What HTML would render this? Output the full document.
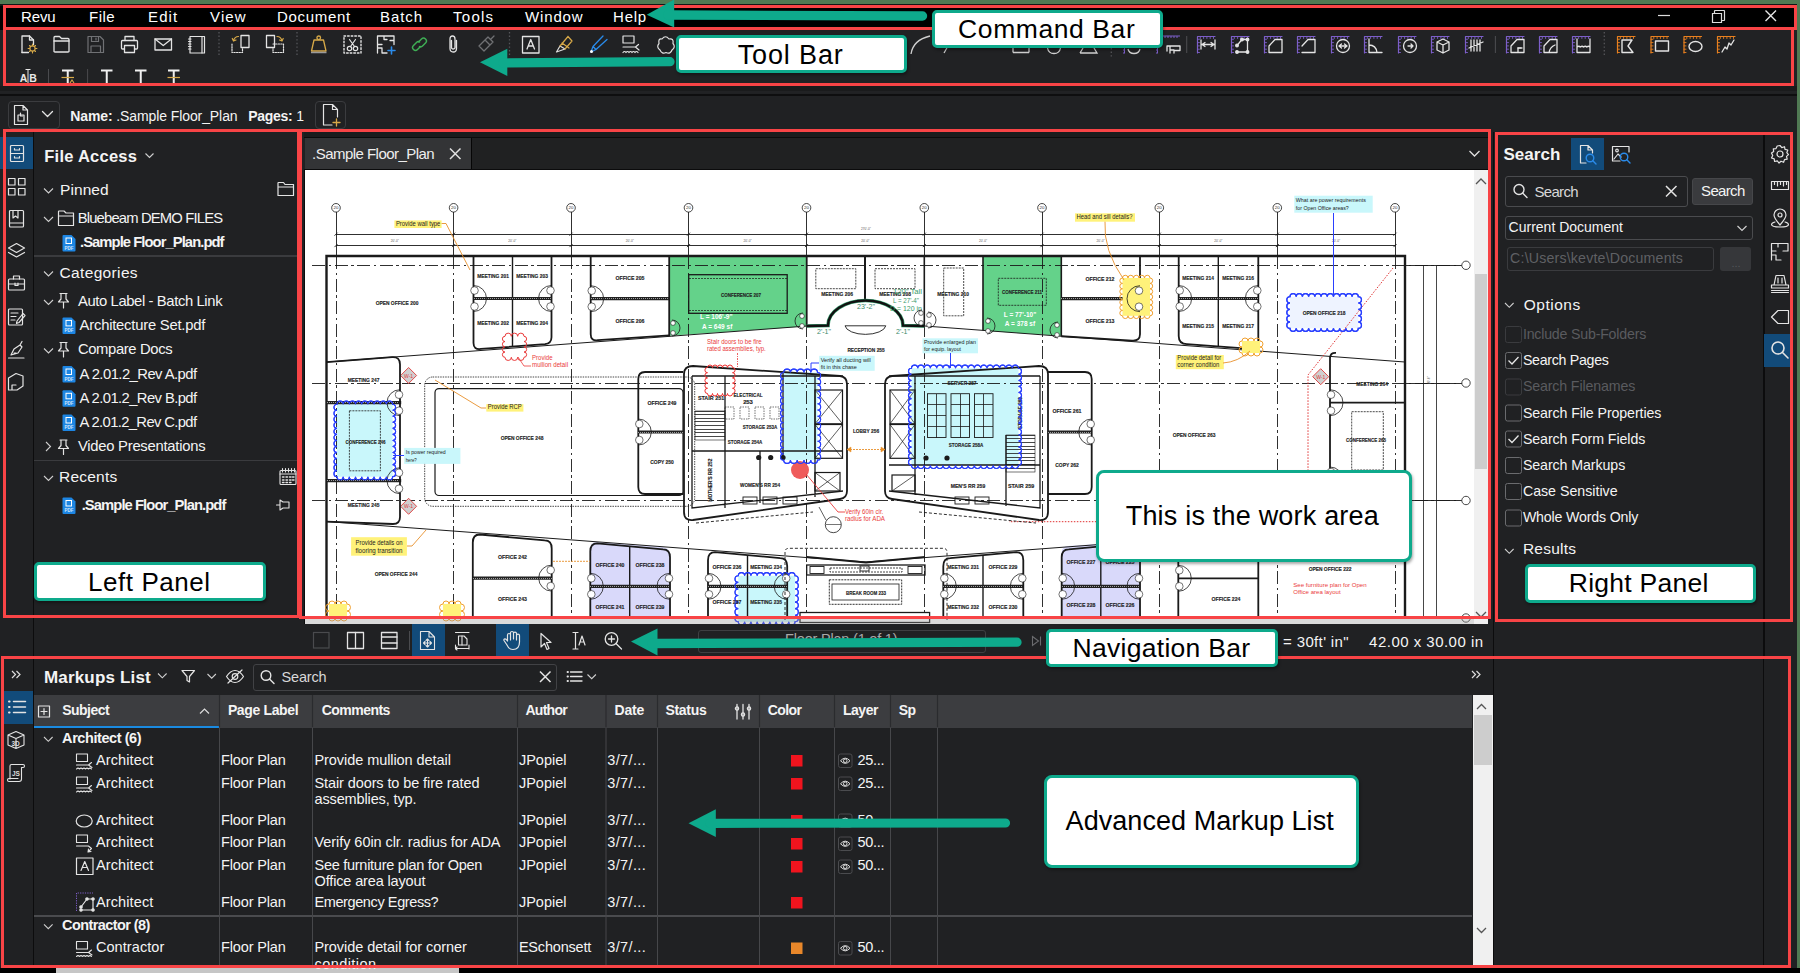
<!DOCTYPE html>
<html><head><meta charset="utf-8">
<style>
*{margin:0;padding:0;box-sizing:border-box}
html,body{width:1800px;height:973px;overflow:hidden;background:#202123;font-family:"Liberation Sans",sans-serif;color:#fff}
.a{position:absolute}
.t{position:absolute;white-space:pre;line-height:1;z-index:4}
.rr{position:absolute;border:3px solid #f84446;z-index:50}
.lab{position:absolute;background:#fff;border:3.7px solid #0eaa8c;z-index:60;box-shadow:1px 2px 3px rgba(0,0,0,.35)}
svg{position:absolute;overflow:visible}
</style></head>
<body>
<div class="a" style="left:0;top:0;width:1800px;height:4px;background:#507a53"></div>
<div class="a" style="left:1797px;top:0;width:3px;height:968px;background:#507a53"></div>
<div class="a" style="left:0;top:4px;width:1797px;height:2px;background:#151515"></div>
<div class="a" style="left:0;top:6px;width:1797px;height:24px;background:#000"></div>
<div class="a" style="left:0;top:30px;width:1797px;height:63px;background:#212224"></div>
<div class="a" style="left:0;top:86px;width:1797px;height:5px;background:#1a1b1c"></div>
<div class="a" style="left:0;top:93.5px;width:1797px;height:2.5px;background:#0e0e0f"></div>
<div class="a" style="left:0;top:96px;width:1797px;height:36px;background:#202123"></div>
<div class="a" style="left:8px;top:101px;width:52px;height:28px;border:1px solid #3b3c3f;border-radius:4px"></div>
<div class="a" style="left:315px;top:101px;width:31px;height:28px;border:1px solid #3b3c3f;border-radius:4px"></div>
<!-- left panel -->
<div class="a" style="left:0;top:132px;width:34px;height:524px;background:#202123;border-right:1px solid #0c0c0d"></div>
<div class="a" style="left:0;top:137px;width:33px;height:32px;background:#124b7a"></div>
<div class="a" style="left:34px;top:132px;width:266px;height:524px;background:#202123"></div>
<div class="a" style="left:34px;top:255px;width:263px;height:1.5px;background:#3a3b3e"></div>
<div class="a" style="left:34px;top:459.5px;width:263px;height:1.5px;background:#3a3b3e"></div>
<!-- work area -->
<div class="a" style="left:303.5px;top:132px;width:1px;height:524px;background:#0c0c0d"></div>
<div class="a" style="left:304px;top:132px;width:1186px;height:38px;background:#202122"></div>
<div class="a" style="left:304px;top:132px;width:1186px;height:5px;background:#1b1c1d"></div>
<div class="a" style="left:304px;top:137px;width:1186px;height:1.2px;background:#0b0b0c"></div>
<div class="a" style="left:304px;top:169px;width:1186px;height:1px;background:#0b0b0c"></div>
<div class="a" style="left:305px;top:138px;width:166px;height:31px;background:#333436"></div>
<div class="a" style="left:471px;top:138px;width:1px;height:31px;background:#060606"></div>
<div class="a" style="left:305px;top:170px;width:1170px;height:454px;background:#fff;overflow:hidden"><svg style="left:0;top:0" width="1170" height="454" viewBox="305 170 1170 454" font-family="Liberation Sans"><path d="M669.2,256 L806.7,256 L806.7,326.3 L669.2,335.8 Z" stroke="#1a1a1a" stroke-width="0" fill="#64d28a"/>
<path d="M983,256 L1061.3,256 L1061.3,335.8 L983,330.8 Z" stroke="#1a1a1a" stroke-width="0" fill="#64d28a"/>
<path d="M590.3,548 Q590.3,541.7 597,542 L663,547 Q670,548 670,555 L670,618 L590.3,618 Z" stroke="#1a1a1a" stroke-width="0" fill="#d9d9fa"/>
<path d="M1061.7,553 Q1061.7,546 1068,546 L1133,541.5 Q1140,541.5 1140,548 L1140,618 L1061.7,618 Z" stroke="#1a1a1a" stroke-width="0" fill="#d9d9fa"/>
<rect x="337" y="404.2" width="55.6" height="72.5" fill="#c9f7fb"/>
<path d="M337,404.2 a3.088888888888889,3.088888888888889 0 0 1 6.177777777777778,0 a3.088888888888889,3.088888888888889 0 0 1 6.177777777777778,0 a3.088888888888889,3.088888888888889 0 0 1 6.177777777777778,0 a3.088888888888889,3.088888888888889 0 0 1 6.177777777777778,0 a3.088888888888889,3.088888888888889 0 0 1 6.177777777777778,0 a3.088888888888889,3.088888888888889 0 0 1 6.177777777777778,0 a3.088888888888889,3.088888888888889 0 0 1 6.177777777777778,0 a3.088888888888889,3.088888888888889 0 0 1 6.177777777777778,0 a3.088888888888889,3.088888888888889 0 0 1 6.177777777777778,0 a3.0208333333333335,3.0208333333333335 0 0 1 0,6.041666666666667 a3.0208333333333335,3.0208333333333335 0 0 1 0,6.041666666666667 a3.0208333333333335,3.0208333333333335 0 0 1 0,6.041666666666667 a3.0208333333333335,3.0208333333333335 0 0 1 0,6.041666666666667 a3.0208333333333335,3.0208333333333335 0 0 1 0,6.041666666666667 a3.0208333333333335,3.0208333333333335 0 0 1 0,6.041666666666667 a3.0208333333333335,3.0208333333333335 0 0 1 0,6.041666666666667 a3.0208333333333335,3.0208333333333335 0 0 1 0,6.041666666666667 a3.0208333333333335,3.0208333333333335 0 0 1 0,6.041666666666667 a3.0208333333333335,3.0208333333333335 0 0 1 0,6.041666666666667 a3.0208333333333335,3.0208333333333335 0 0 1 0,6.041666666666667 a3.0208333333333335,3.0208333333333335 0 0 1 0,6.041666666666667 a3.088888888888889,3.088888888888889 0 0 1 -6.177777777777778,0 a3.088888888888889,3.088888888888889 0 0 1 -6.177777777777778,0 a3.088888888888889,3.088888888888889 0 0 1 -6.177777777777778,0 a3.088888888888889,3.088888888888889 0 0 1 -6.177777777777778,0 a3.088888888888889,3.088888888888889 0 0 1 -6.177777777777778,0 a3.088888888888889,3.088888888888889 0 0 1 -6.177777777777778,0 a3.088888888888889,3.088888888888889 0 0 1 -6.177777777777778,0 a3.088888888888889,3.088888888888889 0 0 1 -6.177777777777778,0 a3.088888888888889,3.088888888888889 0 0 1 -6.177777777777778,0 a3.0208333333333335,3.0208333333333335 0 0 1 0,-6.041666666666667 a3.0208333333333335,3.0208333333333335 0 0 1 0,-6.041666666666667 a3.0208333333333335,3.0208333333333335 0 0 1 0,-6.041666666666667 a3.0208333333333335,3.0208333333333335 0 0 1 0,-6.041666666666667 a3.0208333333333335,3.0208333333333335 0 0 1 0,-6.041666666666667 a3.0208333333333335,3.0208333333333335 0 0 1 0,-6.041666666666667 a3.0208333333333335,3.0208333333333335 0 0 1 0,-6.041666666666667 a3.0208333333333335,3.0208333333333335 0 0 1 0,-6.041666666666667 a3.0208333333333335,3.0208333333333335 0 0 1 0,-6.041666666666667 a3.0208333333333335,3.0208333333333335 0 0 1 0,-6.041666666666667 a3.0208333333333335,3.0208333333333335 0 0 1 0,-6.041666666666667 a3.0208333333333335,3.0208333333333335 0 0 1 0,-6.041666666666667Z" stroke="#2a40ff" stroke-width="1.1" fill="none"/>
<rect x="738.3" y="575.8" width="56.7" height="46" fill="#c9f7fb"/>
<path d="M738.3,575.8 a3.1500000000000004,3.1500000000000004 0 0 1 6.300000000000001,0 a3.1500000000000004,3.1500000000000004 0 0 1 6.300000000000001,0 a3.1500000000000004,3.1500000000000004 0 0 1 6.300000000000001,0 a3.1500000000000004,3.1500000000000004 0 0 1 6.300000000000001,0 a3.1500000000000004,3.1500000000000004 0 0 1 6.300000000000001,0 a3.1500000000000004,3.1500000000000004 0 0 1 6.300000000000001,0 a3.1500000000000004,3.1500000000000004 0 0 1 6.300000000000001,0 a3.1500000000000004,3.1500000000000004 0 0 1 6.300000000000001,0 a3.1500000000000004,3.1500000000000004 0 0 1 6.300000000000001,0 a3.2857142857142856,3.2857142857142856 0 0 1 0,6.571428571428571 a3.2857142857142856,3.2857142857142856 0 0 1 0,6.571428571428571 a3.2857142857142856,3.2857142857142856 0 0 1 0,6.571428571428571 a3.2857142857142856,3.2857142857142856 0 0 1 0,6.571428571428571 a3.2857142857142856,3.2857142857142856 0 0 1 0,6.571428571428571 a3.2857142857142856,3.2857142857142856 0 0 1 0,6.571428571428571 a3.2857142857142856,3.2857142857142856 0 0 1 0,6.571428571428571 a3.1500000000000004,3.1500000000000004 0 0 1 -6.300000000000001,0 a3.1500000000000004,3.1500000000000004 0 0 1 -6.300000000000001,0 a3.1500000000000004,3.1500000000000004 0 0 1 -6.300000000000001,0 a3.1500000000000004,3.1500000000000004 0 0 1 -6.300000000000001,0 a3.1500000000000004,3.1500000000000004 0 0 1 -6.300000000000001,0 a3.1500000000000004,3.1500000000000004 0 0 1 -6.300000000000001,0 a3.1500000000000004,3.1500000000000004 0 0 1 -6.300000000000001,0 a3.1500000000000004,3.1500000000000004 0 0 1 -6.300000000000001,0 a3.1500000000000004,3.1500000000000004 0 0 1 -6.300000000000001,0 a3.2857142857142856,3.2857142857142856 0 0 1 0,-6.571428571428571 a3.2857142857142856,3.2857142857142856 0 0 1 0,-6.571428571428571 a3.2857142857142856,3.2857142857142856 0 0 1 0,-6.571428571428571 a3.2857142857142856,3.2857142857142856 0 0 1 0,-6.571428571428571 a3.2857142857142856,3.2857142857142856 0 0 1 0,-6.571428571428571 a3.2857142857142856,3.2857142857142856 0 0 1 0,-6.571428571428571 a3.2857142857142856,3.2857142857142856 0 0 1 0,-6.571428571428571Z" stroke="#2a40ff" stroke-width="1.1" fill="none"/>
<rect x="783.7" y="372.5" width="33.8" height="87.5" fill="#c9f7fb"/>
<path d="M783.7,372.5 a3.38,3.38 0 0 1 6.76,0 a3.38,3.38 0 0 1 6.76,0 a3.38,3.38 0 0 1 6.76,0 a3.38,3.38 0 0 1 6.76,0 a3.38,3.38 0 0 1 6.76,0 a3.125,3.125 0 0 1 0,6.25 a3.125,3.125 0 0 1 0,6.25 a3.125,3.125 0 0 1 0,6.25 a3.125,3.125 0 0 1 0,6.25 a3.125,3.125 0 0 1 0,6.25 a3.125,3.125 0 0 1 0,6.25 a3.125,3.125 0 0 1 0,6.25 a3.125,3.125 0 0 1 0,6.25 a3.125,3.125 0 0 1 0,6.25 a3.125,3.125 0 0 1 0,6.25 a3.125,3.125 0 0 1 0,6.25 a3.125,3.125 0 0 1 0,6.25 a3.125,3.125 0 0 1 0,6.25 a3.125,3.125 0 0 1 0,6.25 a3.38,3.38 0 0 1 -6.76,0 a3.38,3.38 0 0 1 -6.76,0 a3.38,3.38 0 0 1 -6.76,0 a3.38,3.38 0 0 1 -6.76,0 a3.38,3.38 0 0 1 -6.76,0 a3.125,3.125 0 0 1 0,-6.25 a3.125,3.125 0 0 1 0,-6.25 a3.125,3.125 0 0 1 0,-6.25 a3.125,3.125 0 0 1 0,-6.25 a3.125,3.125 0 0 1 0,-6.25 a3.125,3.125 0 0 1 0,-6.25 a3.125,3.125 0 0 1 0,-6.25 a3.125,3.125 0 0 1 0,-6.25 a3.125,3.125 0 0 1 0,-6.25 a3.125,3.125 0 0 1 0,-6.25 a3.125,3.125 0 0 1 0,-6.25 a3.125,3.125 0 0 1 0,-6.25 a3.125,3.125 0 0 1 0,-6.25 a3.125,3.125 0 0 1 0,-6.25Z" stroke="#2a40ff" stroke-width="1.1" fill="none"/>
<rect x="911.5" y="368.3" width="107" height="97" fill="#c9f7fb"/>
<path d="M911.5,368.3 a3.1470588235294117,3.1470588235294117 0 0 1 6.294117647058823,0 a3.1470588235294117,3.1470588235294117 0 0 1 6.294117647058823,0 a3.1470588235294117,3.1470588235294117 0 0 1 6.294117647058823,0 a3.1470588235294117,3.1470588235294117 0 0 1 6.294117647058823,0 a3.1470588235294117,3.1470588235294117 0 0 1 6.294117647058823,0 a3.1470588235294117,3.1470588235294117 0 0 1 6.294117647058823,0 a3.1470588235294117,3.1470588235294117 0 0 1 6.294117647058823,0 a3.1470588235294117,3.1470588235294117 0 0 1 6.294117647058823,0 a3.1470588235294117,3.1470588235294117 0 0 1 6.294117647058823,0 a3.1470588235294117,3.1470588235294117 0 0 1 6.294117647058823,0 a3.1470588235294117,3.1470588235294117 0 0 1 6.294117647058823,0 a3.1470588235294117,3.1470588235294117 0 0 1 6.294117647058823,0 a3.1470588235294117,3.1470588235294117 0 0 1 6.294117647058823,0 a3.1470588235294117,3.1470588235294117 0 0 1 6.294117647058823,0 a3.1470588235294117,3.1470588235294117 0 0 1 6.294117647058823,0 a3.1470588235294117,3.1470588235294117 0 0 1 6.294117647058823,0 a3.1470588235294117,3.1470588235294117 0 0 1 6.294117647058823,0 a3.03125,3.03125 0 0 1 0,6.0625 a3.03125,3.03125 0 0 1 0,6.0625 a3.03125,3.03125 0 0 1 0,6.0625 a3.03125,3.03125 0 0 1 0,6.0625 a3.03125,3.03125 0 0 1 0,6.0625 a3.03125,3.03125 0 0 1 0,6.0625 a3.03125,3.03125 0 0 1 0,6.0625 a3.03125,3.03125 0 0 1 0,6.0625 a3.03125,3.03125 0 0 1 0,6.0625 a3.03125,3.03125 0 0 1 0,6.0625 a3.03125,3.03125 0 0 1 0,6.0625 a3.03125,3.03125 0 0 1 0,6.0625 a3.03125,3.03125 0 0 1 0,6.0625 a3.03125,3.03125 0 0 1 0,6.0625 a3.03125,3.03125 0 0 1 0,6.0625 a3.03125,3.03125 0 0 1 0,6.0625 a3.1470588235294117,3.1470588235294117 0 0 1 -6.294117647058823,0 a3.1470588235294117,3.1470588235294117 0 0 1 -6.294117647058823,0 a3.1470588235294117,3.1470588235294117 0 0 1 -6.294117647058823,0 a3.1470588235294117,3.1470588235294117 0 0 1 -6.294117647058823,0 a3.1470588235294117,3.1470588235294117 0 0 1 -6.294117647058823,0 a3.1470588235294117,3.1470588235294117 0 0 1 -6.294117647058823,0 a3.1470588235294117,3.1470588235294117 0 0 1 -6.294117647058823,0 a3.1470588235294117,3.1470588235294117 0 0 1 -6.294117647058823,0 a3.1470588235294117,3.1470588235294117 0 0 1 -6.294117647058823,0 a3.1470588235294117,3.1470588235294117 0 0 1 -6.294117647058823,0 a3.1470588235294117,3.1470588235294117 0 0 1 -6.294117647058823,0 a3.1470588235294117,3.1470588235294117 0 0 1 -6.294117647058823,0 a3.1470588235294117,3.1470588235294117 0 0 1 -6.294117647058823,0 a3.1470588235294117,3.1470588235294117 0 0 1 -6.294117647058823,0 a3.1470588235294117,3.1470588235294117 0 0 1 -6.294117647058823,0 a3.1470588235294117,3.1470588235294117 0 0 1 -6.294117647058823,0 a3.1470588235294117,3.1470588235294117 0 0 1 -6.294117647058823,0 a3.03125,3.03125 0 0 1 0,-6.0625 a3.03125,3.03125 0 0 1 0,-6.0625 a3.03125,3.03125 0 0 1 0,-6.0625 a3.03125,3.03125 0 0 1 0,-6.0625 a3.03125,3.03125 0 0 1 0,-6.0625 a3.03125,3.03125 0 0 1 0,-6.0625 a3.03125,3.03125 0 0 1 0,-6.0625 a3.03125,3.03125 0 0 1 0,-6.0625 a3.03125,3.03125 0 0 1 0,-6.0625 a3.03125,3.03125 0 0 1 0,-6.0625 a3.03125,3.03125 0 0 1 0,-6.0625 a3.03125,3.03125 0 0 1 0,-6.0625 a3.03125,3.03125 0 0 1 0,-6.0625 a3.03125,3.03125 0 0 1 0,-6.0625 a3.03125,3.03125 0 0 1 0,-6.0625 a3.03125,3.03125 0 0 1 0,-6.0625Z" stroke="#2a40ff" stroke-width="1.1" fill="none"/>
<rect x="1290" y="296.7" width="68.3" height="31.6" fill="#eef3ff"/>
<path d="M1290,296.7 a3.1045454545454545,3.1045454545454545 0 0 1 6.209090909090909,0 a3.1045454545454545,3.1045454545454545 0 0 1 6.209090909090909,0 a3.1045454545454545,3.1045454545454545 0 0 1 6.209090909090909,0 a3.1045454545454545,3.1045454545454545 0 0 1 6.209090909090909,0 a3.1045454545454545,3.1045454545454545 0 0 1 6.209090909090909,0 a3.1045454545454545,3.1045454545454545 0 0 1 6.209090909090909,0 a3.1045454545454545,3.1045454545454545 0 0 1 6.209090909090909,0 a3.1045454545454545,3.1045454545454545 0 0 1 6.209090909090909,0 a3.1045454545454545,3.1045454545454545 0 0 1 6.209090909090909,0 a3.1045454545454545,3.1045454545454545 0 0 1 6.209090909090909,0 a3.1045454545454545,3.1045454545454545 0 0 1 6.209090909090909,0 a3.16,3.16 0 0 1 0,6.32 a3.16,3.16 0 0 1 0,6.32 a3.16,3.16 0 0 1 0,6.32 a3.16,3.16 0 0 1 0,6.32 a3.16,3.16 0 0 1 0,6.32 a3.1045454545454545,3.1045454545454545 0 0 1 -6.209090909090909,0 a3.1045454545454545,3.1045454545454545 0 0 1 -6.209090909090909,0 a3.1045454545454545,3.1045454545454545 0 0 1 -6.209090909090909,0 a3.1045454545454545,3.1045454545454545 0 0 1 -6.209090909090909,0 a3.1045454545454545,3.1045454545454545 0 0 1 -6.209090909090909,0 a3.1045454545454545,3.1045454545454545 0 0 1 -6.209090909090909,0 a3.1045454545454545,3.1045454545454545 0 0 1 -6.209090909090909,0 a3.1045454545454545,3.1045454545454545 0 0 1 -6.209090909090909,0 a3.1045454545454545,3.1045454545454545 0 0 1 -6.209090909090909,0 a3.1045454545454545,3.1045454545454545 0 0 1 -6.209090909090909,0 a3.1045454545454545,3.1045454545454545 0 0 1 -6.209090909090909,0 a3.16,3.16 0 0 1 0,-6.32 a3.16,3.16 0 0 1 0,-6.32 a3.16,3.16 0 0 1 0,-6.32 a3.16,3.16 0 0 1 0,-6.32 a3.16,3.16 0 0 1 0,-6.32Z" stroke="#2a40ff" stroke-width="1.1" fill="none"/>
<circle cx="336" cy="207.8" r="4.3" stroke="#1a1a1a" stroke-width="0.8" fill="#fff"/>
<text x="336" y="209.4" font-size="4" fill="#333" text-anchor="middle" font-weight="normal" textLength="5" lengthAdjust="spacingAndGlyphs">20</text>
<line x1="336" y1="212" x2="336" y2="256" stroke="#1a1a1a" stroke-width="0.9" shape-rendering="crispEdges"/>
<line x1="336" y1="256" x2="336" y2="618" stroke="#1a1a1a" stroke-width="0.9" stroke-dasharray="13 3.5 2.5 3.5" shape-rendering="crispEdges"/>
<circle cx="453.6" cy="207.8" r="4.3" stroke="#1a1a1a" stroke-width="0.8" fill="#fff"/>
<text x="453.6" y="209.4" font-size="4" fill="#333" text-anchor="middle" font-weight="normal" textLength="5" lengthAdjust="spacingAndGlyphs">20</text>
<line x1="453.6" y1="212" x2="453.6" y2="256" stroke="#1a1a1a" stroke-width="0.9" shape-rendering="crispEdges"/>
<line x1="453.6" y1="256" x2="453.6" y2="618" stroke="#1a1a1a" stroke-width="0.9" stroke-dasharray="13 3.5 2.5 3.5" shape-rendering="crispEdges"/>
<circle cx="571" cy="207.8" r="4.3" stroke="#1a1a1a" stroke-width="0.8" fill="#fff"/>
<text x="571" y="209.4" font-size="4" fill="#333" text-anchor="middle" font-weight="normal" textLength="5" lengthAdjust="spacingAndGlyphs">20</text>
<line x1="571" y1="212" x2="571" y2="256" stroke="#1a1a1a" stroke-width="0.9" shape-rendering="crispEdges"/>
<line x1="571" y1="256" x2="571" y2="618" stroke="#1a1a1a" stroke-width="0.9" stroke-dasharray="13 3.5 2.5 3.5" shape-rendering="crispEdges"/>
<circle cx="688.5" cy="207.8" r="4.3" stroke="#1a1a1a" stroke-width="0.8" fill="#fff"/>
<text x="688.5" y="209.4" font-size="4" fill="#333" text-anchor="middle" font-weight="normal" textLength="5" lengthAdjust="spacingAndGlyphs">20</text>
<line x1="688.5" y1="212" x2="688.5" y2="256" stroke="#1a1a1a" stroke-width="0.9" shape-rendering="crispEdges"/>
<line x1="688.5" y1="256" x2="688.5" y2="618" stroke="#1a1a1a" stroke-width="0.9" stroke-dasharray="13 3.5 2.5 3.5" shape-rendering="crispEdges"/>
<circle cx="806.5" cy="207.8" r="4.3" stroke="#1a1a1a" stroke-width="0.8" fill="#fff"/>
<text x="806.5" y="209.4" font-size="4" fill="#333" text-anchor="middle" font-weight="normal" textLength="5" lengthAdjust="spacingAndGlyphs">20</text>
<line x1="806.5" y1="212" x2="806.5" y2="256" stroke="#1a1a1a" stroke-width="0.9" shape-rendering="crispEdges"/>
<line x1="806.5" y1="256" x2="806.5" y2="618" stroke="#1a1a1a" stroke-width="0.9" stroke-dasharray="13 3.5 2.5 3.5" shape-rendering="crispEdges"/>
<circle cx="924.3" cy="207.8" r="4.3" stroke="#1a1a1a" stroke-width="0.8" fill="#fff"/>
<text x="924.3" y="209.4" font-size="4" fill="#333" text-anchor="middle" font-weight="normal" textLength="5" lengthAdjust="spacingAndGlyphs">20</text>
<line x1="924.3" y1="212" x2="924.3" y2="256" stroke="#1a1a1a" stroke-width="0.9" shape-rendering="crispEdges"/>
<line x1="924.3" y1="256" x2="924.3" y2="618" stroke="#1a1a1a" stroke-width="0.9" stroke-dasharray="13 3.5 2.5 3.5" shape-rendering="crispEdges"/>
<circle cx="1042" cy="207.8" r="4.3" stroke="#1a1a1a" stroke-width="0.8" fill="#fff"/>
<text x="1042" y="209.4" font-size="4" fill="#333" text-anchor="middle" font-weight="normal" textLength="5" lengthAdjust="spacingAndGlyphs">20</text>
<line x1="1042" y1="212" x2="1042" y2="256" stroke="#1a1a1a" stroke-width="0.9" shape-rendering="crispEdges"/>
<line x1="1042" y1="256" x2="1042" y2="618" stroke="#1a1a1a" stroke-width="0.9" stroke-dasharray="13 3.5 2.5 3.5" shape-rendering="crispEdges"/>
<circle cx="1159.3" cy="207.8" r="4.3" stroke="#1a1a1a" stroke-width="0.8" fill="#fff"/>
<text x="1159.3" y="209.4" font-size="4" fill="#333" text-anchor="middle" font-weight="normal" textLength="5" lengthAdjust="spacingAndGlyphs">20</text>
<line x1="1159.3" y1="212" x2="1159.3" y2="256" stroke="#1a1a1a" stroke-width="0.9" shape-rendering="crispEdges"/>
<line x1="1159.3" y1="256" x2="1159.3" y2="618" stroke="#1a1a1a" stroke-width="0.9" stroke-dasharray="13 3.5 2.5 3.5" shape-rendering="crispEdges"/>
<circle cx="1277.3" cy="207.8" r="4.3" stroke="#1a1a1a" stroke-width="0.8" fill="#fff"/>
<text x="1277.3" y="209.4" font-size="4" fill="#333" text-anchor="middle" font-weight="normal" textLength="5" lengthAdjust="spacingAndGlyphs">20</text>
<line x1="1277.3" y1="212" x2="1277.3" y2="256" stroke="#1a1a1a" stroke-width="0.9" shape-rendering="crispEdges"/>
<line x1="1277.3" y1="256" x2="1277.3" y2="618" stroke="#1a1a1a" stroke-width="0.9" stroke-dasharray="13 3.5 2.5 3.5" shape-rendering="crispEdges"/>
<circle cx="1395" cy="207.8" r="4.3" stroke="#1a1a1a" stroke-width="0.8" fill="#fff"/>
<text x="1395" y="209.4" font-size="4" fill="#333" text-anchor="middle" font-weight="normal" textLength="5" lengthAdjust="spacingAndGlyphs">20</text>
<line x1="1395" y1="212" x2="1395" y2="256" stroke="#1a1a1a" stroke-width="0.9" shape-rendering="crispEdges"/>
<line x1="1395" y1="256" x2="1395" y2="618" stroke="#1a1a1a" stroke-width="0.9" stroke-dasharray="13 3.5 2.5 3.5" shape-rendering="crispEdges"/>
<line x1="312" y1="265.3" x2="1458" y2="265.3" stroke="#1a1a1a" stroke-width="0.9" stroke-dasharray="13 3.5 2.5 3.5" shape-rendering="crispEdges"/>
<line x1="1405" y1="265.3" x2="1462" y2="265.3" stroke="#1a1a1a" stroke-width="0.9" shape-rendering="crispEdges"/>
<circle cx="1466" cy="265.3" r="4.2" stroke="#1a1a1a" stroke-width="0.8" fill="#fff"/>
<line x1="312" y1="383" x2="1458" y2="383" stroke="#1a1a1a" stroke-width="0.9" stroke-dasharray="13 3.5 2.5 3.5" shape-rendering="crispEdges"/>
<line x1="1405" y1="383" x2="1462" y2="383" stroke="#1a1a1a" stroke-width="0.9" shape-rendering="crispEdges"/>
<circle cx="1466" cy="383" r="4.2" stroke="#1a1a1a" stroke-width="0.8" fill="#fff"/>
<line x1="312" y1="500.5" x2="1458" y2="500.5" stroke="#1a1a1a" stroke-width="0.9" stroke-dasharray="13 3.5 2.5 3.5" shape-rendering="crispEdges"/>
<line x1="1405" y1="500.5" x2="1462" y2="500.5" stroke="#1a1a1a" stroke-width="0.9" shape-rendering="crispEdges"/>
<circle cx="1466" cy="500.5" r="4.2" stroke="#1a1a1a" stroke-width="0.8" fill="#fff"/>
<circle cx="1466" cy="618" r="4.2" stroke="#1a1a1a" stroke-width="0.8" fill="#fff"/>
<line x1="336" y1="234.2" x2="1395" y2="234.2" stroke="#1a1a1a" stroke-width="0.9" shape-rendering="crispEdges"/>
<line x1="336" y1="245.6" x2="1395" y2="245.6" stroke="#1a1a1a" stroke-width="0.9" shape-rendering="crispEdges"/>
<line x1="334.5" y1="235.7" x2="337.5" y2="232.7" stroke="#1a1a1a" stroke-width="0.9"/>
<line x1="334.5" y1="247.1" x2="337.5" y2="244.1" stroke="#1a1a1a" stroke-width="0.9"/>
<line x1="452.1" y1="235.7" x2="455.1" y2="232.7" stroke="#1a1a1a" stroke-width="0.9"/>
<line x1="452.1" y1="247.1" x2="455.1" y2="244.1" stroke="#1a1a1a" stroke-width="0.9"/>
<line x1="569.5" y1="235.7" x2="572.5" y2="232.7" stroke="#1a1a1a" stroke-width="0.9"/>
<line x1="569.5" y1="247.1" x2="572.5" y2="244.1" stroke="#1a1a1a" stroke-width="0.9"/>
<line x1="687.0" y1="235.7" x2="690.0" y2="232.7" stroke="#1a1a1a" stroke-width="0.9"/>
<line x1="687.0" y1="247.1" x2="690.0" y2="244.1" stroke="#1a1a1a" stroke-width="0.9"/>
<line x1="805.0" y1="235.7" x2="808.0" y2="232.7" stroke="#1a1a1a" stroke-width="0.9"/>
<line x1="805.0" y1="247.1" x2="808.0" y2="244.1" stroke="#1a1a1a" stroke-width="0.9"/>
<line x1="922.8" y1="235.7" x2="925.8" y2="232.7" stroke="#1a1a1a" stroke-width="0.9"/>
<line x1="922.8" y1="247.1" x2="925.8" y2="244.1" stroke="#1a1a1a" stroke-width="0.9"/>
<line x1="1040.5" y1="235.7" x2="1043.5" y2="232.7" stroke="#1a1a1a" stroke-width="0.9"/>
<line x1="1040.5" y1="247.1" x2="1043.5" y2="244.1" stroke="#1a1a1a" stroke-width="0.9"/>
<line x1="1157.8" y1="235.7" x2="1160.8" y2="232.7" stroke="#1a1a1a" stroke-width="0.9"/>
<line x1="1157.8" y1="247.1" x2="1160.8" y2="244.1" stroke="#1a1a1a" stroke-width="0.9"/>
<line x1="1275.8" y1="235.7" x2="1278.8" y2="232.7" stroke="#1a1a1a" stroke-width="0.9"/>
<line x1="1275.8" y1="247.1" x2="1278.8" y2="244.1" stroke="#1a1a1a" stroke-width="0.9"/>
<line x1="1393.5" y1="235.7" x2="1396.5" y2="232.7" stroke="#1a1a1a" stroke-width="0.9"/>
<line x1="1393.5" y1="247.1" x2="1396.5" y2="244.1" stroke="#1a1a1a" stroke-width="0.9"/>
<text x="394.8" y="241.5" font-size="3.2" fill="#555" text-anchor="middle" font-weight="normal">20'-0"</text>
<text x="512.3" y="241.5" font-size="3.2" fill="#555" text-anchor="middle" font-weight="normal">20'-0"</text>
<text x="629.75" y="241.5" font-size="3.2" fill="#555" text-anchor="middle" font-weight="normal">20'-0"</text>
<text x="747.5" y="241.5" font-size="3.2" fill="#555" text-anchor="middle" font-weight="normal">20'-0"</text>
<text x="865.4" y="241.5" font-size="3.2" fill="#555" text-anchor="middle" font-weight="normal">20'-0"</text>
<text x="983.15" y="241.5" font-size="3.2" fill="#555" text-anchor="middle" font-weight="normal">20'-0"</text>
<text x="1100.65" y="241.5" font-size="3.2" fill="#555" text-anchor="middle" font-weight="normal">20'-0"</text>
<text x="1218.3" y="241.5" font-size="3.2" fill="#555" text-anchor="middle" font-weight="normal">20'-0"</text>
<text x="1336.15" y="241.5" font-size="3.2" fill="#555" text-anchor="middle" font-weight="normal">20'-0"</text>
<text x="866" y="230" font-size="3.2" fill="#555" text-anchor="middle" font-weight="normal">270'-0"</text>
<line x1="1423" y1="265" x2="1423" y2="618" stroke="#1a1a1a" stroke-width="0.8" shape-rendering="crispEdges"/>
<line x1="1436" y1="265" x2="1436" y2="618" stroke="#1a1a1a" stroke-width="0.8" shape-rendering="crispEdges"/>
<text x="1430" y="380" font-size="3" fill="#555" text-anchor="middle" font-weight="normal" transform="rotate(-90 1430 380)">30'-0"</text>
<path d="M326.5,618 L326.5,256 L1405,256 L1405,618" stroke="#1a1a1a" stroke-width="2.4" fill="none"/>
<path d="M326.5,362.0625 L806.7,326.0475 M924.3,325.9725 L1405,362.02500000000003" stroke="#1a1a1a" stroke-width="1.0" fill="none"/>
<path d="M326.5,521.5375 L866,562.0 L1405,521.575" stroke="#1a1a1a" stroke-width="1.0" fill="none"/>
<path d="M473.5,256 V343.0375 Q473.5,350.0375 481,348.975 L545,344.175 Q551.5,343.1875 551.5,337.1875 V256" stroke="#1a1a1a" stroke-width="1.8" fill="none"/>
<line x1="512.5" y1="256" x2="512.5" y2="346.6125" stroke="#1a1a1a" stroke-width="1.4"/>
<line x1="473.5" y1="298.5" x2="551.5" y2="298.5" stroke="#222" stroke-width="3.2"/>
<line x1="473.5" y1="298.5" x2="551.5" y2="298.5" stroke="#bbb" stroke-width="0.8" stroke-dasharray="1 1" shape-rendering="crispEdges"/>
<path d="M473.5,285.5 A13,13 0 0 1 473.5,311.5" stroke="#1a1a1a" stroke-width="0.8" fill="none"/>
<circle cx="474.5" cy="290.5" r="3.8" stroke="#1a1a1a" stroke-width="0.6" fill="#fff"/>
<circle cx="474.5" cy="306.5" r="3.8" stroke="#1a1a1a" stroke-width="0.6" fill="#fff"/>
<path d="M551.5,285.5 A13,13 0 0 0 551.5,311.5" stroke="#1a1a1a" stroke-width="0.8" fill="none"/>
<circle cx="550.5" cy="290.5" r="3.8" stroke="#1a1a1a" stroke-width="0.6" fill="#fff"/>
<circle cx="550.5" cy="306.5" r="3.8" stroke="#1a1a1a" stroke-width="0.6" fill="#fff"/>
<text x="493" y="277.5" font-size="6.0" fill="#222" text-anchor="middle" font-weight="bold" textLength="31.75" lengthAdjust="spacingAndGlyphs" stroke="#222" stroke-width="0.15">MEETING 201</text>
<text x="532" y="277.5" font-size="6.0" fill="#222" text-anchor="middle" font-weight="bold" textLength="31.75" lengthAdjust="spacingAndGlyphs" stroke="#222" stroke-width="0.15">MEETING 203</text>
<text x="493" y="325" font-size="6.0" fill="#222" text-anchor="middle" font-weight="bold" textLength="31.75" lengthAdjust="spacingAndGlyphs" stroke="#222" stroke-width="0.15">MEETING 202</text>
<text x="532" y="325" font-size="6.0" fill="#222" text-anchor="middle" font-weight="bold" textLength="31.75" lengthAdjust="spacingAndGlyphs" stroke="#222" stroke-width="0.15">MEETING 204</text>
<path d="M590.7,256 V334.2475 Q590.7,341.2475 598,340.20000000000005 L669.2,335.36" stroke="#1a1a1a" stroke-width="1.8" fill="none"/>
<line x1="669.2" y1="256" x2="669.2" y2="336.36" stroke="#1a1a1a" stroke-width="1.8"/>
<line x1="590.7" y1="298.7" x2="669.2" y2="298.7" stroke="#222" stroke-width="3.2"/>
<line x1="590.7" y1="298.7" x2="669.2" y2="298.7" stroke="#bbb" stroke-width="0.8" stroke-dasharray="1 1" shape-rendering="crispEdges"/>
<path d="M590.7,285.7 A13,13 0 0 1 590.7,311.7" stroke="#1a1a1a" stroke-width="0.8" fill="none"/>
<circle cx="591.7" cy="290.7" r="3.8" stroke="#1a1a1a" stroke-width="0.6" fill="#fff"/>
<circle cx="591.7" cy="306.7" r="3.8" stroke="#1a1a1a" stroke-width="0.6" fill="#fff"/>
<text x="630" y="280" font-size="6.0" fill="#222" text-anchor="middle" font-weight="bold" textLength="29.0" lengthAdjust="spacingAndGlyphs" stroke="#222" stroke-width="0.15">OFFICE 205</text>
<text x="630" y="323" font-size="6.0" fill="#222" text-anchor="middle" font-weight="bold" textLength="29.0" lengthAdjust="spacingAndGlyphs" stroke="#222" stroke-width="0.15">OFFICE 206</text>
<line x1="806.7" y1="256" x2="806.7" y2="326.0475" stroke="#1a1a1a" stroke-width="1.8"/>
<rect x="688.7" y="274.7" width="98.5" height="38.6" rx="0" stroke="#1a1a1a" stroke-width="1.3" fill="none"/>
<line x1="689" y1="278.3" x2="787" y2="278.3" stroke="#1a1a1a" stroke-width="0.7" stroke-dasharray="2 1" shape-rendering="crispEdges"/>
<line x1="689" y1="310" x2="787" y2="310" stroke="#1a1a1a" stroke-width="0.7" stroke-dasharray="2 1" shape-rendering="crispEdges"/>
<text x="741" y="297" font-size="6.0" fill="#222" text-anchor="middle" font-weight="bold" textLength="40.0" lengthAdjust="spacingAndGlyphs" stroke="#222" stroke-width="0.15">CONFERENCE 207</text>
<text x="700" y="319" font-size="6.5" fill="#fff" text-anchor="start" font-weight="bold">L = 106'-9"</text>
<text x="702" y="328.5" font-size="6.5" fill="#fff" text-anchor="start" font-weight="bold">A = 649 sf</text>
<path d="M672,320 A8,8 0 0 1 672,336" stroke="#1a1a1a" stroke-width="0.8" fill="none"/>
<circle cx="673" cy="323.0769230769231" r="2.3384615384615386" stroke="#1a1a1a" stroke-width="0.6" fill="#fff"/>
<circle cx="673" cy="332.9230769230769" r="2.3384615384615386" stroke="#1a1a1a" stroke-width="0.6" fill="#fff"/>
<path d="M803,313 A8,8 0 0 0 803,329" stroke="#1a1a1a" stroke-width="0.8" fill="none"/>
<circle cx="802" cy="316.0769230769231" r="2.3384615384615386" stroke="#1a1a1a" stroke-width="0.6" fill="#fff"/>
<circle cx="802" cy="325.9230769230769" r="2.3384615384615386" stroke="#1a1a1a" stroke-width="0.6" fill="#fff"/>
<rect x="815.8" y="268.7" width="40" height="20" rx="0" stroke="#1a1a1a" stroke-width="0.8" fill="#fff" stroke-dasharray="2 1"/>
<rect x="875" y="268.7" width="40" height="20" rx="0" stroke="#1a1a1a" stroke-width="0.8" fill="#fff" stroke-dasharray="2 1"/>
<line x1="865" y1="256" x2="865" y2="300" stroke="#1a1a1a" stroke-width="1.2" shape-rendering="crispEdges"/>
<text x="837" y="296" font-size="6.0" fill="#222" text-anchor="middle" font-weight="bold" textLength="31.75" lengthAdjust="spacingAndGlyphs" stroke="#222" stroke-width="0.15">MEETING 206</text>
<text x="895" y="296" font-size="6.0" fill="#222" text-anchor="middle" font-weight="bold" textLength="31.75" lengthAdjust="spacingAndGlyphs" stroke="#222" stroke-width="0.15">MEETING 208</text>
<path d="M806.7,326 L828,325.5 A37.5,25 0 0 1 903,325.5 L924.3,326" stroke="#3aa070" stroke-width="3.6" fill="none"/>
<path d="M806.7,326 L828,325.5 A37.5,25 0 0 1 903,325.5 L924.3,326" stroke="#111" stroke-width="2.4" fill="none"/>
<path d="M845,325.8 A20.5,9.5 0 0 0 885.8,325.8 Z" stroke="#1a1a1a" stroke-width="0.9" fill="#fff"/>
<text x="866" y="352" font-size="6.0" fill="#222" text-anchor="middle" font-weight="bold" textLength="37.25" lengthAdjust="spacingAndGlyphs" stroke="#222" stroke-width="0.15">RECEPTION 255</text>
<text x="824" y="333.5" font-size="7.5" fill="#3a8a6a" text-anchor="middle" font-weight="normal" textLength="14" lengthAdjust="spacingAndGlyphs">2'-1"</text>
<text x="903" y="333.5" font-size="7.5" fill="#3a8a6a" text-anchor="middle" font-weight="normal" textLength="14" lengthAdjust="spacingAndGlyphs">2'-1"</text>
<text x="866" y="309" font-size="7.5" fill="#3a8a6a" text-anchor="middle" font-weight="normal" textLength="18" lengthAdjust="spacingAndGlyphs">23'-2"</text>
<text x="893" y="294" font-size="7.5" fill="#3a9a6a" text-anchor="start" font-weight="normal" textLength="29" lengthAdjust="spacingAndGlyphs">120" Tall</text>
<text x="893" y="302.5" font-size="7.5" fill="#3a9a6a" text-anchor="start" font-weight="normal" textLength="26" lengthAdjust="spacingAndGlyphs">L = 27'-4"</text>
<text x="890" y="311" font-size="7.5" fill="#3a9a6a" text-anchor="start" font-weight="normal" textLength="32" lengthAdjust="spacingAndGlyphs">D = 120 in</text>
<line x1="924.3" y1="256" x2="924.3" y2="325.9725" stroke="#1a1a1a" stroke-width="1.6"/>
<rect x="943.7" y="268" width="20" height="47.8" rx="0" stroke="#1a1a1a" stroke-width="0.8" fill="#fff" stroke-dasharray="2 1"/>
<text x="953" y="295.5" font-size="6.0" fill="#222" text-anchor="middle" font-weight="bold" textLength="31.75" lengthAdjust="spacingAndGlyphs" stroke="#222" stroke-width="0.15">MEETING 210</text>
<path d="M922,310 A8,8 0 0 0 922,326" stroke="#1a1a1a" stroke-width="0.8" fill="none"/>
<circle cx="921" cy="313.0769230769231" r="2.3384615384615386" stroke="#1a1a1a" stroke-width="0.6" fill="#fff"/>
<circle cx="921" cy="322.9230769230769" r="2.3384615384615386" stroke="#1a1a1a" stroke-width="0.6" fill="#fff"/>
<path d="M928,312 A8,8 0 0 1 928,328" stroke="#1a1a1a" stroke-width="0.8" fill="none"/>
<circle cx="929" cy="315.0769230769231" r="2.3384615384615386" stroke="#1a1a1a" stroke-width="0.6" fill="#fff"/>
<circle cx="929" cy="324.9230769230769" r="2.3384615384615386" stroke="#1a1a1a" stroke-width="0.6" fill="#fff"/>
<line x1="983" y1="256" x2="983" y2="330.375" stroke="#1a1a1a" stroke-width="1.6"/>
<line x1="1061.3" y1="256" x2="1061.3" y2="336.2475" stroke="#1a1a1a" stroke-width="1.6"/>
<rect x="998.3" y="278.3" width="48" height="27" rx="0" stroke="#1a1a1a" stroke-width="0.8" fill="none" stroke-dasharray="2 1"/>
<text x="1022" y="293.5" font-size="6.0" fill="#222" text-anchor="middle" font-weight="bold" textLength="40.0" lengthAdjust="spacingAndGlyphs" stroke="#222" stroke-width="0.15">CONFERENCE 211</text>
<text x="1020" y="317" font-size="6.5" fill="#fff" text-anchor="middle" font-weight="bold">L = 77'-10"</text>
<text x="1020" y="326" font-size="6.5" fill="#fff" text-anchor="middle" font-weight="bold">A = 378 sf</text>
<path d="M987,318 A8,8 0 0 1 987,334" stroke="#1a1a1a" stroke-width="0.8" fill="none"/>
<circle cx="988" cy="321.0769230769231" r="2.3384615384615386" stroke="#1a1a1a" stroke-width="0.6" fill="#fff"/>
<circle cx="988" cy="330.9230769230769" r="2.3384615384615386" stroke="#1a1a1a" stroke-width="0.6" fill="#fff"/>
<path d="M1058,322 A8,8 0 0 0 1058,338" stroke="#1a1a1a" stroke-width="0.8" fill="none"/>
<circle cx="1057" cy="325.0769230769231" r="2.3384615384615386" stroke="#1a1a1a" stroke-width="0.6" fill="#fff"/>
<circle cx="1057" cy="334.9230769230769" r="2.3384615384615386" stroke="#1a1a1a" stroke-width="0.6" fill="#fff"/>
<path d="M1140,256 V334.15000000000003 Q1140,341.15000000000003 1132,340.55 L1061.3,336.2475" stroke="#1a1a1a" stroke-width="1.8" fill="none"/>
<line x1="1061.3" y1="298.7" x2="1140" y2="298.7" stroke="#222" stroke-width="3.2"/>
<line x1="1061.3" y1="298.7" x2="1140" y2="298.7" stroke="#bbb" stroke-width="0.8" stroke-dasharray="1 1" shape-rendering="crispEdges"/>
<rect x="1122.5" y="278" width="27.5" height="37.8" fill="#fff27a"/>
<path d="M1122.5,278 a2.75,2.75 0 0 1 5.5,0 a2.75,2.75 0 0 1 5.5,0 a2.75,2.75 0 0 1 5.5,0 a2.75,2.75 0 0 1 5.5,0 a2.75,2.75 0 0 1 5.5,0 a2.6999999999999997,2.6999999999999997 0 0 1 0,5.3999999999999995 a2.6999999999999997,2.6999999999999997 0 0 1 0,5.3999999999999995 a2.6999999999999997,2.6999999999999997 0 0 1 0,5.3999999999999995 a2.6999999999999997,2.6999999999999997 0 0 1 0,5.3999999999999995 a2.6999999999999997,2.6999999999999997 0 0 1 0,5.3999999999999995 a2.6999999999999997,2.6999999999999997 0 0 1 0,5.3999999999999995 a2.6999999999999997,2.6999999999999997 0 0 1 0,5.3999999999999995 a2.75,2.75 0 0 1 -5.5,0 a2.75,2.75 0 0 1 -5.5,0 a2.75,2.75 0 0 1 -5.5,0 a2.75,2.75 0 0 1 -5.5,0 a2.75,2.75 0 0 1 -5.5,0 a2.6999999999999997,2.6999999999999997 0 0 1 0,-5.3999999999999995 a2.6999999999999997,2.6999999999999997 0 0 1 0,-5.3999999999999995 a2.6999999999999997,2.6999999999999997 0 0 1 0,-5.3999999999999995 a2.6999999999999997,2.6999999999999997 0 0 1 0,-5.3999999999999995 a2.6999999999999997,2.6999999999999997 0 0 1 0,-5.3999999999999995 a2.6999999999999997,2.6999999999999997 0 0 1 0,-5.3999999999999995 a2.6999999999999997,2.6999999999999997 0 0 1 0,-5.3999999999999995Z" stroke="#f0a030" stroke-width="1.0" fill="none"/>
<path d="M1140,285.7 A13,13 0 0 0 1140,311.7" stroke="#1a1a1a" stroke-width="0.8" fill="none"/>
<circle cx="1139" cy="290.7" r="3.8" stroke="#1a1a1a" stroke-width="0.6" fill="#fff"/>
<circle cx="1139" cy="306.7" r="3.8" stroke="#1a1a1a" stroke-width="0.6" fill="#fff"/>
<text x="1100" y="281" font-size="6.0" fill="#222" text-anchor="middle" font-weight="bold" textLength="29.0" lengthAdjust="spacingAndGlyphs" stroke="#222" stroke-width="0.15">OFFICE 212</text>
<text x="1100" y="323" font-size="6.0" fill="#222" text-anchor="middle" font-weight="bold" textLength="29.0" lengthAdjust="spacingAndGlyphs" stroke="#222" stroke-width="0.15">OFFICE 213</text>
<path d="M1178.7,256 V336.0525 Q1178.7,344.1 1187,344.175 L1251,348.975 Q1258.3,349.0 1258.3,342.02250000000004 V256" stroke="#1a1a1a" stroke-width="1.8" fill="none"/>
<line x1="1218.3" y1="256" x2="1218.3" y2="346.5" stroke="#1a1a1a" stroke-width="1.4"/>
<line x1="1178.7" y1="298.5" x2="1258.3" y2="298.5" stroke="#222" stroke-width="3.2"/>
<line x1="1178.7" y1="298.5" x2="1258.3" y2="298.5" stroke="#bbb" stroke-width="0.8" stroke-dasharray="1 1" shape-rendering="crispEdges"/>
<path d="M1178.7,285.5 A13,13 0 0 1 1178.7,311.5" stroke="#1a1a1a" stroke-width="0.8" fill="none"/>
<circle cx="1179.7" cy="290.5" r="3.8" stroke="#1a1a1a" stroke-width="0.6" fill="#fff"/>
<circle cx="1179.7" cy="306.5" r="3.8" stroke="#1a1a1a" stroke-width="0.6" fill="#fff"/>
<path d="M1258.3,285.5 A13,13 0 0 0 1258.3,311.5" stroke="#1a1a1a" stroke-width="0.8" fill="none"/>
<circle cx="1257.3" cy="290.5" r="3.8" stroke="#1a1a1a" stroke-width="0.6" fill="#fff"/>
<circle cx="1257.3" cy="306.5" r="3.8" stroke="#1a1a1a" stroke-width="0.6" fill="#fff"/>
<text x="1198" y="280" font-size="6.0" fill="#222" text-anchor="middle" font-weight="bold" textLength="31.75" lengthAdjust="spacingAndGlyphs" stroke="#222" stroke-width="0.15">MEETING 214</text>
<text x="1238" y="280" font-size="6.0" fill="#222" text-anchor="middle" font-weight="bold" textLength="31.75" lengthAdjust="spacingAndGlyphs" stroke="#222" stroke-width="0.15">MEETING 216</text>
<text x="1198" y="328" font-size="6.0" fill="#222" text-anchor="middle" font-weight="bold" textLength="31.75" lengthAdjust="spacingAndGlyphs" stroke="#222" stroke-width="0.15">MEETING 215</text>
<text x="1238" y="328" font-size="6.0" fill="#222" text-anchor="middle" font-weight="bold" textLength="31.75" lengthAdjust="spacingAndGlyphs" stroke="#222" stroke-width="0.15">MEETING 217</text>
<rect x="1242" y="341" width="18" height="12" fill="#fff27a"/>
<path d="M1242,341 a3.0,3.0 0 0 1 6.0,0 a3.0,3.0 0 0 1 6.0,0 a3.0,3.0 0 0 1 6.0,0 a3.0,3.0 0 0 1 0,6.0 a3.0,3.0 0 0 1 0,6.0 a3.0,3.0 0 0 1 -6.0,0 a3.0,3.0 0 0 1 -6.0,0 a3.0,3.0 0 0 1 -6.0,0 a3.0,3.0 0 0 1 0,-6.0 a3.0,3.0 0 0 1 0,-6.0Z" stroke="#f0a030" stroke-width="1.0" fill="none"/>
<text x="1324" y="315" font-size="6.0" fill="#222" text-anchor="middle" font-weight="bold" textLength="42.75" lengthAdjust="spacingAndGlyphs" stroke="#222" stroke-width="0.15">OPEN OFFICE 218</text>
<text x="397" y="305" font-size="6.0" fill="#222" text-anchor="middle" font-weight="bold" textLength="42.75" lengthAdjust="spacingAndGlyphs" stroke="#222" stroke-width="0.15">OPEN OFFICE 200</text>
<text x="1194" y="437" font-size="6.0" fill="#222" text-anchor="middle" font-weight="bold" textLength="42.75" lengthAdjust="spacingAndGlyphs" stroke="#222" stroke-width="0.15">OPEN OFFICE 263</text>
<text x="522" y="440" font-size="6.0" fill="#222" text-anchor="middle" font-weight="bold" textLength="42.75" lengthAdjust="spacingAndGlyphs" stroke="#222" stroke-width="0.15">OPEN OFFICE 248</text>
<text x="396" y="576" font-size="6.0" fill="#222" text-anchor="middle" font-weight="bold" textLength="42.75" lengthAdjust="spacingAndGlyphs" stroke="#222" stroke-width="0.15">OPEN OFFICE 244</text>
<text x="1330" y="571" font-size="6.0" fill="#222" text-anchor="middle" font-weight="bold" textLength="42.75" lengthAdjust="spacingAndGlyphs" stroke="#222" stroke-width="0.15">OPEN OFFICE 222</text>
<path d="M1393,268 L1308,375 L1308,521.7 L1009,521.7" stroke="#e03030" stroke-width="1.0" fill="none" stroke-dasharray="1.5 1.5"/>
<path d="M1330,358.40000000000003 Q1330,352.40000000000003 1336,352.85 M1330,356.40000000000003 V402.7 M1330,402.7 H1405 M1330,402.7 V480 H1405" stroke="#1a1a1a" stroke-width="1.8" fill="none"/>
<text x="1372" y="386" font-size="6.0" fill="#222" text-anchor="middle" font-weight="bold" textLength="31.75" lengthAdjust="spacingAndGlyphs" stroke="#222" stroke-width="0.15">MEETING 264</text>
<text x="1366" y="442" font-size="6.0" fill="#222" text-anchor="middle" font-weight="bold" textLength="40.0" lengthAdjust="spacingAndGlyphs" stroke="#222" stroke-width="0.15">CONFERENCE 265</text>
<rect x="1351.7" y="411.7" width="31.6" height="58.3" rx="0" stroke="#1a1a1a" stroke-width="0.8" fill="none" stroke-dasharray="2 1"/>
<path d="M1330,389.7 A13,13 0 0 1 1330,415.7" stroke="#1a1a1a" stroke-width="0.8" fill="none"/>
<circle cx="1331" cy="394.7" r="3.8" stroke="#1a1a1a" stroke-width="0.6" fill="#fff"/>
<circle cx="1331" cy="410.7" r="3.8" stroke="#1a1a1a" stroke-width="0.6" fill="#fff"/>
<path d="M1330,467 A13,13 0 0 1 1330,493" stroke="#1a1a1a" stroke-width="0.8" fill="none"/>
<circle cx="1331" cy="472.0" r="3.8" stroke="#1a1a1a" stroke-width="0.6" fill="#fff"/>
<circle cx="1331" cy="488.0" r="3.8" stroke="#1a1a1a" stroke-width="0.6" fill="#fff"/>
<path d="M408.6,367.5 L416.6,375.5 L408.6,383.5 L400.6,375.5 Z" stroke="#e03a3a" stroke-width="0.9" fill="#cfcfcf"/>
<text x="408.6" y="377.5" font-size="5" fill="#e03a3a" text-anchor="middle" font-weight="normal">W-1</text>
<path d="M1320.7,368.7 L1328.7,376.7 L1320.7,384.7 L1312.7,376.7 Z" stroke="#e03a3a" stroke-width="0.9" fill="#cfcfcf"/>
<text x="1320.7" y="378.7" font-size="5" fill="#e03a3a" text-anchor="middle" font-weight="normal">W-1</text>
<path d="M408.6,498.3 L416.6,506.3 L408.6,514.3 L400.6,506.3 Z" stroke="#e03a3a" stroke-width="0.9" fill="#cfcfcf"/>
<text x="408.6" y="508.3" font-size="5" fill="#e03a3a" text-anchor="middle" font-weight="normal">W-1</text>
<line x1="326.5" y1="402.7" x2="401.2" y2="402.7" stroke="#222" stroke-width="3.2"/>
<line x1="326.5" y1="402.7" x2="401.2" y2="402.7" stroke="#bbb" stroke-width="0.8" stroke-dasharray="1 1" shape-rendering="crispEdges"/>
<line x1="326.5" y1="480.7" x2="401.2" y2="480.7" stroke="#222" stroke-width="3.2"/>
<line x1="326.5" y1="480.7" x2="401.2" y2="480.7" stroke="#bbb" stroke-width="0.8" stroke-dasharray="1 1" shape-rendering="crispEdges"/>
<path d="M326.5,362.0625 L392,357.15000000000003 Q400,356.55 400,364.55 V517 Q400,524 393,524 L326.5,521.5375" stroke="#1a1a1a" stroke-width="1.8" fill="none"/>
<rect x="349.4" y="410.8" width="31" height="60" rx="0" stroke="#1a1a1a" stroke-width="0.8" fill="none" stroke-dasharray="2 1"/>
<text x="365.5" y="443.5" font-size="6.0" fill="#222" text-anchor="middle" font-weight="bold" textLength="40.0" lengthAdjust="spacingAndGlyphs" stroke="#222" stroke-width="0.15">CONFERENCE 246</text>
<text x="363.5" y="382" font-size="6.0" fill="#222" text-anchor="middle" font-weight="bold" textLength="31.75" lengthAdjust="spacingAndGlyphs" stroke="#222" stroke-width="0.15">MEETING 247</text>
<text x="363.5" y="506.5" font-size="6.0" fill="#222" text-anchor="middle" font-weight="bold" textLength="31.75" lengthAdjust="spacingAndGlyphs" stroke="#222" stroke-width="0.15">MEETING 245</text>
<path d="M400,389.7 A13,13 0 0 0 400,415.7" stroke="#1a1a1a" stroke-width="0.8" fill="none"/>
<circle cx="399" cy="394.7" r="3.8" stroke="#1a1a1a" stroke-width="0.6" fill="#fff"/>
<circle cx="399" cy="410.7" r="3.8" stroke="#1a1a1a" stroke-width="0.6" fill="#fff"/>
<path d="M400,467.7 A13,13 0 0 0 400,493.7" stroke="#1a1a1a" stroke-width="0.8" fill="none"/>
<circle cx="399" cy="472.7" r="3.8" stroke="#1a1a1a" stroke-width="0.6" fill="#fff"/>
<circle cx="399" cy="488.7" r="3.8" stroke="#1a1a1a" stroke-width="0.6" fill="#fff"/>
<rect x="424.7" y="377" width="270" height="129.3" rx="8" stroke="#1a1a1a" stroke-width="0.8" fill="none" stroke-dasharray="1.5 1"/>
<rect x="435" y="388.6" width="248" height="106.9" rx="4" stroke="#1a1a1a" stroke-width="1.2" fill="none"/>
<path d="M683.3,372 L645,372 Q638.3,372 638.3,379 L638.3,487 Q638.3,494 645,494 L683.3,494" stroke="#1a1a1a" stroke-width="1.8" fill="none"/>
<line x1="638.3" y1="432" x2="683.3" y2="432" stroke="#222" stroke-width="3.2"/>
<line x1="638.3" y1="432" x2="683.3" y2="432" stroke="#bbb" stroke-width="0.8" stroke-dasharray="1 1" shape-rendering="crispEdges"/>
<path d="M638.3,419 A13,13 0 0 1 638.3,445" stroke="#1a1a1a" stroke-width="0.8" fill="none"/>
<circle cx="639.3" cy="424.0" r="3.8" stroke="#1a1a1a" stroke-width="0.6" fill="#fff"/>
<circle cx="639.3" cy="440.0" r="3.8" stroke="#1a1a1a" stroke-width="0.6" fill="#fff"/>
<text x="662" y="405" font-size="6.0" fill="#222" text-anchor="middle" font-weight="bold" textLength="29.0" lengthAdjust="spacingAndGlyphs" stroke="#222" stroke-width="0.15">OFFICE 249</text>
<text x="662" y="464" font-size="6.0" fill="#222" text-anchor="middle" font-weight="bold" textLength="23.5" lengthAdjust="spacingAndGlyphs" stroke="#222" stroke-width="0.15">COPY 250</text>
<path d="M693,366 L840,376 Q847,377 847,384 L847,491 Q847,498 840,499 L693,520 Q684,521 684,512 L684,374 Q684,366 693,366 Z" stroke="#1a1a1a" stroke-width="1.8" fill="none"/>
<path d="M692,376 H843 M692,376 V508 L843,491 M692,451 H843 M725,376 V451 M725,451 V508 M760,451 V503 M783,372 V460 M815,376 V497" stroke="#1a1a1a" stroke-width="1.3" fill="none"/>
<rect x="743" y="497" width="14" height="7" rx="0" stroke="#1a1a1a" stroke-width="0.9" fill="none"/>
<rect x="763" y="497" width="14" height="7" rx="0" stroke="#1a1a1a" stroke-width="0.9" fill="none"/>
<rect x="783" y="497" width="14" height="7" rx="0" stroke="#1a1a1a" stroke-width="0.9" fill="none"/>
<rect x="815" y="390" width="27.5" height="33.8" rx="0" stroke="#1a1a1a" stroke-width="1.2" fill="none"/>
<line x1="815" y1="390" x2="842.5" y2="423.8" stroke="#1a1a1a" stroke-width="0.7"/>
<line x1="842.5" y1="390" x2="815" y2="423.8" stroke="#1a1a1a" stroke-width="0.7"/>
<rect x="815" y="424.5" width="27.5" height="33.8" rx="0" stroke="#1a1a1a" stroke-width="1.2" fill="none"/>
<line x1="815" y1="424.5" x2="842.5" y2="458.3" stroke="#1a1a1a" stroke-width="0.7"/>
<line x1="842.5" y1="424.5" x2="815" y2="458.3" stroke="#1a1a1a" stroke-width="0.7"/>
<rect x="815" y="472.5" width="25" height="18.5" rx="0" stroke="#1a1a1a" stroke-width="1.2" fill="none"/>
<line x1="815" y1="472.5" x2="840" y2="491.0" stroke="#1a1a1a" stroke-width="0.7"/>
<line x1="840" y1="472.5" x2="815" y2="491.0" stroke="#1a1a1a" stroke-width="0.7"/>
<rect x="695" y="411" width="30" height="29" rx="0" stroke="#1a1a1a" stroke-width="0.6" fill="none"/>
<line x1="695" y1="411.0" x2="725" y2="411.0" stroke="#1a1a1a" stroke-width="0.8" shape-rendering="crispEdges"/>
<line x1="695" y1="414.6" x2="725" y2="414.6" stroke="#1a1a1a" stroke-width="0.8" shape-rendering="crispEdges"/>
<line x1="695" y1="418.2" x2="725" y2="418.2" stroke="#1a1a1a" stroke-width="0.8" shape-rendering="crispEdges"/>
<line x1="695" y1="421.8" x2="725" y2="421.8" stroke="#1a1a1a" stroke-width="0.8" shape-rendering="crispEdges"/>
<line x1="695" y1="425.4" x2="725" y2="425.4" stroke="#1a1a1a" stroke-width="0.8" shape-rendering="crispEdges"/>
<line x1="695" y1="429.0" x2="725" y2="429.0" stroke="#1a1a1a" stroke-width="0.8" shape-rendering="crispEdges"/>
<line x1="695" y1="432.6" x2="725" y2="432.6" stroke="#1a1a1a" stroke-width="0.8" shape-rendering="crispEdges"/>
<line x1="695" y1="436.2" x2="725" y2="436.2" stroke="#1a1a1a" stroke-width="0.8" shape-rendering="crispEdges"/>
<circle cx="758.7" cy="457.5" r="2.6" stroke="#1a1a1a" stroke-width="0" fill="#1a1a1a"/>
<circle cx="770.7" cy="457.5" r="2.6" stroke="#1a1a1a" stroke-width="0" fill="#1a1a1a"/>
<circle cx="783" cy="457.5" r="2.6" stroke="#1a1a1a" stroke-width="0" fill="#1a1a1a"/>
<circle cx="800" cy="470" r="9" stroke="#1a1a1a" stroke-width="0" fill="#ef5b5b"/>
<text x="711" y="400" font-size="6.0" fill="#222" text-anchor="middle" font-weight="bold" textLength="26.25" lengthAdjust="spacingAndGlyphs" stroke="#222" stroke-width="0.15">STAIR 251</text>
<text x="748" y="397" font-size="6.0" fill="#222" text-anchor="middle" font-weight="bold" textLength="29.0" lengthAdjust="spacingAndGlyphs" stroke="#222" stroke-width="0.15">ELECTRICAL</text>
<text x="748" y="404" font-size="6.0" fill="#222" text-anchor="middle" font-weight="bold" textLength="9.75" lengthAdjust="spacingAndGlyphs" stroke="#222" stroke-width="0.15">253</text>
<text x="760" y="429" font-size="6.0" fill="#222" text-anchor="middle" font-weight="bold" textLength="34.5" lengthAdjust="spacingAndGlyphs" stroke="#222" stroke-width="0.15">STORAGE 253A</text>
<text x="745" y="444" font-size="6.0" fill="#222" text-anchor="middle" font-weight="bold" textLength="34.5" lengthAdjust="spacingAndGlyphs" stroke="#222" stroke-width="0.15">STORAGE 254A</text>
<text x="760" y="487" font-size="6.0" fill="#222" text-anchor="middle" font-weight="bold" textLength="40.0" lengthAdjust="spacingAndGlyphs" stroke="#222" stroke-width="0.15">WOMEN'S RR 254</text>
<rect x="725" y="407" width="9" height="12" rx="0" stroke="#1a1a1a" stroke-width="0.6" fill="none" stroke-dasharray="1.5 1"/>
<rect x="740" y="407" width="9" height="12" rx="0" stroke="#1a1a1a" stroke-width="0.6" fill="none" stroke-dasharray="1.5 1"/>
<rect x="755" y="407" width="9" height="12" rx="0" stroke="#1a1a1a" stroke-width="0.6" fill="none" stroke-dasharray="1.5 1"/>
<rect x="770" y="407" width="9" height="12" rx="0" stroke="#1a1a1a" stroke-width="0.6" fill="none" stroke-dasharray="1.5 1"/>
<path d="M707.5,367.5 a2.5,2.5 0 0 1 5.0,0 a2.5,2.5 0 0 1 5.0,0 a2.5,2.5 0 0 1 5.0,0 a2.5,2.5 0 0 1 5.0,0 a2.5,2.5 0 0 1 5.0,0 a2.6,2.6 0 0 1 0,5.2 a2.6,2.6 0 0 1 0,5.2 a2.6,2.6 0 0 1 0,5.2 a2.6,2.6 0 0 1 0,5.2 a2.6,2.6 0 0 1 0,5.2 a2.5,2.5 0 0 1 -5.0,0 a2.5,2.5 0 0 1 -5.0,0 a2.5,2.5 0 0 1 -5.0,0 a2.5,2.5 0 0 1 -5.0,0 a2.5,2.5 0 0 1 -5.0,0 a2.6,2.6 0 0 1 0,-5.2 a2.6,2.6 0 0 1 0,-5.2 a2.6,2.6 0 0 1 0,-5.2 a2.6,2.6 0 0 1 0,-5.2 a2.6,2.6 0 0 1 0,-5.2Z" stroke="#ef3030" stroke-width="1.0" fill="none"/>
<path d="M1039,366 L892,376 Q885,377 885,384 L885,491 Q885,498 892,499 L1039,520 Q1048,521 1048,512 L1048,374 Q1048,366 1039,366 Z" stroke="#1a1a1a" stroke-width="1.8" fill="none"/>
<path d="M1040,376 H889 M1040,376 V508 L889,491 M1040,465 H889 M915,376 V495 M1006,435 V506" stroke="#1a1a1a" stroke-width="1.3" fill="none"/>
<rect x="955" y="497" width="14" height="7" rx="0" stroke="#1a1a1a" stroke-width="0.9" fill="none"/>
<rect x="975" y="497" width="14" height="7" rx="0" stroke="#1a1a1a" stroke-width="0.9" fill="none"/>
<rect x="890" y="390" width="25" height="33.8" rx="0" stroke="#1a1a1a" stroke-width="1.2" fill="none"/>
<line x1="890" y1="390" x2="915" y2="423.8" stroke="#1a1a1a" stroke-width="0.7"/>
<line x1="915" y1="390" x2="890" y2="423.8" stroke="#1a1a1a" stroke-width="0.7"/>
<rect x="890" y="424.5" width="25" height="33.8" rx="0" stroke="#1a1a1a" stroke-width="1.2" fill="none"/>
<line x1="890" y1="424.5" x2="915" y2="458.3" stroke="#1a1a1a" stroke-width="0.7"/>
<line x1="915" y1="424.5" x2="890" y2="458.3" stroke="#1a1a1a" stroke-width="0.7"/>
<rect x="892" y="475" width="23" height="16" rx="0" stroke="#1a1a1a" stroke-width="1.2" fill="none"/>
<line x1="892" y1="491" x2="915" y2="475" stroke="#1a1a1a" stroke-width="0.7"/>
<rect x="927.5" y="393.7" width="18.5" height="43.8" rx="0" stroke="#1a1a1a" stroke-width="0.9" fill="none"/>
<line x1="927.5" y1="404.59999999999997" x2="946.0" y2="404.59999999999997" stroke="#1a1a1a" stroke-width="0.8" shape-rendering="crispEdges"/>
<line x1="927.5" y1="415.5" x2="946.0" y2="415.5" stroke="#1a1a1a" stroke-width="0.8" shape-rendering="crispEdges"/>
<line x1="927.5" y1="426.4" x2="946.0" y2="426.4" stroke="#1a1a1a" stroke-width="0.8" shape-rendering="crispEdges"/>
<line x1="936.75" y1="393.7" x2="936.75" y2="437.5" stroke="#1a1a1a" stroke-width="0.8" shape-rendering="crispEdges"/>
<rect x="951" y="393.7" width="18.5" height="43.8" rx="0" stroke="#1a1a1a" stroke-width="0.9" fill="none"/>
<line x1="951" y1="404.59999999999997" x2="969.5" y2="404.59999999999997" stroke="#1a1a1a" stroke-width="0.8" shape-rendering="crispEdges"/>
<line x1="951" y1="415.5" x2="969.5" y2="415.5" stroke="#1a1a1a" stroke-width="0.8" shape-rendering="crispEdges"/>
<line x1="951" y1="426.4" x2="969.5" y2="426.4" stroke="#1a1a1a" stroke-width="0.8" shape-rendering="crispEdges"/>
<line x1="960.25" y1="393.7" x2="960.25" y2="437.5" stroke="#1a1a1a" stroke-width="0.8" shape-rendering="crispEdges"/>
<rect x="974.5" y="393.7" width="18.5" height="43.8" rx="0" stroke="#1a1a1a" stroke-width="0.9" fill="none"/>
<line x1="974.5" y1="404.59999999999997" x2="993.0" y2="404.59999999999997" stroke="#1a1a1a" stroke-width="0.8" shape-rendering="crispEdges"/>
<line x1="974.5" y1="415.5" x2="993.0" y2="415.5" stroke="#1a1a1a" stroke-width="0.8" shape-rendering="crispEdges"/>
<line x1="974.5" y1="426.4" x2="993.0" y2="426.4" stroke="#1a1a1a" stroke-width="0.8" shape-rendering="crispEdges"/>
<line x1="983.75" y1="393.7" x2="983.75" y2="437.5" stroke="#1a1a1a" stroke-width="0.8" shape-rendering="crispEdges"/>
<rect x="1006" y="435" width="29" height="37" rx="0" stroke="#1a1a1a" stroke-width="0.6" fill="none"/>
<line x1="1006" y1="435.0" x2="1035" y2="435.0" stroke="#1a1a1a" stroke-width="0.8" shape-rendering="crispEdges"/>
<line x1="1006" y1="438.7" x2="1035" y2="438.7" stroke="#1a1a1a" stroke-width="0.8" shape-rendering="crispEdges"/>
<line x1="1006" y1="442.4" x2="1035" y2="442.4" stroke="#1a1a1a" stroke-width="0.8" shape-rendering="crispEdges"/>
<line x1="1006" y1="446.1" x2="1035" y2="446.1" stroke="#1a1a1a" stroke-width="0.8" shape-rendering="crispEdges"/>
<line x1="1006" y1="449.8" x2="1035" y2="449.8" stroke="#1a1a1a" stroke-width="0.8" shape-rendering="crispEdges"/>
<line x1="1006" y1="453.5" x2="1035" y2="453.5" stroke="#1a1a1a" stroke-width="0.8" shape-rendering="crispEdges"/>
<line x1="1006" y1="457.2" x2="1035" y2="457.2" stroke="#1a1a1a" stroke-width="0.8" shape-rendering="crispEdges"/>
<line x1="1006" y1="460.9" x2="1035" y2="460.9" stroke="#1a1a1a" stroke-width="0.8" shape-rendering="crispEdges"/>
<line x1="1006" y1="464.6" x2="1035" y2="464.6" stroke="#1a1a1a" stroke-width="0.8" shape-rendering="crispEdges"/>
<line x1="1006" y1="468.3" x2="1035" y2="468.3" stroke="#1a1a1a" stroke-width="0.8" shape-rendering="crispEdges"/>
<circle cx="926" cy="458" r="2.6" stroke="#1a1a1a" stroke-width="0" fill="#1a1a1a"/>
<circle cx="947" cy="458" r="2.6" stroke="#1a1a1a" stroke-width="0" fill="#1a1a1a"/>
<text x="962" y="385" font-size="6.0" fill="#222" text-anchor="middle" font-weight="bold" textLength="29.0" lengthAdjust="spacingAndGlyphs" stroke="#222" stroke-width="0.15">SERVER 257</text>
<text x="966" y="447" font-size="6.0" fill="#222" text-anchor="middle" font-weight="bold" textLength="34.5" lengthAdjust="spacingAndGlyphs" stroke="#222" stroke-width="0.15">STORAGE 258A</text>
<text x="968" y="488" font-size="6.0" fill="#222" text-anchor="middle" font-weight="bold" textLength="34.5" lengthAdjust="spacingAndGlyphs" stroke="#222" stroke-width="0.15">MEN'S RR 259</text>
<text x="1021" y="488" font-size="6.0" fill="#222" text-anchor="middle" font-weight="bold" textLength="26.25" lengthAdjust="spacingAndGlyphs" stroke="#222" stroke-width="0.15">STAIR 259</text>
<text x="866" y="433" font-size="6.0" fill="#222" text-anchor="middle" font-weight="bold" textLength="26.25" lengthAdjust="spacingAndGlyphs" stroke="#222" stroke-width="0.15">LOBBY 256</text>
<text x="712" y="480" font-size="6.0" fill="#222" text-anchor="middle" font-weight="bold" textLength="42.75" lengthAdjust="spacingAndGlyphs" stroke="#222" stroke-width="0.15" transform="rotate(-90 712 480)">MOTHER'S RR 252</text>
<path d="M847,449.5 H885" stroke="#e8902a" stroke-width="0.9" fill="none" stroke-dasharray="2 1"/>
<path d="M847,449.5 l4,-2.5 v5 Z M885,449.5 l-4,-2.5 v5 Z" stroke="#e8902a" stroke-width="0.5" fill="#e8902a"/>
<path d="M1048,372 L1085,372 Q1091.7,372 1091.7,379 L1091.7,487 Q1091.7,494 1085,494 L1048,494" stroke="#1a1a1a" stroke-width="1.8" fill="none"/>
<line x1="1048" y1="432" x2="1091.7" y2="432" stroke="#222" stroke-width="3.2"/>
<line x1="1048" y1="432" x2="1091.7" y2="432" stroke="#bbb" stroke-width="0.8" stroke-dasharray="1 1" shape-rendering="crispEdges"/>
<path d="M1091.7,419 A13,13 0 0 0 1091.7,445" stroke="#1a1a1a" stroke-width="0.8" fill="none"/>
<circle cx="1090.7" cy="424.0" r="3.8" stroke="#1a1a1a" stroke-width="0.6" fill="#fff"/>
<circle cx="1090.7" cy="440.0" r="3.8" stroke="#1a1a1a" stroke-width="0.6" fill="#fff"/>
<text x="1067" y="413" font-size="6.0" fill="#222" text-anchor="middle" font-weight="bold" textLength="29.0" lengthAdjust="spacingAndGlyphs" stroke="#222" stroke-width="0.15">OFFICE 261</text>
<text x="1067" y="467" font-size="6.0" fill="#222" text-anchor="middle" font-weight="bold" textLength="23.5" lengthAdjust="spacingAndGlyphs" stroke="#222" stroke-width="0.15">COPY 262</text>
<text x="1022" y="413" font-size="6.0" fill="#222" text-anchor="middle" font-weight="bold" textLength="31.75" lengthAdjust="spacingAndGlyphs" stroke="#222" stroke-width="0.15" transform="rotate(-90 1022 413)">STORAGE 263</text>
<path d="M696,523 L813,512 M919,512 L1036,523" stroke="#1a1a1a" stroke-width="0.9" fill="none" stroke-dasharray="3 2"/>
<circle cx="833.3" cy="524.7" r="8" stroke="#1a1a1a" stroke-width="0.8" fill="#fff"/>
<line x1="826" y1="524.7" x2="840.6" y2="524.7" stroke="#1a1a1a" stroke-width="0.6" shape-rendering="crispEdges"/>
<path d="M819,507 L826,520" stroke="#1a1a1a" stroke-width="0.7" fill="none"/>
<path d="M472.8,618 V542.51 Q472.8,534.51 479.8,534.51 L544.7,540.4275 Q551.7,540.4275 551.7,548.4275 V618" stroke="#1a1a1a" stroke-width="1.8" fill="none"/>
<line x1="472.8" y1="578.1" x2="551.7" y2="578.1" stroke="#222" stroke-width="3.2"/>
<line x1="472.8" y1="578.1" x2="551.7" y2="578.1" stroke="#bbb" stroke-width="0.8" stroke-dasharray="1 1" shape-rendering="crispEdges"/>
<path d="M551.7,565.1 A13,13 0 0 0 551.7,591.1" stroke="#1a1a1a" stroke-width="0.8" fill="none"/>
<circle cx="550.7" cy="570.1" r="3.8" stroke="#1a1a1a" stroke-width="0.6" fill="#fff"/>
<circle cx="550.7" cy="586.1" r="3.8" stroke="#1a1a1a" stroke-width="0.6" fill="#fff"/>
<text x="512.5" y="559" font-size="6.0" fill="#222" text-anchor="middle" font-weight="bold" textLength="29.0" lengthAdjust="spacingAndGlyphs" stroke="#222" stroke-width="0.15">OFFICE 242</text>
<text x="512.5" y="601" font-size="6.0" fill="#222" text-anchor="middle" font-weight="bold" textLength="29.0" lengthAdjust="spacingAndGlyphs" stroke="#222" stroke-width="0.15">OFFICE 243</text>
<path d="M590.3,618 V551.3225 Q590.3,543.3225 597.3,543.3225 L663,549.3 Q670,549.3 670,557.3 V618" stroke="#1a1a1a" stroke-width="1.8" fill="none"/>
<line x1="629.7" y1="546.2775" x2="629.7" y2="618" stroke="#1a1a1a" stroke-width="1.4"/>
<line x1="590.3" y1="586.3" x2="670" y2="586.3" stroke="#222" stroke-width="3.2"/>
<line x1="590.3" y1="586.3" x2="670" y2="586.3" stroke="#bbb" stroke-width="0.8" stroke-dasharray="1 1" shape-rendering="crispEdges"/>
<path d="M590.3,573.3 A13,13 0 0 1 590.3,599.3" stroke="#1a1a1a" stroke-width="0.8" fill="none"/>
<circle cx="591.3" cy="578.3" r="3.8" stroke="#1a1a1a" stroke-width="0.6" fill="#fff"/>
<circle cx="591.3" cy="594.3" r="3.8" stroke="#1a1a1a" stroke-width="0.6" fill="#fff"/>
<path d="M670,573.3 A13,13 0 0 0 670,599.3" stroke="#1a1a1a" stroke-width="0.8" fill="none"/>
<circle cx="669" cy="578.3" r="3.8" stroke="#1a1a1a" stroke-width="0.6" fill="#fff"/>
<circle cx="669" cy="594.3" r="3.8" stroke="#1a1a1a" stroke-width="0.6" fill="#fff"/>
<text x="610" y="567" font-size="6.0" fill="#222" text-anchor="middle" font-weight="bold" textLength="29.0" lengthAdjust="spacingAndGlyphs" stroke="#222" stroke-width="0.15">OFFICE 240</text>
<text x="650" y="567" font-size="6.0" fill="#222" text-anchor="middle" font-weight="bold" textLength="29.0" lengthAdjust="spacingAndGlyphs" stroke="#222" stroke-width="0.15">OFFICE 238</text>
<text x="610" y="609" font-size="6.0" fill="#222" text-anchor="middle" font-weight="bold" textLength="29.0" lengthAdjust="spacingAndGlyphs" stroke="#222" stroke-width="0.15">OFFICE 241</text>
<text x="650" y="609" font-size="6.0" fill="#222" text-anchor="middle" font-weight="bold" textLength="29.0" lengthAdjust="spacingAndGlyphs" stroke="#222" stroke-width="0.15">OFFICE 239</text>
<path d="M708,618 V560.15 Q708,552.15 715,552.15 L780.2,558.09 Q787.2,558.09 787.2,566.09 V618" stroke="#1a1a1a" stroke-width="1.8" fill="none"/>
<line x1="747.5" y1="555.1125" x2="747.5" y2="618" stroke="#1a1a1a" stroke-width="1.4"/>
<line x1="708" y1="586.3" x2="787.2" y2="586.3" stroke="#222" stroke-width="3.2"/>
<line x1="708" y1="586.3" x2="787.2" y2="586.3" stroke="#bbb" stroke-width="0.8" stroke-dasharray="1 1" shape-rendering="crispEdges"/>
<path d="M708,573.3 A13,13 0 0 1 708,599.3" stroke="#1a1a1a" stroke-width="0.8" fill="none"/>
<circle cx="709" cy="578.3" r="3.8" stroke="#1a1a1a" stroke-width="0.6" fill="#fff"/>
<circle cx="709" cy="594.3" r="3.8" stroke="#1a1a1a" stroke-width="0.6" fill="#fff"/>
<path d="M787.2,573.3 A13,13 0 0 0 787.2,599.3" stroke="#1a1a1a" stroke-width="0.8" fill="none"/>
<circle cx="786.2" cy="578.3" r="3.8" stroke="#1a1a1a" stroke-width="0.6" fill="#fff"/>
<circle cx="786.2" cy="594.3" r="3.8" stroke="#1a1a1a" stroke-width="0.6" fill="#fff"/>
<path d="M738.3,575.8 a3.1500000000000004,3.1500000000000004 0 0 1 6.300000000000001,0 a3.1500000000000004,3.1500000000000004 0 0 1 6.300000000000001,0 a3.1500000000000004,3.1500000000000004 0 0 1 6.300000000000001,0 a3.1500000000000004,3.1500000000000004 0 0 1 6.300000000000001,0 a3.1500000000000004,3.1500000000000004 0 0 1 6.300000000000001,0 a3.1500000000000004,3.1500000000000004 0 0 1 6.300000000000001,0 a3.1500000000000004,3.1500000000000004 0 0 1 6.300000000000001,0 a3.1500000000000004,3.1500000000000004 0 0 1 6.300000000000001,0 a3.1500000000000004,3.1500000000000004 0 0 1 6.300000000000001,0 a3.2857142857142856,3.2857142857142856 0 0 1 0,6.571428571428571 a3.2857142857142856,3.2857142857142856 0 0 1 0,6.571428571428571 a3.2857142857142856,3.2857142857142856 0 0 1 0,6.571428571428571 a3.2857142857142856,3.2857142857142856 0 0 1 0,6.571428571428571 a3.2857142857142856,3.2857142857142856 0 0 1 0,6.571428571428571 a3.2857142857142856,3.2857142857142856 0 0 1 0,6.571428571428571 a3.2857142857142856,3.2857142857142856 0 0 1 0,6.571428571428571 a3.1500000000000004,3.1500000000000004 0 0 1 -6.300000000000001,0 a3.1500000000000004,3.1500000000000004 0 0 1 -6.300000000000001,0 a3.1500000000000004,3.1500000000000004 0 0 1 -6.300000000000001,0 a3.1500000000000004,3.1500000000000004 0 0 1 -6.300000000000001,0 a3.1500000000000004,3.1500000000000004 0 0 1 -6.300000000000001,0 a3.1500000000000004,3.1500000000000004 0 0 1 -6.300000000000001,0 a3.1500000000000004,3.1500000000000004 0 0 1 -6.300000000000001,0 a3.1500000000000004,3.1500000000000004 0 0 1 -6.300000000000001,0 a3.1500000000000004,3.1500000000000004 0 0 1 -6.300000000000001,0 a3.2857142857142856,3.2857142857142856 0 0 1 0,-6.571428571428571 a3.2857142857142856,3.2857142857142856 0 0 1 0,-6.571428571428571 a3.2857142857142856,3.2857142857142856 0 0 1 0,-6.571428571428571 a3.2857142857142856,3.2857142857142856 0 0 1 0,-6.571428571428571 a3.2857142857142856,3.2857142857142856 0 0 1 0,-6.571428571428571 a3.2857142857142856,3.2857142857142856 0 0 1 0,-6.571428571428571 a3.2857142857142856,3.2857142857142856 0 0 1 0,-6.571428571428571Z" stroke="#2a40ff" stroke-width="1.1" fill="none"/>
<text x="727" y="569" font-size="6.0" fill="#222" text-anchor="middle" font-weight="bold" textLength="29.0" lengthAdjust="spacingAndGlyphs" stroke="#222" stroke-width="0.15">OFFICE 236</text>
<text x="766" y="569" font-size="6.0" fill="#222" text-anchor="middle" font-weight="bold" textLength="31.75" lengthAdjust="spacingAndGlyphs" stroke="#222" stroke-width="0.15">MEETING 234</text>
<text x="727" y="604" font-size="6.0" fill="#222" text-anchor="middle" font-weight="bold" textLength="29.0" lengthAdjust="spacingAndGlyphs" stroke="#222" stroke-width="0.15">OFFICE 237</text>
<text x="766" y="604" font-size="6.0" fill="#222" text-anchor="middle" font-weight="bold" textLength="31.75" lengthAdjust="spacingAndGlyphs" stroke="#222" stroke-width="0.15">MEETING 235</text>
<path d="M785,620 V552 Q785,548.3 789,548.3 H943 Q947,548.3 947,552 V620" stroke="#1a1a1a" stroke-width="0.9" fill="none" stroke-dasharray="3 2"/>
<path d="M806.7,557 L866,562.5 L925,557" stroke="#1a1a1a" stroke-width="2.2" fill="none"/>
<rect x="806.7" y="565" width="118.3" height="10" rx="0" stroke="#1a1a1a" stroke-width="1.3" fill="none"/>
<rect x="810" y="566.5" width="14" height="7" rx="0" stroke="#1a1a1a" stroke-width="0.9" fill="none"/>
<rect x="908" y="566.5" width="14" height="7" rx="0" stroke="#1a1a1a" stroke-width="0.9" fill="none"/>
<rect x="830" y="568" width="72" height="4" rx="0" stroke="#1a1a1a" stroke-width="0.8" fill="none" stroke-dasharray="2 1"/>
<rect x="860" y="566" width="9" height="5" rx="0" stroke="#1a1a1a" stroke-width="0.9" fill="none"/>
<rect x="829.3" y="579.8" width="72.4" height="24.5" rx="0" stroke="#1a1a1a" stroke-width="0.9" fill="none" stroke-dasharray="2 1"/>
<rect x="832" y="584" width="67" height="16" rx="0" stroke="#1a1a1a" stroke-width="0.8" fill="none"/>
<text x="866" y="594.5" font-size="6.0" fill="#222" text-anchor="middle" font-weight="bold" textLength="40.0" lengthAdjust="spacingAndGlyphs" stroke="#222" stroke-width="0.15">BREAK ROOM 233</text>
<rect x="800" y="612.5" width="129.6" height="10" rx="0" stroke="#1a1a1a" stroke-width="1.3" fill="none"/>
<path d="M943.3,618 V566.2025 Q943.3,558.2025 950.3,558.2025 L1016.3,552.2025 Q1023.3,552.2025 1023.3,560.2025 V618" stroke="#1a1a1a" stroke-width="1.8" fill="none"/>
<line x1="983" y1="555.225" x2="983" y2="618" stroke="#1a1a1a" stroke-width="1.4"/>
<line x1="943.3" y1="586.3" x2="1023.3" y2="586.3" stroke="#222" stroke-width="3.2"/>
<line x1="943.3" y1="586.3" x2="1023.3" y2="586.3" stroke="#bbb" stroke-width="0.8" stroke-dasharray="1 1" shape-rendering="crispEdges"/>
<path d="M943.3,573.3 A13,13 0 0 1 943.3,599.3" stroke="#1a1a1a" stroke-width="0.8" fill="none"/>
<circle cx="944.3" cy="578.3" r="3.8" stroke="#1a1a1a" stroke-width="0.6" fill="#fff"/>
<circle cx="944.3" cy="594.3" r="3.8" stroke="#1a1a1a" stroke-width="0.6" fill="#fff"/>
<path d="M1023.3,573.3 A13,13 0 0 0 1023.3,599.3" stroke="#1a1a1a" stroke-width="0.8" fill="none"/>
<circle cx="1022.3" cy="578.3" r="3.8" stroke="#1a1a1a" stroke-width="0.6" fill="#fff"/>
<circle cx="1022.3" cy="594.3" r="3.8" stroke="#1a1a1a" stroke-width="0.6" fill="#fff"/>
<text x="963" y="569" font-size="6.0" fill="#222" text-anchor="middle" font-weight="bold" textLength="31.75" lengthAdjust="spacingAndGlyphs" stroke="#222" stroke-width="0.15">MEETING 231</text>
<text x="1003" y="569" font-size="6.0" fill="#222" text-anchor="middle" font-weight="bold" textLength="29.0" lengthAdjust="spacingAndGlyphs" stroke="#222" stroke-width="0.15">OFFICE 229</text>
<text x="963" y="609" font-size="6.0" fill="#222" text-anchor="middle" font-weight="bold" textLength="31.75" lengthAdjust="spacingAndGlyphs" stroke="#222" stroke-width="0.15">MEETING 232</text>
<text x="1003" y="609" font-size="6.0" fill="#222" text-anchor="middle" font-weight="bold" textLength="29.0" lengthAdjust="spacingAndGlyphs" stroke="#222" stroke-width="0.15">OFFICE 230</text>
<path d="M1061.7,618 V557.3225 Q1061.7,549.3225 1068.7,549.3225 L1133,543.45 Q1140,543.45 1140,551.45 V618" stroke="#1a1a1a" stroke-width="1.8" fill="none"/>
<line x1="1100.8" y1="546.39" x2="1100.8" y2="618" stroke="#1a1a1a" stroke-width="1.4"/>
<line x1="1061.7" y1="586.3" x2="1140" y2="586.3" stroke="#222" stroke-width="3.2"/>
<line x1="1061.7" y1="586.3" x2="1140" y2="586.3" stroke="#bbb" stroke-width="0.8" stroke-dasharray="1 1" shape-rendering="crispEdges"/>
<path d="M1061.7,573.3 A13,13 0 0 1 1061.7,599.3" stroke="#1a1a1a" stroke-width="0.8" fill="none"/>
<circle cx="1062.7" cy="578.3" r="3.8" stroke="#1a1a1a" stroke-width="0.6" fill="#fff"/>
<circle cx="1062.7" cy="594.3" r="3.8" stroke="#1a1a1a" stroke-width="0.6" fill="#fff"/>
<path d="M1140,573.3 A13,13 0 0 0 1140,599.3" stroke="#1a1a1a" stroke-width="0.8" fill="none"/>
<circle cx="1139" cy="578.3" r="3.8" stroke="#1a1a1a" stroke-width="0.6" fill="#fff"/>
<circle cx="1139" cy="594.3" r="3.8" stroke="#1a1a1a" stroke-width="0.6" fill="#fff"/>
<text x="1081" y="564" font-size="6.0" fill="#222" text-anchor="middle" font-weight="bold" textLength="29.0" lengthAdjust="spacingAndGlyphs" stroke="#222" stroke-width="0.15">OFFICE 227</text>
<text x="1120" y="564" font-size="6.0" fill="#222" text-anchor="middle" font-weight="bold" textLength="29.0" lengthAdjust="spacingAndGlyphs" stroke="#222" stroke-width="0.15">OFFICE 225</text>
<text x="1081" y="607" font-size="6.0" fill="#222" text-anchor="middle" font-weight="bold" textLength="29.0" lengthAdjust="spacingAndGlyphs" stroke="#222" stroke-width="0.15">OFFICE 228</text>
<text x="1120" y="607" font-size="6.0" fill="#222" text-anchor="middle" font-weight="bold" textLength="29.0" lengthAdjust="spacingAndGlyphs" stroke="#222" stroke-width="0.15">OFFICE 226</text>
<path d="M1178.3,618 V548.6 M1178.3,578.3 H1258.3 M1258.3,532.6 V618" stroke="#1a1a1a" stroke-width="1.8" fill="none"/>
<path d="M1178.3,565.3 A13,13 0 0 1 1178.3,591.3" stroke="#1a1a1a" stroke-width="0.8" fill="none"/>
<circle cx="1179.3" cy="570.3" r="3.8" stroke="#1a1a1a" stroke-width="0.6" fill="#fff"/>
<circle cx="1179.3" cy="586.3" r="3.8" stroke="#1a1a1a" stroke-width="0.6" fill="#fff"/>
<text x="1226" y="601" font-size="6.0" fill="#222" text-anchor="middle" font-weight="bold" textLength="29.0" lengthAdjust="spacingAndGlyphs" stroke="#222" stroke-width="0.15">OFFICE 224</text>
<rect x="394.4" y="220.4" width="47.2" height="7.6" rx="0" stroke="none" stroke-width="0" fill="#fff27a"/>
<text x="395.9" y="225.7" font-size="6.6" fill="#222" text-anchor="start" font-weight="normal" textLength="44.5" lengthAdjust="spacingAndGlyphs">Provide wall type</text>
<path d="M441.6,223.5 L446,223.5 L470,270" stroke="#e8902a" stroke-width="0.9" fill="none"/>
<rect x="1075" y="213.3" width="60" height="8.4" rx="0" stroke="none" stroke-width="0" fill="#fff27a"/>
<text x="1076.5" y="219.4" font-size="6.6" fill="#222" text-anchor="start" font-weight="normal" textLength="56" lengthAdjust="spacingAndGlyphs">Head and sill details?</text>
<path d="M1105,221.7 Q1103,250 1124,280" stroke="#e8902a" stroke-width="0.9" fill="none"/>
<rect x="1294.3" y="195.7" width="78.4" height="17" rx="0" stroke="none" stroke-width="0" fill="#c9f7fb"/>
<text x="1295.8" y="202.39999999999998" font-size="6.0" fill="#222" text-anchor="start" font-weight="normal" textLength="70" lengthAdjust="spacingAndGlyphs">What are power requirements</text>
<text x="1295.8" y="210.39999999999998" font-size="6.0" fill="#222" text-anchor="start" font-weight="normal" textLength="53" lengthAdjust="spacingAndGlyphs">for Open Office areas?</text>
<line x1="1333" y1="212.7" x2="1333" y2="297" stroke="#2a40ff" stroke-width="1.0" shape-rendering="crispEdges"/>
<rect x="922.5" y="338.3" width="55.5" height="15" rx="0" stroke="none" stroke-width="0" fill="#c9f7fb"/>
<text x="924.0" y="344.0" font-size="6.2" fill="#222" text-anchor="start" font-weight="normal" textLength="52" lengthAdjust="spacingAndGlyphs">Provide enlarged plan</text>
<text x="924.0" y="351.0" font-size="6.2" fill="#222" text-anchor="start" font-weight="normal" textLength="37" lengthAdjust="spacingAndGlyphs">for equip. layout</text>
<line x1="950.3" y1="353.3" x2="950.3" y2="368" stroke="#2a40ff" stroke-width="1.0" shape-rendering="crispEdges"/>
<rect x="819.2" y="355.8" width="55.5" height="15" rx="0" stroke="none" stroke-width="0" fill="#c9f7fb"/>
<text x="820.7" y="361.5" font-size="6.2" fill="#222" text-anchor="start" font-weight="normal" textLength="50" lengthAdjust="spacingAndGlyphs">Verify all ducting will</text>
<text x="820.7" y="368.5" font-size="6.2" fill="#222" text-anchor="start" font-weight="normal" textLength="36" lengthAdjust="spacingAndGlyphs">fit in this chase</text>
<path d="M819,363 H811 V372" stroke="#2a40ff" stroke-width="1.0" fill="none"/>
<rect x="1175.8" y="355" width="48" height="14.2" rx="0" stroke="none" stroke-width="0" fill="#fff27a"/>
<text x="1177.3" y="360.3" font-size="6.4" fill="#222" text-anchor="start" font-weight="normal" textLength="44" lengthAdjust="spacingAndGlyphs">Provide detail for</text>
<text x="1177.3" y="366.9" font-size="6.4" fill="#222" text-anchor="start" font-weight="normal" textLength="42" lengthAdjust="spacingAndGlyphs">corner condition</text>
<path d="M1223,363 Q1238,362 1250,351" stroke="#e8902a" stroke-width="0.9" fill="none"/>
<rect x="404.2" y="447.9" width="56.2" height="16" rx="0" stroke="none" stroke-width="0" fill="#c9f7fb"/>
<text x="405.7" y="454.09999999999997" font-size="6.2" fill="#222" text-anchor="start" font-weight="normal" textLength="40" lengthAdjust="spacingAndGlyphs">Is power required</text>
<text x="405.7" y="461.59999999999997" font-size="6.2" fill="#222" text-anchor="start" font-weight="normal" textLength="11" lengthAdjust="spacingAndGlyphs">here?</text>
<line x1="392.6" y1="455" x2="404.2" y2="455" stroke="#2a40ff" stroke-width="1.0" shape-rendering="crispEdges"/>
<rect x="486.3" y="404.2" width="37.1" height="7.4" rx="0" stroke="none" stroke-width="0" fill="#fff27a"/>
<text x="487.8" y="409.29999999999995" font-size="6.6" fill="#222" text-anchor="start" font-weight="normal" textLength="34" lengthAdjust="spacingAndGlyphs">Provide RCP</text>
<path d="M486,408 L481,408 L435,380" stroke="#e8902a" stroke-width="0.9" fill="none"/>
<rect x="351.1" y="537.2" width="55.8" height="18.5" rx="0" stroke="none" stroke-width="0" fill="#fff27a"/>
<text x="379.0" y="544.6500000000001" font-size="6.8" fill="#222" text-anchor="middle" font-weight="normal" textLength="47" lengthAdjust="spacingAndGlyphs">Provide details on</text>
<text x="379.0" y="553.4000000000001" font-size="6.8" fill="#222" text-anchor="middle" font-weight="normal" textLength="47" lengthAdjust="spacingAndGlyphs">flooring transition</text>
<path d="M407,546 L412,546 L426,530" stroke="#e8902a" stroke-width="0.9" fill="none"/>
<text x="707" y="343.7" font-size="7" fill="#ea3b3b" text-anchor="start" font-weight="normal" textLength="54.7" lengthAdjust="spacingAndGlyphs">Stair doors to be fire</text>
<text x="707" y="351.3" font-size="7" fill="#ea3b3b" text-anchor="start" font-weight="normal" textLength="58.8" lengthAdjust="spacingAndGlyphs">rated assemblies, typ.</text>
<line x1="737" y1="353" x2="737" y2="368" stroke="#ea3b3b" stroke-width="0.8" stroke-dasharray="1.5 1" shape-rendering="crispEdges"/>
<text x="532" y="360" font-size="7" fill="#ea3b3b" text-anchor="start" font-weight="normal" textLength="20.6" lengthAdjust="spacingAndGlyphs">Provide</text>
<text x="532" y="366.7" font-size="7" fill="#ea3b3b" text-anchor="start" font-weight="normal" textLength="36" lengthAdjust="spacingAndGlyphs">mullion detail</text>
<path d="M505,336.3 a3.1666666666666665,3.1666666666666665 0 0 1 6.333333333333333,0 a3.1666666666666665,3.1666666666666665 0 0 1 6.333333333333333,0 a3.1666666666666665,3.1666666666666665 0 0 1 6.333333333333333,0 a2.625,2.625 0 0 1 0,5.25 a2.625,2.625 0 0 1 0,5.25 a2.625,2.625 0 0 1 0,5.25 a2.625,2.625 0 0 1 0,5.25 a3.1666666666666665,3.1666666666666665 0 0 1 -6.333333333333333,0 a3.1666666666666665,3.1666666666666665 0 0 1 -6.333333333333333,0 a3.1666666666666665,3.1666666666666665 0 0 1 -6.333333333333333,0 a2.625,2.625 0 0 1 0,-5.25 a2.625,2.625 0 0 1 0,-5.25 a2.625,2.625 0 0 1 0,-5.25 a2.625,2.625 0 0 1 0,-5.25Z" stroke="#ea3b3b" stroke-width="1.0" fill="none"/>
<path d="M518,357 L524,366 L531,366" stroke="#ea3b3b" stroke-width="0.8" fill="none"/>
<text x="845" y="514" font-size="6.8" fill="#ea3b3b" text-anchor="start" font-weight="normal" textLength="38.3" lengthAdjust="spacingAndGlyphs">Verify 60in clr.</text>
<text x="845" y="520.7" font-size="6.8" fill="#ea3b3b" text-anchor="start" font-weight="normal" textLength="40" lengthAdjust="spacingAndGlyphs">radius for ADA</text>
<path d="M806,474 L838,512 L845,512" stroke="#ea3b3b" stroke-width="0.9" fill="none"/>
<text x="1293.3" y="587.3" font-size="6.2" fill="#ea3b3b" text-anchor="start" font-weight="normal" textLength="73.3" lengthAdjust="spacingAndGlyphs">See furniture plan for Open</text>
<text x="1293.3" y="594" font-size="6.2" fill="#ea3b3b" text-anchor="start" font-weight="normal" textLength="47.3" lengthAdjust="spacingAndGlyphs">Office area layout</text>
<path d="M553,561.3 H590" stroke="#e8902a" stroke-width="0.9" fill="none" stroke-dasharray="2 1"/>
<rect x="329" y="604" width="18" height="14" fill="#fff27a"/>
<path d="M329,604 a3.0,3.0 0 0 1 6.0,0 a3.0,3.0 0 0 1 6.0,0 a3.0,3.0 0 0 1 6.0,0 a3.5,3.5 0 0 1 0,7.0 a3.5,3.5 0 0 1 0,7.0 a3.0,3.0 0 0 1 -6.0,0 a3.0,3.0 0 0 1 -6.0,0 a3.0,3.0 0 0 1 -6.0,0 a3.5,3.5 0 0 1 0,-7.0 a3.5,3.5 0 0 1 0,-7.0Z" stroke="#f0a030" stroke-width="1.0" fill="none"/>
<rect x="443" y="604" width="18" height="14" fill="#fff27a"/>
<path d="M443,604 a3.0,3.0 0 0 1 6.0,0 a3.0,3.0 0 0 1 6.0,0 a3.0,3.0 0 0 1 6.0,0 a3.5,3.5 0 0 1 0,7.0 a3.5,3.5 0 0 1 0,7.0 a3.0,3.0 0 0 1 -6.0,0 a3.0,3.0 0 0 1 -6.0,0 a3.0,3.0 0 0 1 -6.0,0 a3.5,3.5 0 0 1 0,-7.0 a3.5,3.5 0 0 1 0,-7.0Z" stroke="#f0a030" stroke-width="1.0" fill="none"/>
<path d="M1505,604 a0.25,0.25 0 0 1 0.5,0 a0.25,0.25 0 0 1 0.5,0 a0.25,0.25 0 0 1 0,0.5 a0.25,0.25 0 0 1 0,0.5 a0.25,0.25 0 0 1 -0.5,0 a0.25,0.25 0 0 1 -0.5,0 a0.25,0.25 0 0 1 0,-0.5 a0.25,0.25 0 0 1 0,-0.5Z" stroke="none" stroke-width="0" fill="none"/>
<path d="M337,404.2 a3.088888888888889,3.088888888888889 0 0 1 6.177777777777778,0 a3.088888888888889,3.088888888888889 0 0 1 6.177777777777778,0 a3.088888888888889,3.088888888888889 0 0 1 6.177777777777778,0 a3.088888888888889,3.088888888888889 0 0 1 6.177777777777778,0 a3.088888888888889,3.088888888888889 0 0 1 6.177777777777778,0 a3.088888888888889,3.088888888888889 0 0 1 6.177777777777778,0 a3.088888888888889,3.088888888888889 0 0 1 6.177777777777778,0 a3.088888888888889,3.088888888888889 0 0 1 6.177777777777778,0 a3.088888888888889,3.088888888888889 0 0 1 6.177777777777778,0 a3.0208333333333335,3.0208333333333335 0 0 1 0,6.041666666666667 a3.0208333333333335,3.0208333333333335 0 0 1 0,6.041666666666667 a3.0208333333333335,3.0208333333333335 0 0 1 0,6.041666666666667 a3.0208333333333335,3.0208333333333335 0 0 1 0,6.041666666666667 a3.0208333333333335,3.0208333333333335 0 0 1 0,6.041666666666667 a3.0208333333333335,3.0208333333333335 0 0 1 0,6.041666666666667 a3.0208333333333335,3.0208333333333335 0 0 1 0,6.041666666666667 a3.0208333333333335,3.0208333333333335 0 0 1 0,6.041666666666667 a3.0208333333333335,3.0208333333333335 0 0 1 0,6.041666666666667 a3.0208333333333335,3.0208333333333335 0 0 1 0,6.041666666666667 a3.0208333333333335,3.0208333333333335 0 0 1 0,6.041666666666667 a3.0208333333333335,3.0208333333333335 0 0 1 0,6.041666666666667 a3.088888888888889,3.088888888888889 0 0 1 -6.177777777777778,0 a3.088888888888889,3.088888888888889 0 0 1 -6.177777777777778,0 a3.088888888888889,3.088888888888889 0 0 1 -6.177777777777778,0 a3.088888888888889,3.088888888888889 0 0 1 -6.177777777777778,0 a3.088888888888889,3.088888888888889 0 0 1 -6.177777777777778,0 a3.088888888888889,3.088888888888889 0 0 1 -6.177777777777778,0 a3.088888888888889,3.088888888888889 0 0 1 -6.177777777777778,0 a3.088888888888889,3.088888888888889 0 0 1 -6.177777777777778,0 a3.088888888888889,3.088888888888889 0 0 1 -6.177777777777778,0 a3.0208333333333335,3.0208333333333335 0 0 1 0,-6.041666666666667 a3.0208333333333335,3.0208333333333335 0 0 1 0,-6.041666666666667 a3.0208333333333335,3.0208333333333335 0 0 1 0,-6.041666666666667 a3.0208333333333335,3.0208333333333335 0 0 1 0,-6.041666666666667 a3.0208333333333335,3.0208333333333335 0 0 1 0,-6.041666666666667 a3.0208333333333335,3.0208333333333335 0 0 1 0,-6.041666666666667 a3.0208333333333335,3.0208333333333335 0 0 1 0,-6.041666666666667 a3.0208333333333335,3.0208333333333335 0 0 1 0,-6.041666666666667 a3.0208333333333335,3.0208333333333335 0 0 1 0,-6.041666666666667 a3.0208333333333335,3.0208333333333335 0 0 1 0,-6.041666666666667 a3.0208333333333335,3.0208333333333335 0 0 1 0,-6.041666666666667 a3.0208333333333335,3.0208333333333335 0 0 1 0,-6.041666666666667Z" stroke="#2a40ff" stroke-width="1.1" fill="none"/>
<path d="M783.7,372.5 a3.38,3.38 0 0 1 6.76,0 a3.38,3.38 0 0 1 6.76,0 a3.38,3.38 0 0 1 6.76,0 a3.38,3.38 0 0 1 6.76,0 a3.38,3.38 0 0 1 6.76,0 a3.125,3.125 0 0 1 0,6.25 a3.125,3.125 0 0 1 0,6.25 a3.125,3.125 0 0 1 0,6.25 a3.125,3.125 0 0 1 0,6.25 a3.125,3.125 0 0 1 0,6.25 a3.125,3.125 0 0 1 0,6.25 a3.125,3.125 0 0 1 0,6.25 a3.125,3.125 0 0 1 0,6.25 a3.125,3.125 0 0 1 0,6.25 a3.125,3.125 0 0 1 0,6.25 a3.125,3.125 0 0 1 0,6.25 a3.125,3.125 0 0 1 0,6.25 a3.125,3.125 0 0 1 0,6.25 a3.125,3.125 0 0 1 0,6.25 a3.38,3.38 0 0 1 -6.76,0 a3.38,3.38 0 0 1 -6.76,0 a3.38,3.38 0 0 1 -6.76,0 a3.38,3.38 0 0 1 -6.76,0 a3.38,3.38 0 0 1 -6.76,0 a3.125,3.125 0 0 1 0,-6.25 a3.125,3.125 0 0 1 0,-6.25 a3.125,3.125 0 0 1 0,-6.25 a3.125,3.125 0 0 1 0,-6.25 a3.125,3.125 0 0 1 0,-6.25 a3.125,3.125 0 0 1 0,-6.25 a3.125,3.125 0 0 1 0,-6.25 a3.125,3.125 0 0 1 0,-6.25 a3.125,3.125 0 0 1 0,-6.25 a3.125,3.125 0 0 1 0,-6.25 a3.125,3.125 0 0 1 0,-6.25 a3.125,3.125 0 0 1 0,-6.25 a3.125,3.125 0 0 1 0,-6.25 a3.125,3.125 0 0 1 0,-6.25Z" stroke="#2a40ff" stroke-width="1.1" fill="none"/>
<path d="M911.5,368.3 a3.1470588235294117,3.1470588235294117 0 0 1 6.294117647058823,0 a3.1470588235294117,3.1470588235294117 0 0 1 6.294117647058823,0 a3.1470588235294117,3.1470588235294117 0 0 1 6.294117647058823,0 a3.1470588235294117,3.1470588235294117 0 0 1 6.294117647058823,0 a3.1470588235294117,3.1470588235294117 0 0 1 6.294117647058823,0 a3.1470588235294117,3.1470588235294117 0 0 1 6.294117647058823,0 a3.1470588235294117,3.1470588235294117 0 0 1 6.294117647058823,0 a3.1470588235294117,3.1470588235294117 0 0 1 6.294117647058823,0 a3.1470588235294117,3.1470588235294117 0 0 1 6.294117647058823,0 a3.1470588235294117,3.1470588235294117 0 0 1 6.294117647058823,0 a3.1470588235294117,3.1470588235294117 0 0 1 6.294117647058823,0 a3.1470588235294117,3.1470588235294117 0 0 1 6.294117647058823,0 a3.1470588235294117,3.1470588235294117 0 0 1 6.294117647058823,0 a3.1470588235294117,3.1470588235294117 0 0 1 6.294117647058823,0 a3.1470588235294117,3.1470588235294117 0 0 1 6.294117647058823,0 a3.1470588235294117,3.1470588235294117 0 0 1 6.294117647058823,0 a3.1470588235294117,3.1470588235294117 0 0 1 6.294117647058823,0 a3.03125,3.03125 0 0 1 0,6.0625 a3.03125,3.03125 0 0 1 0,6.0625 a3.03125,3.03125 0 0 1 0,6.0625 a3.03125,3.03125 0 0 1 0,6.0625 a3.03125,3.03125 0 0 1 0,6.0625 a3.03125,3.03125 0 0 1 0,6.0625 a3.03125,3.03125 0 0 1 0,6.0625 a3.03125,3.03125 0 0 1 0,6.0625 a3.03125,3.03125 0 0 1 0,6.0625 a3.03125,3.03125 0 0 1 0,6.0625 a3.03125,3.03125 0 0 1 0,6.0625 a3.03125,3.03125 0 0 1 0,6.0625 a3.03125,3.03125 0 0 1 0,6.0625 a3.03125,3.03125 0 0 1 0,6.0625 a3.03125,3.03125 0 0 1 0,6.0625 a3.03125,3.03125 0 0 1 0,6.0625 a3.1470588235294117,3.1470588235294117 0 0 1 -6.294117647058823,0 a3.1470588235294117,3.1470588235294117 0 0 1 -6.294117647058823,0 a3.1470588235294117,3.1470588235294117 0 0 1 -6.294117647058823,0 a3.1470588235294117,3.1470588235294117 0 0 1 -6.294117647058823,0 a3.1470588235294117,3.1470588235294117 0 0 1 -6.294117647058823,0 a3.1470588235294117,3.1470588235294117 0 0 1 -6.294117647058823,0 a3.1470588235294117,3.1470588235294117 0 0 1 -6.294117647058823,0 a3.1470588235294117,3.1470588235294117 0 0 1 -6.294117647058823,0 a3.1470588235294117,3.1470588235294117 0 0 1 -6.294117647058823,0 a3.1470588235294117,3.1470588235294117 0 0 1 -6.294117647058823,0 a3.1470588235294117,3.1470588235294117 0 0 1 -6.294117647058823,0 a3.1470588235294117,3.1470588235294117 0 0 1 -6.294117647058823,0 a3.1470588235294117,3.1470588235294117 0 0 1 -6.294117647058823,0 a3.1470588235294117,3.1470588235294117 0 0 1 -6.294117647058823,0 a3.1470588235294117,3.1470588235294117 0 0 1 -6.294117647058823,0 a3.1470588235294117,3.1470588235294117 0 0 1 -6.294117647058823,0 a3.1470588235294117,3.1470588235294117 0 0 1 -6.294117647058823,0 a3.03125,3.03125 0 0 1 0,-6.0625 a3.03125,3.03125 0 0 1 0,-6.0625 a3.03125,3.03125 0 0 1 0,-6.0625 a3.03125,3.03125 0 0 1 0,-6.0625 a3.03125,3.03125 0 0 1 0,-6.0625 a3.03125,3.03125 0 0 1 0,-6.0625 a3.03125,3.03125 0 0 1 0,-6.0625 a3.03125,3.03125 0 0 1 0,-6.0625 a3.03125,3.03125 0 0 1 0,-6.0625 a3.03125,3.03125 0 0 1 0,-6.0625 a3.03125,3.03125 0 0 1 0,-6.0625 a3.03125,3.03125 0 0 1 0,-6.0625 a3.03125,3.03125 0 0 1 0,-6.0625 a3.03125,3.03125 0 0 1 0,-6.0625 a3.03125,3.03125 0 0 1 0,-6.0625 a3.03125,3.03125 0 0 1 0,-6.0625Z" stroke="#2a40ff" stroke-width="1.1" fill="none"/>
<path d="M1290,296.7 a3.1045454545454545,3.1045454545454545 0 0 1 6.209090909090909,0 a3.1045454545454545,3.1045454545454545 0 0 1 6.209090909090909,0 a3.1045454545454545,3.1045454545454545 0 0 1 6.209090909090909,0 a3.1045454545454545,3.1045454545454545 0 0 1 6.209090909090909,0 a3.1045454545454545,3.1045454545454545 0 0 1 6.209090909090909,0 a3.1045454545454545,3.1045454545454545 0 0 1 6.209090909090909,0 a3.1045454545454545,3.1045454545454545 0 0 1 6.209090909090909,0 a3.1045454545454545,3.1045454545454545 0 0 1 6.209090909090909,0 a3.1045454545454545,3.1045454545454545 0 0 1 6.209090909090909,0 a3.1045454545454545,3.1045454545454545 0 0 1 6.209090909090909,0 a3.1045454545454545,3.1045454545454545 0 0 1 6.209090909090909,0 a3.16,3.16 0 0 1 0,6.32 a3.16,3.16 0 0 1 0,6.32 a3.16,3.16 0 0 1 0,6.32 a3.16,3.16 0 0 1 0,6.32 a3.16,3.16 0 0 1 0,6.32 a3.1045454545454545,3.1045454545454545 0 0 1 -6.209090909090909,0 a3.1045454545454545,3.1045454545454545 0 0 1 -6.209090909090909,0 a3.1045454545454545,3.1045454545454545 0 0 1 -6.209090909090909,0 a3.1045454545454545,3.1045454545454545 0 0 1 -6.209090909090909,0 a3.1045454545454545,3.1045454545454545 0 0 1 -6.209090909090909,0 a3.1045454545454545,3.1045454545454545 0 0 1 -6.209090909090909,0 a3.1045454545454545,3.1045454545454545 0 0 1 -6.209090909090909,0 a3.1045454545454545,3.1045454545454545 0 0 1 -6.209090909090909,0 a3.1045454545454545,3.1045454545454545 0 0 1 -6.209090909090909,0 a3.1045454545454545,3.1045454545454545 0 0 1 -6.209090909090909,0 a3.1045454545454545,3.1045454545454545 0 0 1 -6.209090909090909,0 a3.16,3.16 0 0 1 0,-6.32 a3.16,3.16 0 0 1 0,-6.32 a3.16,3.16 0 0 1 0,-6.32 a3.16,3.16 0 0 1 0,-6.32 a3.16,3.16 0 0 1 0,-6.32Z" stroke="#2a40ff" stroke-width="1.3" fill="none"/></svg></div>
<div class="a" style="left:1474px;top:170px;width:14px;height:454px;background:#f0f0f0"></div>
<div class="a" style="left:1475px;top:274px;width:12px;height:195px;background:#cdcdcd"></div>
<div class="a" style="left:305px;top:618.5px;width:1169px;height:5.5px;background:rgba(150,150,150,.35)"></div>
<!-- right panel -->
<div class="a" style="left:1493px;top:132px;width:1px;height:524px;background:#0c0c0d"></div>
<div class="a" style="left:1498px;top:132px;width:265px;height:524px;background:#202123"></div>
<div class="a" style="left:1763px;top:132px;width:2px;height:524px;background:#0c0c0d"></div>
<div class="a" style="left:1765px;top:132px;width:32px;height:524px;background:#202123"></div>
<div class="a" style="left:1571px;top:138px;width:33px;height:32px;background:#124b7a"></div>
<div class="a" style="left:1764px;top:334px;width:28px;height:33px;background:#124b7a"></div>
<div class="a" style="left:1505px;top:176px;width:183px;height:31px;border:1px solid #4a4b4e;border-radius:3px"></div>
<div class="a" style="left:1692px;top:178px;width:61px;height:27px;background:#3a3b3e;border:1px solid #46474a;border-radius:3px"></div>
<div class="a" style="left:1505px;top:216px;width:248px;height:24px;border:1px solid #4a4b4e;border-radius:3px"></div>
<div class="a" style="left:1507px;top:247px;width:207px;height:24px;border:1px solid #3a3b3e;border-radius:3px"></div>
<div class="a" style="left:1720px;top:247px;width:31px;height:24px;background:#36373a;border-radius:3px"></div>
<!-- nav bar -->
<div class="a" style="left:304px;top:624px;width:1186px;height:32px;background:#202123"></div>
<div class="a" style="left:412px;top:624px;width:33px;height:32px;background:#124b7a"></div>
<div class="a" style="left:495.5px;top:624px;width:33px;height:32px;background:#124b7a"></div>
<div class="a" style="left:698px;top:630px;width:288px;height:23px;border:1px solid #3e3f42;border-radius:3px"></div>
<!-- markup list -->
<div class="a" style="left:0;top:656px;width:1797px;height:312px;background:#202123"></div>
<div class="a" style="left:33px;top:659px;width:1px;height:306px;background:#0c0c0d"></div>
<div class="a" style="left:4px;top:691px;width:29px;height:33px;background:#124b7a"></div>
<div class="a" style="left:253px;top:664px;width:304px;height:27px;border:1px solid #414245;border-radius:3px"></div>
<div class="a" style="left:34px;top:695px;width:1438px;height:32.5px;background:#3c3d40"></div>
<div class="a" style="left:34px;top:725.5px;width:185px;height:2.5px;background:#1a8ae0"></div>
<div class="a" style="left:34px;top:915px;width:1438px;height:1.5px;background:#4a4b4e"></div>
<div class="a" style="left:1472.5px;top:695px;width:20px;height:270px;background:#f0f0f0"></div>
<div class="a" style="left:1473.5px;top:715px;width:18px;height:50px;background:#cdcdcd"></div>
<div class="a" style="left:1493px;top:659px;width:1px;height:306px;background:#0c0c0d"></div>
<div class="a" style="left:1763px;top:659px;width:1px;height:306px;background:#0c0c0d"></div>
<div class="a" style="left:0;top:968px;width:1800px;height:5px;background:#000"></div>
<div class="a" style="left:56px;top:968px;width:403px;height:5px;background:#c6c6c6"></div>
<span class="t" style="left:21.1px;top:8.6px;font-size:15px;color:#fff;letter-spacing:-0.18px">Revu</span>
<span class="t" style="left:89.1px;top:8.6px;font-size:15px;color:#fff;letter-spacing:0.44px">File</span>
<span class="t" style="left:148.1px;top:8.6px;font-size:15px;color:#fff;letter-spacing:1.05px">Edit</span>
<span class="t" style="left:210.1px;top:8.6px;font-size:15px;color:#fff;letter-spacing:1.08px">View</span>
<span class="t" style="left:277.1px;top:8.6px;font-size:15px;color:#fff;letter-spacing:0.66px">Document</span>
<span class="t" style="left:380.1px;top:8.6px;font-size:15px;color:#fff;letter-spacing:0.91px">Batch</span>
<span class="t" style="left:453.1px;top:8.6px;font-size:15px;color:#fff;letter-spacing:1.24px">Tools</span>
<span class="t" style="left:525.1px;top:8.6px;font-size:15px;color:#fff;letter-spacing:0.83px">Window</span>
<span class="t" style="left:613.1px;top:8.6px;font-size:15px;color:#fff;letter-spacing:0.71px">Help</span>
<span class="t" style="left:70.2px;top:108.8px;font-size:14px;color:#f4f4f4;font-weight:700;letter-spacing:-0.10px">Name:</span>
<span class="t" style="left:116.2px;top:108.8px;font-size:14px;color:#f4f4f4;letter-spacing:-0.09px">.Sample Floor_Plan</span>
<span class="t" style="left:248.2px;top:108.8px;font-size:14px;color:#f4f4f4;font-weight:700;letter-spacing:-0.30px">Pages:</span>
<span class="t" style="left:296.2px;top:108.8px;font-size:14px;color:#f4f4f4">1</span>
<span class="t" style="left:312.1px;top:146.3px;font-size:15px;color:#eeeeee;letter-spacing:-0.54px">.Sample Floor_Plan</span>
<span class="t" style="left:44.3px;top:147.9px;font-size:16.5px;color:#f4f4f4;font-weight:700;letter-spacing:0.24px">File Access</span>
<span class="t" style="left:60.0px;top:182.4px;font-size:15.5px;color:#f4f4f4;letter-spacing:0.08px">Pinned</span>
<span class="t" style="left:77.7px;top:211.3px;font-size:14.8px;color:#f4f4f4;letter-spacing:-0.83px">Bluebeam DEMO FILES</span>
<span class="t" style="left:80.0px;top:235.4px;font-size:14.8px;color:#f4f4f4;font-weight:700;letter-spacing:-0.95px">.Sample Floor_Plan.pdf</span>
<span class="t" style="left:59.5px;top:264.5px;font-size:15.5px;color:#f4f4f4;letter-spacing:0.35px">Categories</span>
<span class="t" style="left:77.9px;top:293.6px;font-size:14.8px;color:#f4f4f4;letter-spacing:-0.38px">Auto Label - Batch Link</span>
<span class="t" style="left:79.6px;top:317.8px;font-size:14.8px;color:#f4f4f4;letter-spacing:-0.22px">Architecture Set.pdf</span>
<span class="t" style="left:77.9px;top:342.2px;font-size:14.8px;color:#f4f4f4;letter-spacing:-0.36px">Compare Docs</span>
<span class="t" style="left:79.6px;top:366.5px;font-size:14.8px;color:#f4f4f4;letter-spacing:-0.54px">A 2.01.2_Rev A.pdf</span>
<span class="t" style="left:79.6px;top:390.8px;font-size:14.8px;color:#f4f4f4;letter-spacing:-0.59px">A 2.01.2_Rev B.pdf</span>
<span class="t" style="left:79.6px;top:415.0px;font-size:14.8px;color:#f4f4f4;letter-spacing:-0.64px">A 2.01.2_Rev C.pdf</span>
<span class="t" style="left:77.9px;top:439.4px;font-size:14.8px;color:#f4f4f4;letter-spacing:-0.25px">Video Presentations</span>
<span class="t" style="left:59.1px;top:468.8px;font-size:15.5px;color:#f4f4f4;letter-spacing:0.20px">Recents</span>
<span class="t" style="left:81.7px;top:497.5px;font-size:14.8px;color:#f4f4f4;font-weight:700;letter-spacing:-0.94px">.Sample Floor_Plan.pdf</span>
<span class="t" style="left:1503.4px;top:146.3px;font-size:17px;color:#f4f4f4;font-weight:700;letter-spacing:0.04px">Search</span>
<span class="t" style="left:1534.5px;top:184.3px;font-size:15px;color:#d8d8d8;letter-spacing:-0.69px">Search</span>
<span class="t" style="left:1701.1px;top:183.1px;font-size:15px;color:#f4f4f4;letter-spacing:-0.67px">Search</span>
<span class="t" style="left:1508.6px;top:220.1px;font-size:14px;color:#f4f4f4">Current Document</span>
<span class="t" style="left:1510.1px;top:251.0px;font-size:14.2px;color:#5f6064;letter-spacing:0.18px">C:\Users\kevte\Documents</span>
<span class="t" style="left:1523.7px;top:296.9px;font-size:15.5px;color:#f4f4f4;letter-spacing:0.52px">Options</span>
<span class="t" style="left:1522.9px;top:326.7px;font-size:14.2px;color:#5a5b5f;letter-spacing:-0.20px">Include Sub-Folders</span>
<span class="t" style="left:1522.9px;top:353.0px;font-size:14.2px;color:#f4f4f4;letter-spacing:-0.29px">Search Pages</span>
<span class="t" style="left:1522.9px;top:379.4px;font-size:14.2px;color:#5a5b5f;letter-spacing:-0.13px">Search Filenames</span>
<span class="t" style="left:1522.9px;top:405.7px;font-size:14.2px;color:#f4f4f4;letter-spacing:-0.09px">Search File Properties</span>
<span class="t" style="left:1522.9px;top:431.7px;font-size:14.2px;color:#f4f4f4;letter-spacing:-0.08px">Search Form Fields</span>
<span class="t" style="left:1522.9px;top:458.0px;font-size:14.2px;color:#f4f4f4;letter-spacing:-0.07px">Search Markups</span>
<span class="t" style="left:1522.9px;top:484.0px;font-size:14.2px;color:#f4f4f4">Case Sensitive</span>
<span class="t" style="left:1522.9px;top:510.3px;font-size:14.2px;color:#f4f4f4;letter-spacing:-0.17px">Whole Words Only</span>
<span class="t" style="left:1522.9px;top:541.1px;font-size:15.5px;color:#f4f4f4;letter-spacing:0.24px">Results</span>
<span class="t" style="left:785.1px;top:632.2px;font-size:14.5px;color:#a8a8a8;letter-spacing:-0.20px">Floor Plan (1 of 1)</span>
<span class="t" style="left:1283.1px;top:633.7px;font-size:15px;color:#f4f4f4;letter-spacing:0.35px">= 30ft&#x27; in&quot;</span>
<span class="t" style="left:1369.1px;top:633.7px;font-size:15px;color:#f4f4f4;letter-spacing:0.48px">42.00 x 30.00 in</span>
<span class="t" style="left:44.0px;top:668.6px;font-size:17px;color:#f4f4f4;font-weight:700;letter-spacing:0.17px">Markups List</span>
<span class="t" style="left:281.6px;top:669.7px;font-size:14.5px;color:#d8d8d8;letter-spacing:-0.20px">Search</span>
<span class="t" style="left:62.2px;top:702.7px;font-size:14px;color:#f4f4f4;font-weight:700;letter-spacing:-0.53px">Subject</span>
<span class="t" style="left:227.9px;top:702.7px;font-size:14px;color:#f4f4f4;font-weight:700;letter-spacing:-0.36px">Page Label</span>
<span class="t" style="left:321.7px;top:702.7px;font-size:14px;color:#f4f4f4;font-weight:700;letter-spacing:-0.52px">Comments</span>
<span class="t" style="left:525.4px;top:702.7px;font-size:14px;color:#f4f4f4;font-weight:700;letter-spacing:-0.70px">Author</span>
<span class="t" style="left:614.4px;top:702.7px;font-size:14px;color:#f4f4f4;font-weight:700;letter-spacing:-0.12px">Date</span>
<span class="t" style="left:665.5px;top:702.7px;font-size:14px;color:#f4f4f4;font-weight:700;letter-spacing:-0.32px">Status</span>
<span class="t" style="left:767.8px;top:702.7px;font-size:14px;color:#f4f4f4;font-weight:700;letter-spacing:-0.62px">Color</span>
<span class="t" style="left:843.0px;top:702.7px;font-size:14px;color:#f4f4f4;font-weight:700;letter-spacing:-0.49px">Layer</span>
<span class="t" style="left:898.7px;top:702.7px;font-size:14px;color:#f4f4f4;font-weight:700;letter-spacing:-0.49px">Sp</span>
<span class="t" style="left:62.1px;top:730.7px;font-size:14.5px;color:#f4f4f4;font-weight:700;letter-spacing:-0.43px">Architect (6)</span>
<span class="t" style="left:62.1px;top:917.7px;font-size:14.5px;color:#f4f4f4;font-weight:700;letter-spacing:-0.59px">Contractor (8)</span>
<span class="t" style="left:95.9px;top:753.0px;font-size:14.5px;color:#f4f4f4;letter-spacing:0.13px">Architect</span>
<span class="t" style="left:221.1px;top:753.0px;font-size:14.5px;color:#f4f4f4;letter-spacing:-0.15px">Floor Plan</span>
<span class="t" style="left:314.5px;top:753.0px;font-size:14.5px;color:#f4f4f4;letter-spacing:-0.07px">Provide mullion detail</span>
<span class="t" style="left:518.9px;top:753.0px;font-size:14.5px;color:#f4f4f4">JPopiel</span>
<span class="t" style="left:607.3px;top:753.0px;font-size:14.5px;color:#f4f4f4;letter-spacing:0.36px">3/7/...</span>
<span class="t" style="left:95.9px;top:776.2px;font-size:14.5px;color:#f4f4f4;letter-spacing:0.13px">Architect</span>
<span class="t" style="left:221.1px;top:776.2px;font-size:14.5px;color:#f4f4f4;letter-spacing:-0.15px">Floor Plan</span>
<span class="t" style="left:314.5px;top:776.2px;font-size:14.5px;color:#f4f4f4;letter-spacing:-0.10px">Stair doors to be fire rated</span>
<span class="t" style="left:518.9px;top:776.2px;font-size:14.5px;color:#f4f4f4">JPopiel</span>
<span class="t" style="left:607.3px;top:776.2px;font-size:14.5px;color:#f4f4f4;letter-spacing:0.36px">3/7/...</span>
<span class="t" style="left:95.9px;top:813.0px;font-size:14.5px;color:#f4f4f4;letter-spacing:0.13px">Architect</span>
<span class="t" style="left:221.1px;top:813.0px;font-size:14.5px;color:#f4f4f4;letter-spacing:-0.15px">Floor Plan</span>
<span class="t" style="left:518.9px;top:813.0px;font-size:14.5px;color:#f4f4f4">JPopiel</span>
<span class="t" style="left:607.3px;top:813.0px;font-size:14.5px;color:#f4f4f4;letter-spacing:0.36px">3/7/...</span>
<span class="t" style="left:95.9px;top:835.2px;font-size:14.5px;color:#f4f4f4;letter-spacing:0.13px">Architect</span>
<span class="t" style="left:221.1px;top:835.2px;font-size:14.5px;color:#f4f4f4;letter-spacing:-0.15px">Floor Plan</span>
<span class="t" style="left:314.5px;top:835.2px;font-size:14.5px;color:#f4f4f4;letter-spacing:-0.06px">Verify 60in clr. radius for ADA</span>
<span class="t" style="left:518.9px;top:835.2px;font-size:14.5px;color:#f4f4f4">JPopiel</span>
<span class="t" style="left:607.3px;top:835.2px;font-size:14.5px;color:#f4f4f4;letter-spacing:0.36px">3/7/...</span>
<span class="t" style="left:95.9px;top:858.2px;font-size:14.5px;color:#f4f4f4;letter-spacing:0.13px">Architect</span>
<span class="t" style="left:221.1px;top:858.2px;font-size:14.5px;color:#f4f4f4;letter-spacing:-0.15px">Floor Plan</span>
<span class="t" style="left:314.5px;top:858.2px;font-size:14.5px;color:#f4f4f4;letter-spacing:-0.27px">See furniture plan for Open</span>
<span class="t" style="left:518.9px;top:858.2px;font-size:14.5px;color:#f4f4f4">JPopiel</span>
<span class="t" style="left:607.3px;top:858.2px;font-size:14.5px;color:#f4f4f4;letter-spacing:0.36px">3/7/...</span>
<span class="t" style="left:95.9px;top:895.2px;font-size:14.5px;color:#f4f4f4;letter-spacing:0.13px">Architect</span>
<span class="t" style="left:221.1px;top:895.2px;font-size:14.5px;color:#f4f4f4;letter-spacing:-0.15px">Floor Plan</span>
<span class="t" style="left:314.5px;top:895.2px;font-size:14.5px;color:#f4f4f4;letter-spacing:-0.40px">Emergency Egress?</span>
<span class="t" style="left:518.9px;top:895.2px;font-size:14.5px;color:#f4f4f4">JPopiel</span>
<span class="t" style="left:607.3px;top:895.2px;font-size:14.5px;color:#f4f4f4;letter-spacing:0.36px">3/7/...</span>
<span class="t" style="left:95.9px;top:940.4px;font-size:14.5px;color:#f4f4f4;letter-spacing:0.08px">Contractor</span>
<span class="t" style="left:221.1px;top:940.4px;font-size:14.5px;color:#f4f4f4;letter-spacing:-0.15px">Floor Plan</span>
<span class="t" style="left:314.5px;top:940.4px;font-size:14.5px;color:#f4f4f4;letter-spacing:-0.07px">Provide detail for corner</span>
<span class="t" style="left:518.9px;top:940.4px;font-size:14.5px;color:#f4f4f4;letter-spacing:-0.19px">ESchonsett</span>
<span class="t" style="left:607.3px;top:940.4px;font-size:14.5px;color:#f4f4f4;letter-spacing:0.36px">3/7/...</span>
<span class="t" style="left:314.5px;top:792.1px;font-size:14.5px;color:#f4f4f4;letter-spacing:-0.13px">assemblies, typ.</span>
<span class="t" style="left:314.5px;top:874.3px;font-size:14.5px;color:#f4f4f4;letter-spacing:-0.14px">Office area layout</span>
<span class="t" style="left:314.5px;top:956.7px;font-size:14.5px;color:#f4f4f4;letter-spacing:0.43px">condition</span>
<span class="t" style="left:857.4px;top:753.0px;font-size:14.5px;color:#f4f4f4;letter-spacing:-0.27px">25...</span>
<span class="t" style="left:857.4px;top:776.2px;font-size:14.5px;color:#f4f4f4;letter-spacing:-0.27px">25...</span>
<span class="t" style="left:857.4px;top:813.0px;font-size:14.5px;color:#f4f4f4;letter-spacing:-0.27px">50...</span>
<span class="t" style="left:857.4px;top:835.2px;font-size:14.5px;color:#f4f4f4;letter-spacing:-0.27px">50...</span>
<span class="t" style="left:857.4px;top:858.2px;font-size:14.5px;color:#f4f4f4;letter-spacing:-0.27px">50...</span>
<span class="t" style="left:857.4px;top:940.4px;font-size:14.5px;color:#f4f4f4;letter-spacing:-0.27px">50...</span>
<svg style="left:0;top:0;z-index:5" width="1800" height="973"><g transform="translate(21.5,35.5)" fill="none" stroke="#e4e4e4" stroke-width="1.3" stroke-linecap="round" stroke-linejoin="round"><path d="M0.5,17 V0.5 H8 L12,4.5 V9"/><path d="M8,0.5 V4.5 H12"/><path d="M0.5,17 H7"/></g>
<g transform="translate(21.5,35.5)" fill="none" stroke="#d7a948" stroke-width="1.1" stroke-linecap="round" stroke-linejoin="round"><circle cx="11" cy="13" r="2.6"/><path d="M11,8.6v1.6M11,15.8v1.6M6.6,13h1.6M13.8,13h1.6M8,10l1,1M13,15l1,1M14,10l-1,1M8,16l1,-1"/></g>
<g transform="translate(53.5,36)" fill="none" stroke="#e4e4e4" stroke-width="1.3" stroke-linecap="round" stroke-linejoin="round"><path d="M0.5,15.5 V1.5 Q0.5,0.5 1.5,0.5 H6 L8,2.5 H14.5 Q15.5,2.5 15.5,3.5 V15.5 Q15.5,16 14.5,16 H1.5 Q0.5,16 0.5,15 Z"/><path d="M0.5,5 H15.5"/></g>
<g transform="translate(87.5,36)" fill="none" stroke="#707174" stroke-width="1.2" stroke-linecap="round" stroke-linejoin="round"><path d="M0.5,0.5 H12.5 L16,4 V16.5 H0.5 Z"/><path d="M4,0.5 V5.5 H11 V0.5"/><path d="M3.5,16.5 V10 H13 V16.5"/><path d="M8.5,2 V4"/></g>
<g transform="translate(121,36)" fill="none" stroke="#e4e4e4" stroke-width="1.3" stroke-linecap="round" stroke-linejoin="round"><path d="M4,4.5 V0.5 H13 V4.5"/><path d="M3.5,13 H1.5 Q0.5,13 0.5,12 V5.5 Q0.5,4.5 1.5,4.5 H15.5 Q16.5,4.5 16.5,5.5 V12 Q16.5,13 15.5,13 H13.5"/><path d="M3.5,9.5 H13.5 V16.5 H3.5 Z"/></g>
<g transform="translate(154.5,38.5)" fill="none" stroke="#e4e4e4" stroke-width="1.3" stroke-linecap="round" stroke-linejoin="round"><rect x="0.5" y="0.5" width="16.5" height="11"/><path d="M0.5,0.5 L8.75,7 L17,0.5"/></g>
<g transform="translate(188.5,36)" fill="none" stroke="#e4e4e4" stroke-width="1.2" stroke-linecap="round" stroke-linejoin="round"><rect x="1.5" y="0.5" width="14.5" height="16.5"/><path d="M13.5,0.5 V17"/><path d="M0,3h2.5M0,5.5h2.5M0,8h2.5M0,10.5h2.5M0,13h2.5"/></g>
<path d="M219,32 V56" stroke="#55565a" stroke-width="1.3" stroke-dasharray="1.4 2.2"/>
<path d="M297,32 V56" stroke="#55565a" stroke-width="1.3" stroke-dasharray="1.4 2.2"/>
<path d="M509.5,32 V56" stroke="#55565a" stroke-width="1.3" stroke-dasharray="1.4 2.2"/>
<path d="M1604.3,32 V56" stroke="#55565a" stroke-width="1.3" stroke-dasharray="1.4 2.2"/>
<path d="M48.5,69 V84" stroke="#4a4b4e" stroke-width="1"/>
<path d="M87.6,69 V84" stroke="#4a4b4e" stroke-width="1"/>
<path d="M1186.7,36 V53" stroke="#4a4b4e" stroke-width="1.1"/>
<path d="M1495.4,36 V53" stroke="#4a4b4e" stroke-width="1.1"/>
<g transform="translate(231.5,35)" fill="none" stroke="#e4e4e4" stroke-width="1.3" stroke-linecap="round" stroke-linejoin="round"><rect x="9.5" y="0.5" width="8" height="12"/></g>
<g transform="translate(231.5,35)" fill="none" stroke="#e4e4e4" stroke-width="1.2" stroke-linecap="round" stroke-linejoin="round"><path d="M0.5,9 V17.5 H11 V13" stroke-dasharray="1.3 1.3"/></g>
<g transform="translate(231.5,35)" fill="none" stroke="#d7a948" stroke-width="1.2" stroke-linecap="round" stroke-linejoin="round"><path d="M2,6 Q3,1.5 7,1.5 M2,6 L0.8,3.5 M2,6 L4.5,5"/></g>
<g transform="translate(266,35)" fill="none" stroke="#e4e4e4" stroke-width="1.3" stroke-linecap="round" stroke-linejoin="round"><rect x="0.5" y="0.5" width="8" height="12"/></g>
<g transform="translate(266,35)" fill="none" stroke="#e4e4e4" stroke-width="1.2" stroke-linecap="round" stroke-linejoin="round"><path d="M7,9 H17.5 V17.5 H7 V13" stroke-dasharray="1.3 1.3"/></g>
<g transform="translate(266,35)" fill="none" stroke="#d7a948" stroke-width="1.2" stroke-linecap="round" stroke-linejoin="round"><path d="M16,6 Q15,1.5 11,1.5 M16,6 L17.2,3.5 M16,6 L13.5,5"/></g>
<g transform="translate(311,35.5)" fill="none" stroke="#d7a948" stroke-width="1.3" stroke-linecap="round" stroke-linejoin="round"><circle cx="7.75" cy="2.3" r="1.8"/><path d="M3,4.5 H12.5 L15,15.5 H0.5 Z"/></g>
<path d="M311,52.5 H326.5" stroke="#9a9a9a" stroke-width="1.5"/>
<g transform="translate(343.5,35.5)" fill="none" stroke="#e4e4e4" stroke-width="1.4" stroke-linecap="round" stroke-linejoin="round"><rect x="0.5" y="0.5" width="17" height="17" stroke-dasharray="1.6 2"/></g>
<g transform="translate(343.5,35.5)" fill="none" stroke="#e4e4e4" stroke-width="1.2" stroke-linecap="round" stroke-linejoin="round"><circle cx="6" cy="13" r="2.2"/><circle cx="12" cy="13" r="2.2"/><path d="M7,11 L12,4 M11,11 L6,4"/></g>
<g transform="translate(377,35.5)" fill="none" stroke="#e4e4e4" stroke-width="1.3" stroke-linecap="round" stroke-linejoin="round"><path d="M0.5,17.5 V0.5 H17 V9 M7,0.5 V4 H10 M0.5,9 H5 M0.5,12.5 H5 V17.5 H10 M13,5 H17"/></g>
<g transform="translate(377,35.5)" fill="none" stroke="#2a8bea" stroke-width="1.6" stroke-linecap="round" stroke-linejoin="round"><path d="M14.5,11.5 V18.5 M11,15 H18"/></g>
<g transform="translate(411,35.5)" fill="none" stroke="#3fae55" stroke-width="1.5" stroke-linecap="round" stroke-linejoin="round"><path d="M7.5,6.5 L10.5,3.5 Q12.5,1.5 14.5,3.5 Q16.5,5.5 14.5,7.5 L11.5,10.5 Q10,12 8.5,11 M9.5,11 L6.5,14 Q4.5,16 2.5,14 Q0.5,12 2.5,10 L5.5,7 Q7,5.5 8.5,6.5"/></g>
<g transform="translate(448,35.5)" fill="none" stroke="#e4e4e4" stroke-width="1.3" stroke-linecap="round" stroke-linejoin="round"><path d="M8.5,5 V13 Q8.5,16.5 5.25,16.5 Q2,16.5 2,13 V3.5 Q2,0.5 4.5,0.5 Q7,0.5 7,3.5 V12 Q7,13.5 5.25,13.5 Q3.5,13.5 3.5,12 V5"/></g>
<g transform="translate(478,36)" fill="none" stroke="#707174" stroke-width="1.3" stroke-linecap="round" stroke-linejoin="round"><path d="M1,10 L7,4 L12,9 L6,15 Z M7,4 L10,1 M12,9 L15,6 M10,1 L15,6 M13,3 L16,0"/></g>
<g transform="translate(522,36)" fill="none" stroke="#e4e4e4" stroke-width="1.3" stroke-linecap="round" stroke-linejoin="round"><rect x="0.5" y="0.5" width="16.5" height="16.5"/><path d="M5,13 L8.75,3.5 L12.5,13 M6.3,10 H11.2"/></g>
<g transform="translate(556,35)" fill="none" stroke="#d7a948" stroke-width="1.2" stroke-linecap="round" stroke-linejoin="round"><path d="M0.5,17 L4,11 L9,14 Z" stroke="#ddd"/><path d="M4,11 L12,1.5 M9,14 L16,6 M12,1.5 L16,6 M6,8 L13,13"/></g>
<g transform="translate(590,35.5)" fill="none" stroke="#2a8bea" stroke-width="1.3" stroke-linecap="round" stroke-linejoin="round"><path d="M1,16.5 L3,11 L13,0.5 M3,11 L6,14 L17,4 M1,16.5 L6,14"/></g>
<circle cx="591.5" cy="51.5" r="1.5" fill="#fff"/>
<g transform="translate(622.5,35.5)" fill="none" stroke="#e4e4e4" stroke-width="1.2" stroke-linecap="round" stroke-linejoin="round"><rect x="0.5" y="0.5" width="11" height="7"/><path d="M0.5,11.5 H13 L16.5,14.5 M13,11.5 L16,9"/><path d="M0.5,17 q1.5,-2 3,0 q1.5,-2 3,0 q1.5,-2 3,0 q1.5,-2 3,0 q1.5,-2 3,0"/></g>
<g transform="translate(657,36)" fill="none" stroke="#e4e4e4" stroke-width="1.2" stroke-linecap="round" stroke-linejoin="round"><path d="M5,3 Q8.5,-1.5 12,3 Q17,2 16,7.5 Q19,11 15,14 Q13.5,18.5 9,16.5 Q5,18.5 3,14 Q-1,11 2,7.5 Q1,2 5,3 Z"/></g>
<path d="M911,54 Q913,40 930,36" stroke="#d0d0d0" stroke-width="1.3" fill="none"/>
<path d="M944,53 L948,46" stroke="#d0d0d0" stroke-width="1.2"/>
<path d="M1013,52.5 H1029 M1013,48 V52.5 M1029,48 V52.5" stroke="#d0d0d0" stroke-width="1.3" fill="none"/>
<path d="M1047.5,48 Q1048.5,53.5 1054,53.5 Q1059.5,53.5 1060.5,48" stroke="#d0d0d0" stroke-width="1.3" fill="none"/>
<path d="M1080,53 H1097 L1094,48 M1080,53 L1083,48" stroke="#d0d0d0" stroke-width="1.3" fill="none"/>
<path d="M1111.3,48 V57" stroke="#55565a" stroke-width="1.3" stroke-dasharray="1.4 2.2"/>
<path d="M1124.5,48 V53 M1123,50 h2 M1123,53 h2" stroke="#7d5fc9" stroke-width="1"/>
<path d="M1128,49 Q1129,53.5 1134,53.5 Q1139,53.5 1140,49" stroke="#d0d0d0" stroke-width="1.3" fill="none"/>
<path d="M1157.5,48 V53 M1156,50 h2 M1156,53 h2" stroke="#7d5fc9" stroke-width="1"/>
<path d="M1165,36 v2 M1168,36 v2 M1171,36 v2 M1174,36 v2 M1177,36 v2 M1163,36 H1180" stroke="#7d5fc9" stroke-width="1"/>
<g transform="translate(1165,41)" fill="none" stroke="#e4e4e4" stroke-width="1.3" stroke-linecap="round" stroke-linejoin="round"><path d="M2,10 V5 H15 V9.5 H9 M5,5 V12 M5,9 H9 V12"/></g>
<g transform="translate(1197,36)" fill="none" stroke="#e4e4e4" stroke-width="1.3" stroke-linecap="round" stroke-linejoin="round"><path d="M0.5,17 V0.5 H18" stroke="#7d5fc9" stroke-width="1.2"/><path d="M3.3,0.5 v2" stroke="#7d5fc9" stroke-width="0.9"/><path d="M0.5,3.3 h2" stroke="#7d5fc9" stroke-width="0.9"/><path d="M6.6,0.5 v2" stroke="#7d5fc9" stroke-width="0.9"/><path d="M0.5,6.6 h2" stroke="#7d5fc9" stroke-width="0.9"/><path d="M9.9,0.5 v2" stroke="#7d5fc9" stroke-width="0.9"/><path d="M0.5,9.9 h2" stroke="#7d5fc9" stroke-width="0.9"/><path d="M13.2,0.5 v2" stroke="#7d5fc9" stroke-width="0.9"/><path d="M0.5,13.2 h2" stroke="#7d5fc9" stroke-width="0.9"/><path d="M16.5,0.5 v2" stroke="#7d5fc9" stroke-width="0.9"/><path d="M0.5,16.5 h2" stroke="#7d5fc9" stroke-width="0.9"/></g>
<g transform="translate(1231,36)" fill="none" stroke="#e4e4e4" stroke-width="1.3" stroke-linecap="round" stroke-linejoin="round"><path d="M0.5,17 V0.5 H18" stroke="#7d5fc9" stroke-width="1.2"/><path d="M3.3,0.5 v2" stroke="#7d5fc9" stroke-width="0.9"/><path d="M0.5,3.3 h2" stroke="#7d5fc9" stroke-width="0.9"/><path d="M6.6,0.5 v2" stroke="#7d5fc9" stroke-width="0.9"/><path d="M0.5,6.6 h2" stroke="#7d5fc9" stroke-width="0.9"/><path d="M9.9,0.5 v2" stroke="#7d5fc9" stroke-width="0.9"/><path d="M0.5,9.9 h2" stroke="#7d5fc9" stroke-width="0.9"/><path d="M13.2,0.5 v2" stroke="#7d5fc9" stroke-width="0.9"/><path d="M0.5,13.2 h2" stroke="#7d5fc9" stroke-width="0.9"/><path d="M16.5,0.5 v2" stroke="#7d5fc9" stroke-width="0.9"/><path d="M0.5,16.5 h2" stroke="#7d5fc9" stroke-width="0.9"/></g>
<g transform="translate(1264,36)" fill="none" stroke="#e4e4e4" stroke-width="1.3" stroke-linecap="round" stroke-linejoin="round"><path d="M0.5,17 V0.5 H18" stroke="#7d5fc9" stroke-width="1.2"/><path d="M3.3,0.5 v2" stroke="#7d5fc9" stroke-width="0.9"/><path d="M0.5,3.3 h2" stroke="#7d5fc9" stroke-width="0.9"/><path d="M6.6,0.5 v2" stroke="#7d5fc9" stroke-width="0.9"/><path d="M0.5,6.6 h2" stroke="#7d5fc9" stroke-width="0.9"/><path d="M9.9,0.5 v2" stroke="#7d5fc9" stroke-width="0.9"/><path d="M0.5,9.9 h2" stroke="#7d5fc9" stroke-width="0.9"/><path d="M13.2,0.5 v2" stroke="#7d5fc9" stroke-width="0.9"/><path d="M0.5,13.2 h2" stroke="#7d5fc9" stroke-width="0.9"/><path d="M16.5,0.5 v2" stroke="#7d5fc9" stroke-width="0.9"/><path d="M0.5,16.5 h2" stroke="#7d5fc9" stroke-width="0.9"/></g>
<g transform="translate(1297,36)" fill="none" stroke="#e4e4e4" stroke-width="1.3" stroke-linecap="round" stroke-linejoin="round"><path d="M0.5,17 V0.5 H18" stroke="#7d5fc9" stroke-width="1.2"/><path d="M3.3,0.5 v2" stroke="#7d5fc9" stroke-width="0.9"/><path d="M0.5,3.3 h2" stroke="#7d5fc9" stroke-width="0.9"/><path d="M6.6,0.5 v2" stroke="#7d5fc9" stroke-width="0.9"/><path d="M0.5,6.6 h2" stroke="#7d5fc9" stroke-width="0.9"/><path d="M9.9,0.5 v2" stroke="#7d5fc9" stroke-width="0.9"/><path d="M0.5,9.9 h2" stroke="#7d5fc9" stroke-width="0.9"/><path d="M13.2,0.5 v2" stroke="#7d5fc9" stroke-width="0.9"/><path d="M0.5,13.2 h2" stroke="#7d5fc9" stroke-width="0.9"/><path d="M16.5,0.5 v2" stroke="#7d5fc9" stroke-width="0.9"/><path d="M0.5,16.5 h2" stroke="#7d5fc9" stroke-width="0.9"/></g>
<g transform="translate(1331,36)" fill="none" stroke="#e4e4e4" stroke-width="1.3" stroke-linecap="round" stroke-linejoin="round"><path d="M0.5,17 V0.5 H18" stroke="#7d5fc9" stroke-width="1.2"/><path d="M3.3,0.5 v2" stroke="#7d5fc9" stroke-width="0.9"/><path d="M0.5,3.3 h2" stroke="#7d5fc9" stroke-width="0.9"/><path d="M6.6,0.5 v2" stroke="#7d5fc9" stroke-width="0.9"/><path d="M0.5,6.6 h2" stroke="#7d5fc9" stroke-width="0.9"/><path d="M9.9,0.5 v2" stroke="#7d5fc9" stroke-width="0.9"/><path d="M0.5,9.9 h2" stroke="#7d5fc9" stroke-width="0.9"/><path d="M13.2,0.5 v2" stroke="#7d5fc9" stroke-width="0.9"/><path d="M0.5,13.2 h2" stroke="#7d5fc9" stroke-width="0.9"/><path d="M16.5,0.5 v2" stroke="#7d5fc9" stroke-width="0.9"/><path d="M0.5,16.5 h2" stroke="#7d5fc9" stroke-width="0.9"/></g>
<g transform="translate(1364,36)" fill="none" stroke="#e4e4e4" stroke-width="1.3" stroke-linecap="round" stroke-linejoin="round"><path d="M0.5,17 V0.5 H18" stroke="#7d5fc9" stroke-width="1.2"/><path d="M3.3,0.5 v2" stroke="#7d5fc9" stroke-width="0.9"/><path d="M0.5,3.3 h2" stroke="#7d5fc9" stroke-width="0.9"/><path d="M6.6,0.5 v2" stroke="#7d5fc9" stroke-width="0.9"/><path d="M0.5,6.6 h2" stroke="#7d5fc9" stroke-width="0.9"/><path d="M9.9,0.5 v2" stroke="#7d5fc9" stroke-width="0.9"/><path d="M0.5,9.9 h2" stroke="#7d5fc9" stroke-width="0.9"/><path d="M13.2,0.5 v2" stroke="#7d5fc9" stroke-width="0.9"/><path d="M0.5,13.2 h2" stroke="#7d5fc9" stroke-width="0.9"/><path d="M16.5,0.5 v2" stroke="#7d5fc9" stroke-width="0.9"/><path d="M0.5,16.5 h2" stroke="#7d5fc9" stroke-width="0.9"/></g>
<g transform="translate(1398,36)" fill="none" stroke="#e4e4e4" stroke-width="1.3" stroke-linecap="round" stroke-linejoin="round"><path d="M0.5,17 V0.5 H18" stroke="#7d5fc9" stroke-width="1.2"/><path d="M3.3,0.5 v2" stroke="#7d5fc9" stroke-width="0.9"/><path d="M0.5,3.3 h2" stroke="#7d5fc9" stroke-width="0.9"/><path d="M6.6,0.5 v2" stroke="#7d5fc9" stroke-width="0.9"/><path d="M0.5,6.6 h2" stroke="#7d5fc9" stroke-width="0.9"/><path d="M9.9,0.5 v2" stroke="#7d5fc9" stroke-width="0.9"/><path d="M0.5,9.9 h2" stroke="#7d5fc9" stroke-width="0.9"/><path d="M13.2,0.5 v2" stroke="#7d5fc9" stroke-width="0.9"/><path d="M0.5,13.2 h2" stroke="#7d5fc9" stroke-width="0.9"/><path d="M16.5,0.5 v2" stroke="#7d5fc9" stroke-width="0.9"/><path d="M0.5,16.5 h2" stroke="#7d5fc9" stroke-width="0.9"/></g>
<g transform="translate(1431,36)" fill="none" stroke="#e4e4e4" stroke-width="1.3" stroke-linecap="round" stroke-linejoin="round"><path d="M0.5,17 V0.5 H18" stroke="#7d5fc9" stroke-width="1.2"/><path d="M3.3,0.5 v2" stroke="#7d5fc9" stroke-width="0.9"/><path d="M0.5,3.3 h2" stroke="#7d5fc9" stroke-width="0.9"/><path d="M6.6,0.5 v2" stroke="#7d5fc9" stroke-width="0.9"/><path d="M0.5,6.6 h2" stroke="#7d5fc9" stroke-width="0.9"/><path d="M9.9,0.5 v2" stroke="#7d5fc9" stroke-width="0.9"/><path d="M0.5,9.9 h2" stroke="#7d5fc9" stroke-width="0.9"/><path d="M13.2,0.5 v2" stroke="#7d5fc9" stroke-width="0.9"/><path d="M0.5,13.2 h2" stroke="#7d5fc9" stroke-width="0.9"/><path d="M16.5,0.5 v2" stroke="#7d5fc9" stroke-width="0.9"/><path d="M0.5,16.5 h2" stroke="#7d5fc9" stroke-width="0.9"/></g>
<g transform="translate(1465,36)" fill="none" stroke="#e4e4e4" stroke-width="1.3" stroke-linecap="round" stroke-linejoin="round"><path d="M0.5,17 V0.5 H18" stroke="#7d5fc9" stroke-width="1.2"/><path d="M3.3,0.5 v2" stroke="#7d5fc9" stroke-width="0.9"/><path d="M0.5,3.3 h2" stroke="#7d5fc9" stroke-width="0.9"/><path d="M6.6,0.5 v2" stroke="#7d5fc9" stroke-width="0.9"/><path d="M0.5,6.6 h2" stroke="#7d5fc9" stroke-width="0.9"/><path d="M9.9,0.5 v2" stroke="#7d5fc9" stroke-width="0.9"/><path d="M0.5,9.9 h2" stroke="#7d5fc9" stroke-width="0.9"/><path d="M13.2,0.5 v2" stroke="#7d5fc9" stroke-width="0.9"/><path d="M0.5,13.2 h2" stroke="#7d5fc9" stroke-width="0.9"/><path d="M16.5,0.5 v2" stroke="#7d5fc9" stroke-width="0.9"/><path d="M0.5,16.5 h2" stroke="#7d5fc9" stroke-width="0.9"/></g>
<g transform="translate(1506,36)" fill="none" stroke="#e4e4e4" stroke-width="1.3" stroke-linecap="round" stroke-linejoin="round"><path d="M0.5,17 V0.5 H18" stroke="#7d5fc9" stroke-width="1.2"/><path d="M3.3,0.5 v2" stroke="#7d5fc9" stroke-width="0.9"/><path d="M0.5,3.3 h2" stroke="#7d5fc9" stroke-width="0.9"/><path d="M6.6,0.5 v2" stroke="#7d5fc9" stroke-width="0.9"/><path d="M0.5,6.6 h2" stroke="#7d5fc9" stroke-width="0.9"/><path d="M9.9,0.5 v2" stroke="#7d5fc9" stroke-width="0.9"/><path d="M0.5,9.9 h2" stroke="#7d5fc9" stroke-width="0.9"/><path d="M13.2,0.5 v2" stroke="#7d5fc9" stroke-width="0.9"/><path d="M0.5,13.2 h2" stroke="#7d5fc9" stroke-width="0.9"/><path d="M16.5,0.5 v2" stroke="#7d5fc9" stroke-width="0.9"/><path d="M0.5,16.5 h2" stroke="#7d5fc9" stroke-width="0.9"/></g>
<g transform="translate(1539,36)" fill="none" stroke="#e4e4e4" stroke-width="1.3" stroke-linecap="round" stroke-linejoin="round"><path d="M0.5,17 V0.5 H18" stroke="#7d5fc9" stroke-width="1.2"/><path d="M3.3,0.5 v2" stroke="#7d5fc9" stroke-width="0.9"/><path d="M0.5,3.3 h2" stroke="#7d5fc9" stroke-width="0.9"/><path d="M6.6,0.5 v2" stroke="#7d5fc9" stroke-width="0.9"/><path d="M0.5,6.6 h2" stroke="#7d5fc9" stroke-width="0.9"/><path d="M9.9,0.5 v2" stroke="#7d5fc9" stroke-width="0.9"/><path d="M0.5,9.9 h2" stroke="#7d5fc9" stroke-width="0.9"/><path d="M13.2,0.5 v2" stroke="#7d5fc9" stroke-width="0.9"/><path d="M0.5,13.2 h2" stroke="#7d5fc9" stroke-width="0.9"/><path d="M16.5,0.5 v2" stroke="#7d5fc9" stroke-width="0.9"/><path d="M0.5,16.5 h2" stroke="#7d5fc9" stroke-width="0.9"/></g>
<g transform="translate(1572,36)" fill="none" stroke="#e4e4e4" stroke-width="1.3" stroke-linecap="round" stroke-linejoin="round"><path d="M0.5,17 V0.5 H18" stroke="#7d5fc9" stroke-width="1.2"/><path d="M3.3,0.5 v2" stroke="#7d5fc9" stroke-width="0.9"/><path d="M0.5,3.3 h2" stroke="#7d5fc9" stroke-width="0.9"/><path d="M6.6,0.5 v2" stroke="#7d5fc9" stroke-width="0.9"/><path d="M0.5,6.6 h2" stroke="#7d5fc9" stroke-width="0.9"/><path d="M9.9,0.5 v2" stroke="#7d5fc9" stroke-width="0.9"/><path d="M0.5,9.9 h2" stroke="#7d5fc9" stroke-width="0.9"/><path d="M13.2,0.5 v2" stroke="#7d5fc9" stroke-width="0.9"/><path d="M0.5,13.2 h2" stroke="#7d5fc9" stroke-width="0.9"/><path d="M16.5,0.5 v2" stroke="#7d5fc9" stroke-width="0.9"/><path d="M0.5,16.5 h2" stroke="#7d5fc9" stroke-width="0.9"/></g>
<g transform="translate(1197,36)" fill="none" stroke="#e4e4e4" stroke-width="1.3" stroke-linecap="round" stroke-linejoin="round"><path d="M4,4 V13 M18,4 V13 M5,8.5 H17 M5,8.5 l3,-2 M5,8.5 l3,2 M17,8.5 l-3,-2 M17,8.5 l-3,2"/></g>
<g transform="translate(1231,36)" fill="none" stroke="#e4e4e4" stroke-width="1.3" stroke-linecap="round" stroke-linejoin="round"><path d="M6,9.5 L11,3.5 H16.5 V16 H6"/><circle cx="6" cy="9.5" r="1.3" fill="#e4e4e4"/><circle cx="11" cy="3.5" r="1.3" fill="#e4e4e4"/><circle cx="16.5" cy="3.5" r="1.3" fill="#e4e4e4"/><circle cx="16.5" cy="16" r="1.3" fill="#e4e4e4"/><circle cx="6" cy="16" r="1.3" fill="#e4e4e4"/></g>
<g transform="translate(1264,36)" fill="none" stroke="#e4e4e4" stroke-width="1.3" stroke-linecap="round" stroke-linejoin="round"><path d="M5,16.5 V10 L11,3.5 H18 V16.5 Z"/></g>
<g transform="translate(1297,36)" fill="none" stroke="#e4e4e4" stroke-width="1.3" stroke-linecap="round" stroke-linejoin="round"><path d="M5,16.5 H18 V3.5 H11 L5,10"/></g>
<g transform="translate(1331,36)" fill="none" stroke="#e4e4e4" stroke-width="1.3" stroke-linecap="round" stroke-linejoin="round"><circle cx="12" cy="10" r="6.5"/><path d="M8,10 H16 M8,10 l2.5,-2 M8,10 l2.5,2 M16,10 l-2.5,-2 M16,10 l-2.5,2"/></g>
<g transform="translate(1364,36)" fill="none" stroke="#e4e4e4" stroke-width="1.3" stroke-linecap="round" stroke-linejoin="round"><path d="M5,3 V16.5 H18 M5,9 Q12,9 13,16.5"/></g>
<g transform="translate(1398,36)" fill="none" stroke="#e4e4e4" stroke-width="1.3" stroke-linecap="round" stroke-linejoin="round"><circle cx="12" cy="10" r="6.5"/><path d="M10,10 H15 M13,8 L15,10 L13,12"/></g>
<g transform="translate(1431,36)" fill="none" stroke="#e4e4e4" stroke-width="1.3" stroke-linecap="round" stroke-linejoin="round"><path d="M6,6 L12,3 L18,6 V14 L12,17 L6,14 Z M6,6 L12,9 L18,6 M12,9 V17"/></g>
<g transform="translate(1465,36)" fill="none" stroke="#e4e4e4" stroke-width="1.3" stroke-linecap="round" stroke-linejoin="round"><path d="M6,4 V15 M9,4 V15 M12,4 V15 M15,4 V15 M4,12 L18,6"/></g>
<g transform="translate(1506,36)" fill="none" stroke="#e4e4e4" stroke-width="1.3" stroke-linecap="round" stroke-linejoin="round"><path d="M5,16.5 V10 L11,3.5 H18 V16.5 Z M12,16.5 V12 H16" /><path d="M12,12 h0.1 M14,12 h0.1" stroke-width="1.5"/></g>
<g transform="translate(1539,36)" fill="none" stroke="#e4e4e4" stroke-width="1.3" stroke-linecap="round" stroke-linejoin="round"><path d="M5,16.5 V10 L11,3.5 H18 V16.5 Z M10,16.5 Q11,11 16,9" stroke-dasharray=""/></g>
<g transform="translate(1572,36)" fill="none" stroke="#e4e4e4" stroke-width="1.3" stroke-linecap="round" stroke-linejoin="round"><path d="M5,3 V16.5 H18 V3 M5,11 q2,-1.5 3.25,0 q2,-1.5 3.25,0 q2,-1.5 3.25,0 q2,-1.5 3.25,0"/></g>
<g transform="translate(1617,36)" fill="none" stroke="#e4e4e4" stroke-width="1.3" stroke-linecap="round" stroke-linejoin="round"><path d="M0.5,17 V0.5 H18" stroke="#e9801f" stroke-width="1.2"/><path d="M3.3,0.5 v2" stroke="#e9801f" stroke-width="0.9"/><path d="M0.5,3.3 h2" stroke="#e9801f" stroke-width="0.9"/><path d="M6.6,0.5 v2" stroke="#e9801f" stroke-width="0.9"/><path d="M0.5,6.6 h2" stroke="#e9801f" stroke-width="0.9"/><path d="M9.9,0.5 v2" stroke="#e9801f" stroke-width="0.9"/><path d="M0.5,9.9 h2" stroke="#e9801f" stroke-width="0.9"/><path d="M13.2,0.5 v2" stroke="#e9801f" stroke-width="0.9"/><path d="M0.5,13.2 h2" stroke="#e9801f" stroke-width="0.9"/><path d="M16.5,0.5 v2" stroke="#e9801f" stroke-width="0.9"/><path d="M0.5,16.5 h2" stroke="#e9801f" stroke-width="0.9"/></g>
<g transform="translate(1650.5,36)" fill="none" stroke="#e4e4e4" stroke-width="1.3" stroke-linecap="round" stroke-linejoin="round"><path d="M0.5,17 V0.5 H18" stroke="#e9801f" stroke-width="1.2"/><path d="M3.3,0.5 v2" stroke="#e9801f" stroke-width="0.9"/><path d="M0.5,3.3 h2" stroke="#e9801f" stroke-width="0.9"/><path d="M6.6,0.5 v2" stroke="#e9801f" stroke-width="0.9"/><path d="M0.5,6.6 h2" stroke="#e9801f" stroke-width="0.9"/><path d="M9.9,0.5 v2" stroke="#e9801f" stroke-width="0.9"/><path d="M0.5,9.9 h2" stroke="#e9801f" stroke-width="0.9"/><path d="M13.2,0.5 v2" stroke="#e9801f" stroke-width="0.9"/><path d="M0.5,13.2 h2" stroke="#e9801f" stroke-width="0.9"/><path d="M16.5,0.5 v2" stroke="#e9801f" stroke-width="0.9"/><path d="M0.5,16.5 h2" stroke="#e9801f" stroke-width="0.9"/></g>
<g transform="translate(1683.5,36)" fill="none" stroke="#e4e4e4" stroke-width="1.3" stroke-linecap="round" stroke-linejoin="round"><path d="M0.5,17 V0.5 H18" stroke="#e9801f" stroke-width="1.2"/><path d="M3.3,0.5 v2" stroke="#e9801f" stroke-width="0.9"/><path d="M0.5,3.3 h2" stroke="#e9801f" stroke-width="0.9"/><path d="M6.6,0.5 v2" stroke="#e9801f" stroke-width="0.9"/><path d="M0.5,6.6 h2" stroke="#e9801f" stroke-width="0.9"/><path d="M9.9,0.5 v2" stroke="#e9801f" stroke-width="0.9"/><path d="M0.5,9.9 h2" stroke="#e9801f" stroke-width="0.9"/><path d="M13.2,0.5 v2" stroke="#e9801f" stroke-width="0.9"/><path d="M0.5,13.2 h2" stroke="#e9801f" stroke-width="0.9"/><path d="M16.5,0.5 v2" stroke="#e9801f" stroke-width="0.9"/><path d="M0.5,16.5 h2" stroke="#e9801f" stroke-width="0.9"/></g>
<g transform="translate(1717,36)" fill="none" stroke="#e4e4e4" stroke-width="1.3" stroke-linecap="round" stroke-linejoin="round"><path d="M0.5,17 V0.5 H18" stroke="#e9801f" stroke-width="1.2"/><path d="M3.3,0.5 v2" stroke="#e9801f" stroke-width="0.9"/><path d="M0.5,3.3 h2" stroke="#e9801f" stroke-width="0.9"/><path d="M6.6,0.5 v2" stroke="#e9801f" stroke-width="0.9"/><path d="M0.5,6.6 h2" stroke="#e9801f" stroke-width="0.9"/><path d="M9.9,0.5 v2" stroke="#e9801f" stroke-width="0.9"/><path d="M0.5,9.9 h2" stroke="#e9801f" stroke-width="0.9"/><path d="M13.2,0.5 v2" stroke="#e9801f" stroke-width="0.9"/><path d="M0.5,13.2 h2" stroke="#e9801f" stroke-width="0.9"/><path d="M16.5,0.5 v2" stroke="#e9801f" stroke-width="0.9"/><path d="M0.5,16.5 h2" stroke="#e9801f" stroke-width="0.9"/></g>
<g transform="translate(1617,36)" fill="none" stroke="#e4e4e4" stroke-width="1.4" stroke-linecap="round" stroke-linejoin="round"><path d="M5,4 H15 L11,10 L16,16.5 H5 Z"/></g>
<g transform="translate(1650.5,36)" fill="none" stroke="#e4e4e4" stroke-width="1.4" stroke-linecap="round" stroke-linejoin="round"><rect x="5" y="5" width="13" height="10"/></g>
<g transform="translate(1683.5,36)" fill="none" stroke="#e4e4e4" stroke-width="1.4" stroke-linecap="round" stroke-linejoin="round"><ellipse cx="12" cy="10.5" rx="6.5" ry="5"/></g>
<g transform="translate(1717,36)" fill="none" stroke="#e4e4e4" stroke-width="1.3" stroke-linecap="round" stroke-linejoin="round"><path d="M5,16 L8,11 L10,13 L12,7 L14,9 L17,4"/></g>
<text x="19.8" y="82.3" font-size="10.5" font-weight="bold" fill="#e8e8e8" font-family="Liberation Sans">A</text><text x="29.3" y="82.3" font-size="10.5" font-weight="bold" fill="#e8e8e8" font-family="Liberation Sans">B</text>
<path d="M28,70 V84 M25.5,69.5 H30.5" stroke="#e8e8e8" stroke-width="1"/>
<path d="M62,70.5 H73.5 M67.75,70.5 V84" stroke="#f0f0f0" stroke-width="2"/>
<path d="M61.5,77.5 H74" stroke="#d7a948" stroke-width="1.2"/>
<path d="M101,70.5 H112.5 M106.75,70.5 V84" stroke="#f0f0f0" stroke-width="2"/>
<path d="M135,70.5 H146.5 M140.75,70.5 V84" stroke="#f0f0f0" stroke-width="2"/>
<path d="M168,70.5 H179.5 M173.75,70.5 V84" stroke="#f0f0f0" stroke-width="2"/>
<path d="M167.5,77.5 H180" stroke="#d7a948" stroke-width="1.2"/>
<path d="M70,83 l2,-3 l2,3" stroke="#d7a948" stroke-width="1.1" fill="none"/>
<path d="M1658,15.5 H1670" stroke="#ddd" stroke-width="1.2"/>
<path d="M1712.5,13.5 h9 v9 h-9 Z M1714.5,13.5 V11 Q1714.5,10.5 1715,10.5 H1724 Q1724.5,10.5 1724.5,11 V20 Q1724.5,20.5 1724,20.5 H1721.5" stroke="#ddd" stroke-width="1.2" fill="none"/>
<path d="M1765.5,10.5 L1776,21 M1776,10.5 L1765.5,21" stroke="#e8e8e8" stroke-width="1.4"/>
<g transform="translate(14,105)" fill="none" stroke="#e4e4e4" stroke-width="1.2" stroke-linecap="round" stroke-linejoin="round"><path d="M0.5,19.5 V0.5 H9 L13.5,5 V19.5 Z M9,0.5 V5 H13.5"/><rect x="4" y="10" width="6" height="6"/><path d="M6.5,8 V11 H8.5"/></g>
<g transform="translate(42,111)" fill="none" stroke="#e4e4e4" stroke-width="1.3" stroke-linecap="round" stroke-linejoin="round"><path d="M0.5,0.5 L5.5,5.5 L10.5,0.5"/></g>
<g transform="translate(323,104)" fill="none" stroke="#e4e4e4" stroke-width="1.2" stroke-linecap="round" stroke-linejoin="round"><path d="M0.5,21 V0.5 H9.5 L14.5,5.5 V13 M9.5,0.5 V5.5 H14.5 M0.5,21 H9"/></g>
<g transform="translate(323,104)" fill="none" stroke="#d7a948" stroke-width="1.3" stroke-linecap="round" stroke-linejoin="round"><path d="M13.5,15 V22 M10,18.5 H17"/></g>
<path d="M450,148.5 L460.5,159 M460.5,148.5 L450,159" stroke="#e0e0e0" stroke-width="1.5"/>
<path d="M1469.5,151 L1474.5,156 L1479.5,151" stroke="#e0e0e0" stroke-width="1.3" fill="none"/>
<path d="M1476,184 L1481,179 L1486,184 M1476,612 L1481,617 L1486,612" stroke="#555" stroke-width="1.3" fill="none"/>
<g transform="translate(10,145)" fill="none" stroke="#e4e4e4" stroke-width="1.2" stroke-linecap="round" stroke-linejoin="round"><rect x="0.5" y="0.5" width="13" height="16" rx="1"/><path d="M0.5,8.5 H13.5 M4.5,3.5 V5 H9.5 V3.5 M4.5,11.5 V13 H9.5 V11.5"/></g>
<g transform="translate(8,178)" fill="none" stroke="#e4e4e4" stroke-width="1.2" stroke-linecap="round" stroke-linejoin="round"><rect x="0.5" y="0.5" width="6.5" height="6.5"/><rect x="10.5" y="0.5" width="6.5" height="6.5"/><rect x="0.5" y="10.5" width="6.5" height="6.5"/><rect x="10.5" y="10.5" width="6.5" height="6.5"/></g>
<g transform="translate(9,210)" fill="none" stroke="#e4e4e4" stroke-width="1.2" stroke-linecap="round" stroke-linejoin="round"><rect x="0.5" y="0.5" width="14" height="16.5" rx="1"/><path d="M4,0.5 V8 L6.5,6 L9,8 V0.5 M0.5,13 H14.5"/></g>
<g transform="translate(8,243)" fill="none" stroke="#e4e4e4" stroke-width="1.2" stroke-linecap="round" stroke-linejoin="round"><path d="M8.5,0.5 L16.5,5 L8.5,9.5 L0.5,5 Z M0.5,9.5 L8.5,14 L16.5,9.5"/></g>
<g transform="translate(8,275)" fill="none" stroke="#e4e4e4" stroke-width="1.2" stroke-linecap="round" stroke-linejoin="round"><rect x="0.5" y="4" width="16" height="11" rx="1"/><path d="M5.5,4 V1 H11.5 V4 M0.5,9 H16.5 M7,8 V10.5 H10 V8"/></g>
<g transform="translate(8,308)" fill="none" stroke="#e4e4e4" stroke-width="1.2" stroke-linecap="round" stroke-linejoin="round"><rect x="0.5" y="1" width="14" height="16" rx="1"/><path d="M3,5 H10 M3,8.5 H8 M3,12 H7 M9,13 L15,5.5 L17,7.5 L11,14.5 L8.5,15.5 Z"/></g>
<g transform="translate(8,341)" fill="none" stroke="#e4e4e4" stroke-width="1.2" stroke-linecap="round" stroke-linejoin="round"><path d="M0.5,17 H16 M3,14 L6,8 L12,4 L14,6 L10,12 Z M12,4 L14,0.5 M6,12 h2"/></g>
<g transform="translate(8,373)" fill="none" stroke="#e4e4e4" stroke-width="1.2" stroke-linecap="round" stroke-linejoin="round"><path d="M0.5,5 L8,0.5 L15,3 V13 L9,17 H0.5 Z M4,17 V12 H8"/></g>
<path d="M145.5,153.5 l4,4 l4,-4" stroke="#cfcfcf" stroke-width="1.1" fill="none"/>
<path d="M44,188.5 l4.5,4.5 l4.5,-4.5" stroke="#cfcfcf" stroke-width="1.1" fill="none"/>
<path d="M44,217 l4.5,4.5 l4.5,-4.5" stroke="#cfcfcf" stroke-width="1.1" fill="none"/>
<path d="M44,271.5 l4.5,4.5 l4.5,-4.5" stroke="#cfcfcf" stroke-width="1.1" fill="none"/>
<path d="M44,300 l4.5,4.5 l4.5,-4.5" stroke="#cfcfcf" stroke-width="1.1" fill="none"/>
<path d="M44,348.5 l4.5,4.5 l4.5,-4.5" stroke="#cfcfcf" stroke-width="1.1" fill="none"/>
<path d="M44,476 l4.5,4.5 l4.5,-4.5" stroke="#cfcfcf" stroke-width="1.1" fill="none"/>
<path d="M46,442 l4.5,4.5 l-4.5,4.5" stroke="#cfcfcf" stroke-width="1.1" fill="none"/>
<g transform="translate(277.5,182)" fill="none" stroke="#e4e4e4" stroke-width="1.2" stroke-linecap="round" stroke-linejoin="round"><path d="M0.5,13.5 V1 Q0.5,0.5 1,0.5 H6 L7.5,2.5 H16 V13.5 Z M0.5,5 H16"/></g>
<g transform="translate(58,210.5)" fill="none" stroke="#e4e4e4" stroke-width="1.2" stroke-linecap="round" stroke-linejoin="round"><path d="M0.5,15 V1 Q0.5,0.5 1,0.5 H6 L8,2.5 H15.5 V15 Z M0.5,5.5 H15.5"/></g>
<path d="M62.5,236 Q62.5,235 63.5,235 H71.5 L75.5,239 V250.5 Q75.5,251.5 74.5,251.5 H63.5 Q62.5,251.5 62.5,250.5 Z" fill="#1d86e3"/>
<rect x="66.0" y="238" width="5.5" height="5.5" fill="none" stroke="#fff" stroke-width="1"/><text x="69.0" y="249.5" font-size="4.5" fill="#cfe6fb" text-anchor="middle" font-family="Liberation Sans" font-weight="bold">PDF</text>
<path d="M62.5,318.4 Q62.5,317.4 63.5,317.4 H71.5 L75.5,321.4 V332.9 Q75.5,333.9 74.5,333.9 H63.5 Q62.5,333.9 62.5,332.9 Z" fill="#1d86e3"/>
<rect x="66.0" y="320.4" width="5.5" height="5.5" fill="none" stroke="#fff" stroke-width="1"/><text x="69.0" y="331.9" font-size="4.5" fill="#cfe6fb" text-anchor="middle" font-family="Liberation Sans" font-weight="bold">PDF</text>
<path d="M62.5,367 Q62.5,366 63.5,366 H71.5 L75.5,370 V381.5 Q75.5,382.5 74.5,382.5 H63.5 Q62.5,382.5 62.5,381.5 Z" fill="#1d86e3"/>
<rect x="66.0" y="369" width="5.5" height="5.5" fill="none" stroke="#fff" stroke-width="1"/><text x="69.0" y="380.5" font-size="4.5" fill="#cfe6fb" text-anchor="middle" font-family="Liberation Sans" font-weight="bold">PDF</text>
<path d="M62.5,391.3 Q62.5,390.3 63.5,390.3 H71.5 L75.5,394.3 V405.8 Q75.5,406.8 74.5,406.8 H63.5 Q62.5,406.8 62.5,405.8 Z" fill="#1d86e3"/>
<rect x="66.0" y="393.3" width="5.5" height="5.5" fill="none" stroke="#fff" stroke-width="1"/><text x="69.0" y="404.8" font-size="4.5" fill="#cfe6fb" text-anchor="middle" font-family="Liberation Sans" font-weight="bold">PDF</text>
<path d="M62.5,415.5 Q62.5,414.5 63.5,414.5 H71.5 L75.5,418.5 V430.0 Q75.5,431.0 74.5,431.0 H63.5 Q62.5,431.0 62.5,430.0 Z" fill="#1d86e3"/>
<rect x="66.0" y="417.5" width="5.5" height="5.5" fill="none" stroke="#fff" stroke-width="1"/><text x="69.0" y="429.0" font-size="4.5" fill="#cfe6fb" text-anchor="middle" font-family="Liberation Sans" font-weight="bold">PDF</text>
<path d="M62.5,498.5 Q62.5,497.5 63.5,497.5 H71.5 L75.5,501.5 V513.0 Q75.5,514.0 74.5,514.0 H63.5 Q62.5,514.0 62.5,513.0 Z" fill="#1d86e3"/>
<rect x="66.0" y="500.5" width="5.5" height="5.5" fill="none" stroke="#fff" stroke-width="1"/><text x="69.0" y="512.0" font-size="4.5" fill="#cfe6fb" text-anchor="middle" font-family="Liberation Sans" font-weight="bold">PDF</text>
<g transform="translate(58,293)" fill="none" stroke="#e4e4e4" stroke-width="1.2" stroke-linecap="round" stroke-linejoin="round"><path d="M2,0.5 H9 M3,0.5 V6 L0.5,9 H10.5 L8,6 V0.5 M5.5,9 V15"/></g>
<g transform="translate(58,342)" fill="none" stroke="#e4e4e4" stroke-width="1.2" stroke-linecap="round" stroke-linejoin="round"><path d="M2,0.5 H9 M3,0.5 V6 L0.5,9 H10.5 L8,6 V0.5 M5.5,9 V15"/></g>
<g transform="translate(58,439.5)" fill="none" stroke="#e4e4e4" stroke-width="1.2" stroke-linecap="round" stroke-linejoin="round"><path d="M2,0.5 H9 M3,0.5 V6 L0.5,9 H10.5 L8,6 V0.5 M5.5,9 V15"/></g>
<g transform="translate(279.5,468)" fill="none" stroke="#e4e4e4" stroke-width="1.1" stroke-linecap="round" stroke-linejoin="round"><rect x="0.5" y="2.5" width="16" height="14" rx="1"/><path d="M0.5,6 H16.5 M3,0.5 V4 M6,0.5 V4 M9,0.5 V4 M12,0.5 V4 M15,0.5 V4"/><path d="M3,9h1.5M6.5,9h1.5M10,9h1.5M13,9h1.5M3,12h1.5M6.5,12h1.5M10,12h1.5M13,12h1.5M3,14.5h1.5M6.5,14.5h1.5M10,14.5h1.5" stroke-width="1.4"/></g>
<g transform="translate(276,498)" fill="none" stroke="#e4e4e4" stroke-width="1.1" stroke-linecap="round" stroke-linejoin="round"><path d="M0.5,7 H4 M4,2 V12 L7,10 H13 V4 H7 Z"/></g>
<g transform="translate(1580,145)" fill="none" stroke="#e4e4e4" stroke-width="1.2" stroke-linecap="round" stroke-linejoin="round"><path d="M0.5,18 V0.5 H8 L12.5,5 V8 M8,0.5 V5 H12.5 M0.5,18 H6"/></g>
<g transform="translate(1580,145)" fill="none" stroke="#2a8bea" stroke-width="1.4" stroke-linecap="round" stroke-linejoin="round"><circle cx="10" cy="13" r="3.8"/><path d="M12.8,15.8 L16,19"/></g>
<g transform="translate(1612,146)" fill="none" stroke="#e4e4e4" stroke-width="1.2" stroke-linecap="round" stroke-linejoin="round"><path d="M0.5,15 V0.5 H17 V6 M0.5,15 H8 M2,13 L6,8 L9,11"/><circle cx="5" cy="4.5" r="1.3"/></g>
<g transform="translate(1612,146)" fill="none" stroke="#2a8bea" stroke-width="1.4" stroke-linecap="round" stroke-linejoin="round"><circle cx="12" cy="11" r="3.8"/><path d="M14.8,13.8 L18,17"/></g>
<g transform="translate(1513,183.5)" fill="none" stroke="#e4e4e4" stroke-width="1.4" stroke-linecap="round" stroke-linejoin="round"><circle cx="6" cy="6" r="5"/><path d="M9.8,9.8 L14,14"/></g>
<path d="M1666,186 L1676.5,196.5 M1676.5,186 L1666,196.5" stroke="#e4e4e4" stroke-width="1.5"/>
<path d="M1737.5,226 l4.5,4.5 l4.5,-4.5" stroke="#cfcfcf" stroke-width="1.2" fill="none"/>
<text x="1736" y="267" font-size="11" fill="#55565a" text-anchor="middle" font-family="Liberation Sans">...</text>
<path d="M1505,303 l4.3,4.3 l4.3,-4.3" stroke="#cfcfcf" stroke-width="1.1" fill="none"/>
<path d="M1505,549 l4.3,4.3 l4.3,-4.3" stroke="#cfcfcf" stroke-width="1.1" fill="none"/>
<rect x="1505.5" y="326.5" width="16" height="16" rx="2" fill="none" stroke="#3a3b3e" stroke-width="1"/>
<rect x="1505.5" y="352.5" width="16" height="16" rx="2" fill="none" stroke="#6a6b6e" stroke-width="1"/>
<rect x="1505.5" y="379.0" width="16" height="16" rx="2" fill="none" stroke="#3a3b3e" stroke-width="1"/>
<rect x="1505.5" y="405.0" width="16" height="16" rx="2" fill="none" stroke="#6a6b6e" stroke-width="1"/>
<rect x="1505.5" y="431.0" width="16" height="16" rx="2" fill="none" stroke="#6a6b6e" stroke-width="1"/>
<rect x="1505.5" y="457.5" width="16" height="16" rx="2" fill="none" stroke="#6a6b6e" stroke-width="1"/>
<rect x="1505.5" y="483.5" width="16" height="16" rx="2" fill="none" stroke="#6a6b6e" stroke-width="1"/>
<rect x="1505.5" y="510.0" width="16" height="16" rx="2" fill="none" stroke="#6a6b6e" stroke-width="1"/>
<path d="M1508.5,360.5 l3.5,3.5 l6.5,-7" stroke="#e8e8e8" stroke-width="1.3" fill="none"/>
<path d="M1508.5,439.0 l3.5,3.5 l6.5,-7" stroke="#e8e8e8" stroke-width="1.3" fill="none"/>
<g transform="translate(1771,145)" fill="none" stroke="#e4e4e4" stroke-width="1.2" stroke-linecap="round" stroke-linejoin="round"><circle cx="9" cy="9" r="3"/><path d="M9,0.5 L10.8,2.6 L13.5,1.7 L14,4.4 L16.8,5 L15.8,7.6 L17.5,9.6 L15.5,11.4 L16.2,14.2 L13.5,14.6 L12.6,17.3 L10,16.2 L8,18 L6.3,15.8 L3.6,16.5 L3.2,13.8 L0.5,13 L1.7,10.5 L0.5,8 L2.7,6.6 L2.3,3.8 L5,3.6 L6.2,1 Z"/></g>
<g transform="translate(1771,181)" fill="none" stroke="#e4e4e4" stroke-width="1.2" stroke-linecap="round" stroke-linejoin="round"><rect x="0.5" y="0.5" width="17" height="8"/><path d="M3.5,0.5 v3 M6.5,0.5 v4.5 M9.5,0.5 v3 M12.5,0.5 v4.5 M15.5,0.5 v3"/></g>
<g transform="translate(1771,209)" fill="none" stroke="#e4e4e4" stroke-width="1.2" stroke-linecap="round" stroke-linejoin="round"><path d="M9,16 Q3,9 3,6 A6,6 0 0 1 15,6 Q15,9 9,16 Z"/><circle cx="9" cy="6" r="2"/><path d="M4,13 Q0.5,14 0.5,15.5 Q0.5,18 9,18 Q17.5,18 17.5,15.5 Q17.5,14 14,13"/></g>
<g transform="translate(1771,243)" fill="none" stroke="#e4e4e4" stroke-width="1.2" stroke-linecap="round" stroke-linejoin="round"><path d="M0.5,17 V0.5 H17 V8 M7,0.5 V4 M0.5,8 H5 M0.5,12 H5 V17 H10 M12,8 H17"/></g>
<g transform="translate(1771,275)" fill="none" stroke="#e4e4e4" stroke-width="1.2" stroke-linecap="round" stroke-linejoin="round"><path d="M3,10 L5,0.5 H13 L15,10 Z M7,8 V3 M11,8 V3 M0.5,10 H17.5 V13 H0.5 Z M0.5,15.5 H17.5 M0.5,17.5 H17.5"/></g>
<g transform="translate(1771,310)" fill="none" stroke="#e4e4e4" stroke-width="1.2" stroke-linecap="round" stroke-linejoin="round"><path d="M17.5,0.5 V13.5 H7 L0.5,7 L7,0.5 Z"/></g>
<g transform="translate(1771,341)" fill="none" stroke="#e4e4e4" stroke-width="1.6" stroke-linecap="round" stroke-linejoin="round"><circle cx="7" cy="7" r="6"/><path d="M11.5,11.5 L17,17"/></g>
<rect x="313.5" y="632.5" width="15.5" height="15.5" fill="none" stroke="#4a4b4e" stroke-width="1.2"/>
<g transform="translate(347,632)" fill="none" stroke="#e4e4e4" stroke-width="1.3" stroke-linecap="round" stroke-linejoin="round"><rect x="0.5" y="0.5" width="16" height="16"/><path d="M8.5,0.5 V16.5"/></g>
<g transform="translate(381,632)" fill="none" stroke="#e4e4e4" stroke-width="1.3" stroke-linecap="round" stroke-linejoin="round"><rect x="0.5" y="0.5" width="15.5" height="16"/><path d="M0.5,5 H16 M0.5,11 H16"/></g>
<path d="M409.5,631 V650" stroke="#4a4b4e" stroke-width="1"/>
<g transform="translate(420,631)" fill="none" stroke="#e4e4e4" stroke-width="1.1" stroke-linecap="round" stroke-linejoin="round"><path d="M0.5,18.5 V0.5 H9 L14.5,6 V18.5 Z M9,0.5 V6 H14.5 M7.5,8 V16 M3.5,12 H11.5 M6,9.5 l1.5,-1.5 l1.5,1.5 M6,14.5 l1.5,1.5 l1.5,-1.5 M5,10.5 l-1.5,1.5 l1.5,1.5 M10,10.5 l1.5,1.5 l-1.5,1.5"/></g>
<g transform="translate(455,632)" fill="none" stroke="#e4e4e4" stroke-width="1.1" stroke-linecap="round" stroke-linejoin="round"><path d="M0.5,0.5 H14 M7,4 V13 M0.5,16.5 H14 M0.5,13 V17 M14,13 V17 M2,15 l-1.5,1.5 l1.5,1.5"/><path d="M3.5,4 H9 L12,7 V13 H3.5 Z"/></g>
<g transform="translate(503,631)" fill="none" stroke="#e4e4e4" stroke-width="1.2" stroke-linecap="round" stroke-linejoin="round"><path d="M4.5,10 V4 Q4.5,2.5 6,2.5 Q7.5,2.5 7.5,4 V9 M7.5,8 V1.8 Q7.5,0.5 9,0.5 Q10.5,0.5 10.5,1.8 V8 M10.5,8 V2.5 Q10.5,1.2 12,1.2 Q13.5,1.2 13.5,2.5 V9 M13.5,8 V4.5 Q13.5,3.2 15,3.2 Q16.5,3.2 16.5,4.5 V11 Q16.5,18.5 10,18.5 Q6,18.5 4,14 L1,9.5 Q0.5,8 2,7.8 Q3,7.7 4.5,10"/></g>
<g transform="translate(540.5,633)" fill="none" stroke="#e4e4e4" stroke-width="1.2" stroke-linecap="round" stroke-linejoin="round"><path d="M0.5,0.5 V14 L4,10.5 L6.5,16.5 L8.5,15.5 L6,9.5 H10.5 Z"/></g>
<g transform="translate(572,632)" fill="none" stroke="#e4e4e4" stroke-width="1.2" stroke-linecap="round" stroke-linejoin="round"><path d="M1,0.5 H6 M3.5,0.5 V17 M1,17 H6"/><path d="M7,13 L10,4 L13,13 M8,10 H12"/></g>
<g transform="translate(604.5,632)" fill="none" stroke="#e4e4e4" stroke-width="1.3" stroke-linecap="round" stroke-linejoin="round"><circle cx="7" cy="7" r="6.3"/><path d="M11.5,11.5 L17,17 M4,7 H10 M7,4 V10"/></g>
<path d="M1032.5,636.5 L1038.5,641 L1032.5,645.5 Z M1040.5,636.5 V645.5" stroke="#6a6b6e" stroke-width="1.1" fill="none"/>
<path d="M12,671 l3.5,3.5 l-3.5,3.5 M16.5,671 l3.5,3.5 l-3.5,3.5" stroke="#dcdcdc" stroke-width="1.2" fill="none"/>
<path d="M1472,671 l3.5,3.5 l-3.5,3.5 M1476.5,671 l3.5,3.5 l-3.5,3.5" stroke="#dcdcdc" stroke-width="1.2" fill="none"/>
<path d="M158,673.5 l4.3,4.3 l4.3,-4.3" stroke="#cfcfcf" stroke-width="1.1" fill="none"/>
<g transform="translate(181.5,670)" fill="none" stroke="#e4e4e4" stroke-width="1.2" stroke-linecap="round" stroke-linejoin="round"><path d="M0.5,0.5 H13 L8,6.5 V12 L5.5,10.5 V6.5 Z"/></g>
<path d="M207.5,674 l4.2,4.2 l4.2,-4.2" stroke="#cfcfcf" stroke-width="1.1" fill="none"/>
<g transform="translate(226,669)" fill="none" stroke="#e4e4e4" stroke-width="1.2" stroke-linecap="round" stroke-linejoin="round"><path d="M0.5,7.5 Q4.5,1.5 9,1.5 Q13.5,1.5 17.5,7.5 Q13.5,13.5 9,13.5 Q4.5,13.5 0.5,7.5 Z"/><circle cx="9" cy="7.5" r="2.8"/><path d="M2,14 L16,1"/></g>
<g transform="translate(260.5,670)" fill="none" stroke="#e4e4e4" stroke-width="1.4" stroke-linecap="round" stroke-linejoin="round"><circle cx="5.5" cy="5.5" r="4.8"/><path d="M9,9 L13.5,13.5"/></g>
<path d="M540,671.5 L550.5,682 M550.5,671.5 L540,682" stroke="#e4e4e4" stroke-width="1.5"/>
<g transform="translate(567,671)" fill="none" stroke="#e4e4e4" stroke-width="1.3" stroke-linecap="round" stroke-linejoin="round"><path d="M3.5,1 H15 M3.5,5.5 H15 M3.5,10 H15"/><path d="M0.5,1 h0.5 M0.5,5.5 h0.5 M0.5,10 h0.5" stroke-width="1.8"/></g>
<path d="M587.5,674.5 l4.2,4.2 l4.2,-4.2" stroke="#cfcfcf" stroke-width="1.1" fill="none"/>
<g transform="translate(8,700)" fill="none" stroke="#e4e4e4" stroke-width="1.5" stroke-linecap="round" stroke-linejoin="round"><path d="M5.5,1.5 H17.5 M5.5,7 H17.5 M5.5,12.5 H17.5"/><path d="M1,1.5 h0.6 M1,7 h0.6 M1,12.5 h0.6" stroke-width="2"/></g>
<g transform="translate(7,731)" fill="none" stroke="#e4e4e4" stroke-width="1.1" stroke-linecap="round" stroke-linejoin="round"><path d="M9,0.5 L17,4 V14 L9,17.5 L1,14 V4 Z M1,4 L9,7.5 L17,4 M9,7.5 V17.5"/><text x="4.5" y="15" font-size="6.5" fill="#ddd" stroke="none" font-family="Liberation Sans" font-weight="bold">3D</text></g>
<g transform="translate(7,764)" fill="none" stroke="#e4e4e4" stroke-width="1.1" stroke-linecap="round" stroke-linejoin="round"><path d="M3,15 V2 Q3,0.5 4.5,0.5 H16 Q17.5,0.5 17.5,2 Q17.5,3.5 16,3.5 H14.5 V15 Q14.5,17.5 12,17.5 H2 Q0.5,17.5 0.5,16 Q0.5,14.5 2,14.5 H11"/><text x="5" y="12" font-size="6.5" fill="#ddd" stroke="none" font-family="Liberation Sans" font-weight="bold">JS</text></g>
<g transform="translate(38,705.5)" fill="none" stroke="#e4e4e4" stroke-width="1.2" stroke-linecap="round" stroke-linejoin="round"><rect x="0.5" y="0.5" width="11" height="11"/><path d="M3,6 H9 M6,3 V9"/></g>
<path d="M200,713.5 l4.5,-4.5 l4.5,4.5" stroke="#dcdcdc" stroke-width="1.2" fill="none"/>
<g transform="translate(735,704)" fill="none" stroke="#e4e4e4" stroke-width="1.3" stroke-linecap="round" stroke-linejoin="round"><path d="M2,0.5 V15 M8,0.5 V15 M14,0.5 V15"/><circle cx="2" cy="4.5" r="1.6"/><circle cx="8" cy="10.5" r="1.6"/><circle cx="14" cy="4.5" r="1.6"/></g>
<path d="M219.5,695 V727.5" stroke="#2a2b2e" stroke-width="1.2"/>
<path d="M219.5,727.5 V965" stroke="#46474a" stroke-width="1"/>
<path d="M312.5,695 V727.5" stroke="#2a2b2e" stroke-width="1.2"/>
<path d="M312.5,727.5 V965" stroke="#46474a" stroke-width="1"/>
<path d="M517.5,695 V727.5" stroke="#2a2b2e" stroke-width="1.2"/>
<path d="M517.5,727.5 V965" stroke="#46474a" stroke-width="1"/>
<path d="M606,695 V727.5" stroke="#2a2b2e" stroke-width="1.2"/>
<path d="M606,727.5 V965" stroke="#46474a" stroke-width="1"/>
<path d="M657.5,695 V727.5" stroke="#2a2b2e" stroke-width="1.2"/>
<path d="M657.5,727.5 V965" stroke="#46474a" stroke-width="1"/>
<path d="M759.5,695 V727.5" stroke="#2a2b2e" stroke-width="1.2"/>
<path d="M759.5,727.5 V965" stroke="#46474a" stroke-width="1"/>
<path d="M834.5,695 V727.5" stroke="#2a2b2e" stroke-width="1.2"/>
<path d="M834.5,727.5 V965" stroke="#46474a" stroke-width="1"/>
<path d="M890.5,695 V727.5" stroke="#2a2b2e" stroke-width="1.2"/>
<path d="M890.5,727.5 V965" stroke="#46474a" stroke-width="1"/>
<path d="M937.5,695 V727.5" stroke="#2a2b2e" stroke-width="1.2"/>
<path d="M937.5,727.5 V965" stroke="#46474a" stroke-width="1"/>
<path d="M44,737 l4.3,4.3 l4.3,-4.3" stroke="#cfcfcf" stroke-width="1.1" fill="none"/>
<path d="M44,924.3 l4.3,4.3 l4.3,-4.3" stroke="#cfcfcf" stroke-width="1.1" fill="none"/>
<g transform="translate(76,753.5)" fill="none" stroke="#e4e4e4" stroke-width="1.1" stroke-linecap="round" stroke-linejoin="round"><rect x="0.5" y="0.5" width="11" height="7.5"/><path d="M0.5,11.5 H12.5 L16,14 M12.5,11.5 L15.5,9"/><path d="M0.5,15.5 q1.5,-1.8 3,0 q1.5,-1.8 3,0 q1.5,-1.8 3,0 q1.5,-1.8 3,0 q1.5,-1.8 3,0"/></g>
<g transform="translate(76,776.5)" fill="none" stroke="#e4e4e4" stroke-width="1.1" stroke-linecap="round" stroke-linejoin="round"><rect x="0.5" y="0.5" width="11" height="7.5"/><path d="M0.5,11.5 H12.5 L16,14 M12.5,11.5 L15.5,9"/><path d="M0.5,15.5 q1.5,-1.8 3,0 q1.5,-1.8 3,0 q1.5,-1.8 3,0 q1.5,-1.8 3,0 q1.5,-1.8 3,0"/></g>
<g transform="translate(76,941)" fill="none" stroke="#e4e4e4" stroke-width="1.1" stroke-linecap="round" stroke-linejoin="round"><rect x="0.5" y="0.5" width="11" height="7.5"/><path d="M0.5,11.5 H12.5 L16,14 M12.5,11.5 L15.5,9"/><path d="M0.5,15.5 q1.5,-1.8 3,0 q1.5,-1.8 3,0 q1.5,-1.8 3,0 q1.5,-1.8 3,0 q1.5,-1.8 3,0"/></g>
<ellipse cx="84.2" cy="821" rx="8" ry="6" fill="none" stroke="#e4e4e4" stroke-width="1.2"/>
<g transform="translate(76,834.5)" fill="none" stroke="#e4e4e4" stroke-width="1.1" stroke-linecap="round" stroke-linejoin="round"><rect x="0.5" y="0.5" width="11" height="7.5"/><path d="M0.5,11.5 H12.5 L15.5,14 L12,17.5 M12,17.5 l0.5,-3 M12,17.5 l3,-0.5"/></g>
<g transform="translate(76,857.5)" fill="none" stroke="#e4e4e4" stroke-width="1.2" stroke-linecap="round" stroke-linejoin="round"><rect x="0.5" y="0.5" width="16.5" height="16.5"/><path d="M5,13 L8.75,4 L12.5,13 M6.3,10 H11.2"/></g>
<path d="M76.5,911 V893 H93" stroke="#7d5fc9" stroke-width="1" stroke-dasharray="1.2 1.2" fill="none"/>
<g transform="translate(77,893)" fill="none" stroke="#e4e4e4" stroke-width="1.2" stroke-linecap="round" stroke-linejoin="round"><path d="M4,14 L10,6 H16 V17 H4"/><circle cx="4" cy="14" r="1.2" fill="#e4e4e4"/><circle cx="10" cy="6" r="1.2" fill="#e4e4e4"/><circle cx="16" cy="6" r="1.2" fill="#e4e4e4"/><circle cx="16" cy="17" r="1.2" fill="#e4e4e4"/><circle cx="4" cy="17" r="1.2" fill="#e4e4e4"/></g>
<rect x="791" y="755" width="11.5" height="11.5" fill="#f0141e"/>
<rect x="791" y="778" width="11.5" height="11.5" fill="#f0141e"/>
<rect x="791" y="815" width="11.5" height="11.5" fill="#f0141e"/>
<rect x="791" y="838" width="11.5" height="11.5" fill="#f0141e"/>
<rect x="791" y="861" width="11.5" height="11.5" fill="#f0141e"/>
<rect x="791" y="897" width="11.5" height="11.5" fill="#f0141e"/>
<rect x="791" y="942.5" width="11.5" height="11.5" fill="#e8872a"/>
<rect x="838.5" y="754" width="13.5" height="13.5" rx="2" fill="none" stroke="#4a4b4e" stroke-width="1"/>
<path d="M840.5,760.75 Q845.25,755.5 850,760.75 Q845.25,766 840.5,760.75 Z" fill="none" stroke="#dcdcdc" stroke-width="1"/><circle cx="845.25" cy="760.75" r="1.8" fill="none" stroke="#dcdcdc" stroke-width="1"/>
<rect x="838.5" y="777" width="13.5" height="13.5" rx="2" fill="none" stroke="#4a4b4e" stroke-width="1"/>
<path d="M840.5,783.75 Q845.25,778.5 850,783.75 Q845.25,789 840.5,783.75 Z" fill="none" stroke="#dcdcdc" stroke-width="1"/><circle cx="845.25" cy="783.75" r="1.8" fill="none" stroke="#dcdcdc" stroke-width="1"/>
<rect x="838.5" y="814" width="13.5" height="13.5" rx="2" fill="none" stroke="#4a4b4e" stroke-width="1"/>
<path d="M840.5,820.75 Q845.25,815.5 850,820.75 Q845.25,826 840.5,820.75 Z" fill="none" stroke="#dcdcdc" stroke-width="1"/><circle cx="845.25" cy="820.75" r="1.8" fill="none" stroke="#dcdcdc" stroke-width="1"/>
<rect x="838.5" y="837" width="13.5" height="13.5" rx="2" fill="none" stroke="#4a4b4e" stroke-width="1"/>
<path d="M840.5,843.75 Q845.25,838.5 850,843.75 Q845.25,849 840.5,843.75 Z" fill="none" stroke="#dcdcdc" stroke-width="1"/><circle cx="845.25" cy="843.75" r="1.8" fill="none" stroke="#dcdcdc" stroke-width="1"/>
<rect x="838.5" y="860" width="13.5" height="13.5" rx="2" fill="none" stroke="#4a4b4e" stroke-width="1"/>
<path d="M840.5,866.75 Q845.25,861.5 850,866.75 Q845.25,872 840.5,866.75 Z" fill="none" stroke="#dcdcdc" stroke-width="1"/><circle cx="845.25" cy="866.75" r="1.8" fill="none" stroke="#dcdcdc" stroke-width="1"/>
<rect x="838.5" y="941.5" width="13.5" height="13.5" rx="2" fill="none" stroke="#4a4b4e" stroke-width="1"/>
<path d="M840.5,948.25 Q845.25,943.0 850,948.25 Q845.25,953.5 840.5,948.25 Z" fill="none" stroke="#dcdcdc" stroke-width="1"/><circle cx="845.25" cy="948.25" r="1.8" fill="none" stroke="#dcdcdc" stroke-width="1"/>
<path d="M1477,709 l4.5,-4.5 l4.5,4.5 M1477,928 l4.5,4.5 l4.5,-4.5" stroke="#555" stroke-width="1.3" fill="none"/></svg>
<!-- red annotation rects -->
<div class="rr" style="left:3px;top:5px;width:1794px;height:25px"></div>
<div class="rr" style="left:3px;top:27px;width:1791px;height:59px"></div>
<div class="rr" style="left:3px;top:129px;width:297px;height:489px"></div>
<div class="rr" style="left:299px;top:129px;width:1192px;height:490px"></div>
<div class="rr" style="left:1495px;top:132px;width:298px;height:490px"></div>
<div class="rr" style="left:1px;top:656px;width:1790px;height:312px"></div>
<!-- labels -->
<div class="lab" style="left:932.2px;top:9.6px;width:230.9px;height:38.6px;border-radius:5px"></div>
<div class="lab" style="left:676px;top:35.1px;width:230.7px;height:38.2px;border-radius:5px"></div>
<div class="lab" style="left:34.4px;top:561.6px;width:231.2px;height:39px;border-radius:5px"></div>
<div class="lab" style="left:1095.9px;top:469.5px;width:316.1px;height:92.3px;border-radius:8px"></div>
<div class="lab" style="left:1525.2px;top:564.4px;width:230.4px;height:38.3px;border-radius:5px"></div>
<div class="lab" style="left:1046.25px;top:629px;width:231.5px;height:38.2px;border-radius:5px"></div>
<div class="lab" style="left:1043.7px;top:775.1px;width:315.3px;height:93px;border-radius:8px"></div>
<span class="t" style="z-index:65;color:#000;left:958.1px;top:15.9px;font-size:26.5px;letter-spacing:0.58px">Command Bar</span>
<span class="t" style="z-index:65;color:#000;left:737.7px;top:41.9px;font-size:27px;letter-spacing:0.86px">Tool Bar</span>
<span class="t" style="z-index:65;color:#000;left:88.0px;top:568.5px;font-size:26px;letter-spacing:0.56px">Left Panel</span>
<span class="t" style="z-index:65;color:#000;left:1125.7px;top:502.6px;font-size:27px;letter-spacing:0.20px">This is the work area</span>
<span class="t" style="z-index:65;color:#000;left:1568.8px;top:570.4px;font-size:26.5px;letter-spacing:0.26px">Right Panel</span>
<span class="t" style="z-index:65;color:#000;left:1072.5px;top:635.1px;font-size:26.5px;letter-spacing:0.29px">Navigation Bar</span>
<span class="t" style="z-index:65;color:#000;left:1065.6px;top:807.6px;font-size:27px;letter-spacing:0.05px">Advanced Markup List</span>
<svg style="left:0;top:0;z-index:70" width="1800" height="973">
<g fill="#0eaa8c" stroke="none">
<path d="M646.7,14.7 L674.2,-0.5 L674.2,27.5 Z"/>
<path d="M480,62.3 L507.3,48.7 L507.3,76 Z"/>
<path d="M631,641.5 L657.5,628.5 L657.5,655.5 Z"/>
<path d="M688.5,823.2 L715.8,809.2 L715.8,837 Z"/>
</g>
<g stroke="#0eaa8c" stroke-linecap="round" fill="none">
<path d="M668,15 L922.5,16" stroke-width="9.4"/>
<path d="M503,63 L670,61.7" stroke-width="9.2"/>
<path d="M652,643.5 L1017,642.2" stroke-width="9.3"/>
<path d="M710,823.3 L1005.5,823" stroke-width="9.2"/>
</g>
</svg>
</body></html>
